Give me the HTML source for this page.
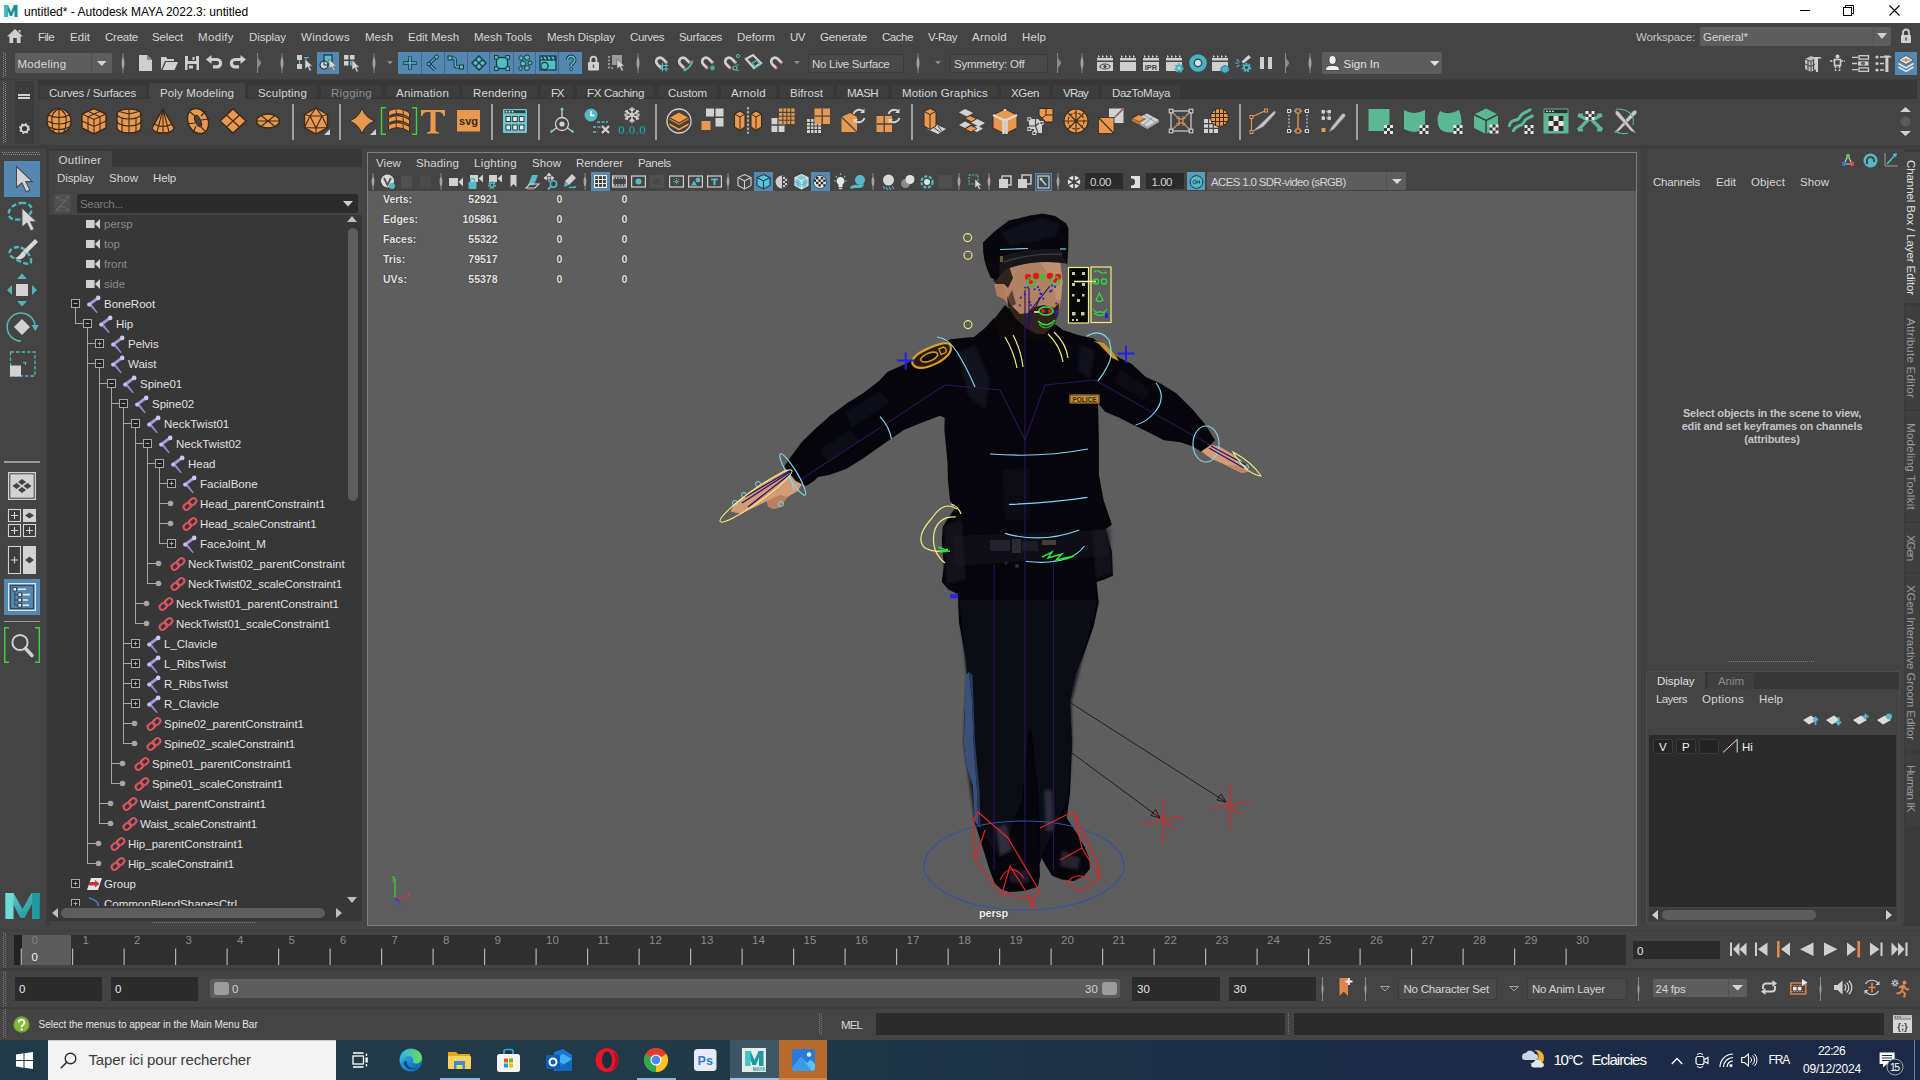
<!DOCTYPE html>
<html><head><meta charset="utf-8"><title>Maya</title>
<style>
html,body{margin:0;padding:0;}
body{width:1920px;height:1080px;overflow:hidden;background:#444444;font-family:"Liberation Sans",sans-serif;position:relative;}
div,svg{box-sizing:border-box;}
svg{overflow:visible;}
</style></head><body>
<!-- p_top -->
<div style="position:absolute;left:0px;top:0px;width:1920px;height:23px;background:#ffffff;"></div>
<svg style="position:absolute;left:3px;top:3px;" width="16" height="17" viewBox="0 0 16 17"><rect x="0" y="0" width="16" height="17" fill="#d9f0f0" opacity=".5"/><path d="M1.5 2 L5 2 L8 9 L11 2 L14.5 2 L14.5 14 L11.5 14 L11.5 7 L9 13 L7 13 L4.5 7 L4.5 14 L1.5 14 Z" fill="#1a8f96"/><path d="M1.5 2 L5 2 L5 14 L1.5 14Z" fill="#38b8b8"/></svg>
<div style="position:absolute;top:3.8px;line-height:16px;font-size:12px;color:#000;white-space:nowrap;letter-spacing:0.01px;left:24.0px;">untitled* - Autodesk MAYA 2022.3: untitled</div>
<div style="position:absolute;left:1800px;top:10px;width:10px;height:1px;background:#000;"></div>
<svg style="position:absolute;left:1843px;top:5px;" width="12" height="12" viewBox="0 0 12 12"><rect x="0.5" y="2.5" width="8" height="8" fill="none" stroke="#000"/><path d="M2.5 2.5 V0.5 H10.5 V8.5 H8.5" fill="none" stroke="#000"/></svg>
<svg style="position:absolute;left:1889px;top:5px;" width="12" height="12" viewBox="0 0 12 12"><path d="M0.5 0.5 L10.5 10.5 M10.5 0.5 L0.5 10.5" stroke="#000" stroke-width="1.1"/></svg>
<div style="position:absolute;left:0px;top:23px;width:1920px;height:27px;background:#444444;"></div>
<svg style="position:absolute;left:7px;top:29px;" width="16" height="14" viewBox="0 0 16 14"><path d="M8 0 L16 7.5 L13.6 7.5 L13.6 14 L9.8 14 L9.8 9 L6.2 9 L6.2 14 L2.4 14 L2.4 7.5 L0 7.5 Z M11.5 1 h2 v3 l-2 -1.8z" fill="#d0d0d0"/></svg>
<div style="position:absolute;top:30.0px;line-height:15px;font-size:11.5px;color:#d6d6d6;white-space:nowrap;letter-spacing:-0.63px;left:38.0px;">File</div>
<div style="position:absolute;top:30.0px;line-height:15px;font-size:11.5px;color:#d6d6d6;white-space:nowrap;letter-spacing:0.05px;left:70.0px;">Edit</div>
<div style="position:absolute;top:30.0px;line-height:15px;font-size:11.5px;color:#d6d6d6;white-space:nowrap;letter-spacing:-0.25px;left:105.0px;">Create</div>
<div style="position:absolute;top:30.0px;line-height:15px;font-size:11.5px;color:#d6d6d6;white-space:nowrap;letter-spacing:-0.16px;left:152.0px;">Select</div>
<div style="position:absolute;top:30.0px;line-height:15px;font-size:11.5px;color:#d6d6d6;white-space:nowrap;letter-spacing:0.35px;left:198.0px;">Modify</div>
<div style="position:absolute;top:30.0px;line-height:15px;font-size:11.5px;color:#d6d6d6;white-space:nowrap;letter-spacing:-0.10px;left:249.0px;">Display</div>
<div style="position:absolute;top:30.0px;line-height:15px;font-size:11.5px;color:#d6d6d6;white-space:nowrap;letter-spacing:0.34px;left:301.0px;">Windows</div>
<div style="position:absolute;top:30.0px;line-height:15px;font-size:11.5px;color:#d6d6d6;white-space:nowrap;letter-spacing:-0.03px;left:365.0px;">Mesh</div>
<div style="position:absolute;top:30.0px;line-height:15px;font-size:11.5px;color:#d6d6d6;white-space:nowrap;letter-spacing:-0.01px;left:408.0px;">Edit Mesh</div>
<div style="position:absolute;top:30.0px;line-height:15px;font-size:11.5px;color:#d6d6d6;white-space:nowrap;letter-spacing:0.00px;left:474.0px;">Mesh Tools</div>
<div style="position:absolute;top:30.0px;line-height:15px;font-size:11.5px;color:#d6d6d6;white-space:nowrap;letter-spacing:-0.09px;left:547.0px;">Mesh Display</div>
<div style="position:absolute;top:30.0px;line-height:15px;font-size:11.5px;color:#d6d6d6;white-space:nowrap;letter-spacing:-0.40px;left:630.0px;">Curves</div>
<div style="position:absolute;top:30.0px;line-height:15px;font-size:11.5px;color:#d6d6d6;white-space:nowrap;letter-spacing:-0.30px;left:679.0px;">Surfaces</div>
<div style="position:absolute;top:30.0px;line-height:15px;font-size:11.5px;color:#d6d6d6;white-space:nowrap;letter-spacing:0.05px;left:737.0px;">Deform</div>
<div style="position:absolute;top:30.0px;line-height:15px;font-size:11.5px;color:#d6d6d6;white-space:nowrap;letter-spacing:-0.49px;left:790.0px;">UV</div>
<div style="position:absolute;top:30.0px;line-height:15px;font-size:11.5px;color:#d6d6d6;white-space:nowrap;letter-spacing:-0.12px;left:820.0px;">Generate</div>
<div style="position:absolute;top:30.0px;line-height:15px;font-size:11.5px;color:#d6d6d6;white-space:nowrap;letter-spacing:-0.45px;left:882.0px;">Cache</div>
<div style="position:absolute;top:30.0px;line-height:15px;font-size:11.5px;color:#d6d6d6;white-space:nowrap;letter-spacing:-0.46px;left:928.0px;">V-Ray</div>
<div style="position:absolute;top:30.0px;line-height:15px;font-size:11.5px;color:#d6d6d6;white-space:nowrap;letter-spacing:0.29px;left:972.0px;">Arnold</div>
<div style="position:absolute;top:30.0px;line-height:15px;font-size:11.5px;color:#d6d6d6;white-space:nowrap;letter-spacing:0.09px;left:1022.0px;">Help</div>
<div style="position:absolute;top:30.0px;line-height:15px;font-size:11.5px;color:#c8c8c8;white-space:nowrap;letter-spacing:-0.15px;left:1636.0px;">Workspace:</div>
<div style="position:absolute;left:1700px;top:27px;width:191px;height:19px;background:#5d5d5d;border-radius:2px;"></div>
<div style="position:absolute;left:1873px;top:27px;width:1px;height:19px;background:#505050;"></div>
<div style="position:absolute;top:30.0px;line-height:15px;font-size:11.5px;color:#d6d6d6;white-space:nowrap;letter-spacing:-0.05px;left:1703.0px;">General*</div>
<svg style="position:absolute;left:1877px;top:33px;" width="10" height="6" viewBox="0 0 10 6"><path d="M0 0 H10 L5 6Z" fill="#d0d0d0"/></svg>
<svg style="position:absolute;left:1900px;top:28px;" width="12" height="16" viewBox="0 0 12 16"><path d="M3 7 V4.5 a3 3 0 0 1 6 0 V7" fill="none" stroke="#cfcfcf" stroke-width="1.8"/><rect x="1" y="7" width="10" height="8" rx="1" fill="#cfcfcf"/><rect x="5.3" y="9.5" width="1.4" height="3" fill="#444"/></svg>
<div style="position:absolute;left:0px;top:50px;width:1920px;height:30px;background:#444444;"></div>
<div style="position:absolute;left:0px;top:78.5px;width:1920px;height:1.5px;background:#3d3d3d;"></div>
<!-- p_status -->
<svg style="position:absolute;left:3px;top:52px;" width="4" height="25" viewBox="0 0 4 25"><path d="M0.5 0.0 V25" stroke="#8a8a8a" stroke-width="1" stroke-dasharray="1 1"/><path d="M2.5 1.0 V25" stroke="#8a8a8a" stroke-width="1" stroke-dasharray="1 1"/></svg>
<div style="position:absolute;left:15px;top:53px;width:97px;height:20px;background:#5d5d5d;border-radius:2px;"></div>
<div style="position:absolute;left:91px;top:53px;width:1px;height:20px;background:#525252;"></div>
<div style="position:absolute;top:57.0px;line-height:15px;font-size:11.5px;color:#d8d8d8;white-space:nowrap;letter-spacing:0.29px;left:17.5px;">Modeling</div>
<svg style="position:absolute;left:97.25px;top:61.0px;" width="9.5" height="5" viewBox="0 0 9.5 5"><path d="M0 0 H9.5 L4.75 5Z" fill="#d4d4d4"/></svg>
<svg style="position:absolute;left:121px;top:53px;" width="4" height="20" viewBox="0 0 4 20"><rect x="1.5" y="0" width="1" height="20" fill="#868686"/><path d="M2 3.500 C4 7 4 13 2 16.500 C0 13 0 7 2 3.500Z" fill="#a0a0a0"/></svg>
<svg style="position:absolute;left:139px;top:55px;" width="13" height="16" viewBox="0 0 13 16"><path d="M0 0 H8 L13 5 V16 H0Z" fill="#cfcfcf"/><path d="M8 0 V5 H13Z" fill="#8a8a8a"/></svg>
<svg style="position:absolute;left:161px;top:56px;" width="17" height="14" viewBox="0 0 17 14"><path d="M0 14 V1 H5 L6.5 3 H13 V5 H4 L0 14Z" fill="#cfcfcf"/><path d="M1.5 14 L5 6 H17 L13.5 14Z" fill="#cfcfcf"/></svg>
<svg style="position:absolute;left:185px;top:56px;" width="14" height="14" viewBox="0 0 14 14"><path d="M0 0 H14 V14 H0Z" fill="#cfcfcf"/><rect x="3" y="0" width="8" height="5" fill="#444"/><rect x="7.5" y="1" width="2" height="3" fill="#cfcfcf"/><rect x="2.5" y="8" width="9" height="6" fill="#444"/><rect x="4" y="9.5" width="4" height="3" fill="#cfcfcf"/></svg>
<svg style="position:absolute;left:206px;top:55px;" width="17" height="15" viewBox="0 0 17 15"><path d="M0 4.5 L5.5 0 V3 H11 a5.2 5.2 0 0 1 0 10.4 H7 V10.2 H11 a2.1 2.1 0 0 0 0 -4.2 H5.5 V9Z" fill="#cfcfcf"/></svg>
<svg style="position:absolute;left:229px;top:55px;" width="17" height="15" viewBox="0 0 17 15"><path transform="translate(17,0) scale(-1,1)" d="M0 4.5 L5.5 0 V3 H11 a5.2 5.2 0 0 1 0 10.4 H7 V10.2 H11 a2.1 2.1 0 0 0 0 -4.2 H5.5 V9Z" fill="#cfcfcf"/></svg>
<svg style="position:absolute;left:257px;top:53px;" width="5" height="20" viewBox="0 0 5 20"><path d="M0.5 0 V20 M0.5 5 L4 10 L0.5 15Z" fill="#8a8a8a" stroke="#8a8a8a" stroke-width="1"/></svg>
<svg style="position:absolute;left:280px;top:53px;" width="4" height="20" viewBox="0 0 4 20"><rect x="1.5" y="0" width="1" height="20" fill="#868686"/><path d="M2 3.500 C4 7 4 13 2 16.500 C0 13 0 7 2 3.500Z" fill="#a0a0a0"/></svg>
<svg style="position:absolute;left:296px;top:55px;" width="18" height="17" viewBox="0 0 18 17"><rect x="1" y="0" width="5" height="5" fill="#cfcfcf"/><rect x="1" y="9" width="5" height="5" fill="#cfcfcf"/><path d="M3.5 5 V9 M8 2.5 H13 M10 2.5 V6" stroke="#4fc1c1" stroke-width="1.2" fill="none"/><path transform="translate(9,4) scale(1.0)" d="M0 0 L0 10 L2.6 7.8 L4.6 12 L6.4 11.2 L4.4 7.2 L7.6 7.2Z" fill="#d4d4d4" stroke="#555" stroke-width="0.6"/></svg>
<div style="position:absolute;left:317px;top:52px;width:22px;height:22px;background:#5588b0;"></div>
<svg style="position:absolute;left:319px;top:54px;" width="18" height="18" viewBox="0 0 18 18"><rect x="5" y="1" width="8" height="9" fill="#4fc1c1" stroke="#1d3442" stroke-width="1.2"/><circle cx="5" cy="11" r="4" fill="#d4d4d4" stroke="#1d3442" stroke-width="1.2"/><path d="M5 11 V7 M5 11 H9" stroke="#1d3442" stroke-width="1"/><path transform="translate(10,5) scale(1.0)" d="M0 0 L0 10 L2.6 7.8 L4.6 12 L6.4 11.2 L4.4 7.2 L7.6 7.2Z" fill="#d4d4d4" stroke="#555" stroke-width="0.6"/></svg>
<svg style="position:absolute;left:343px;top:54px;" width="18" height="18" viewBox="0 0 18 18"><rect x="1" y="1" width="4.5" height="4.5" fill="#cfcfcf"/><rect x="7" y="1" width="4.5" height="4.5" fill="#cfcfcf"/><rect x="1" y="7" width="4.5" height="4.5" fill="#cfcfcf"/><rect x="7" y="7" width="4.5" height="4.5" fill="#4fc1c1"/><path transform="translate(9,6) scale(1.0)" d="M0 0 L0 10 L2.6 7.8 L4.6 12 L6.4 11.2 L4.4 7.2 L7.6 7.2Z" fill="#d4d4d4" stroke="#555" stroke-width="0.6"/></svg>
<svg style="position:absolute;left:372px;top:53px;" width="4" height="20" viewBox="0 0 4 20"><rect x="1.5" y="0" width="1" height="20" fill="#868686"/><path d="M2 3.500 C4 7 4 13 2 16.500 C0 13 0 7 2 3.500Z" fill="#a0a0a0"/></svg>
<svg style="position:absolute;left:387.0px;top:60.75px;" width="6" height="3.5" viewBox="0 0 6 3.5"><path d="M0 0 H6 L3.0 3.5Z" fill="#8a8a8a"/></svg>
<div style="position:absolute;left:398px;top:52px;width:184px;height:22px;background:#5588b0;"></div>
<div style="position:absolute;left:420.6px;top:52px;width:1px;height:22px;background:#3f6b88;"></div>
<div style="position:absolute;left:443.5px;top:52px;width:1px;height:22px;background:#3f6b88;"></div>
<div style="position:absolute;left:466.5px;top:52px;width:1px;height:22px;background:#3f6b88;"></div>
<div style="position:absolute;left:489.4px;top:52px;width:1px;height:22px;background:#3f6b88;"></div>
<div style="position:absolute;left:512.5px;top:52px;width:1px;height:22px;background:#3f6b88;"></div>
<div style="position:absolute;left:535.3px;top:52px;width:1px;height:22px;background:#3f6b88;"></div>
<div style="position:absolute;left:558.2px;top:52px;width:1px;height:22px;background:#3f6b88;"></div>
<svg style="position:absolute;left:400.5px;top:54px;" width="18" height="18" viewBox="0 0 18 18"><path d="M9 2 V16 M2 9 H16" stroke="#1d3442" stroke-width="3.4"/><path d="M9 2.6 V15.4 M2.6 9 H15.4" stroke="#4fc1c1" stroke-width="1.6"/></svg>
<svg style="position:absolute;left:423.5px;top:54px;" width="18" height="18" viewBox="0 0 18 18"><path d="M12 3 L5 10 L11 16" stroke="#1d3442" stroke-width="3.2" fill="none"/><path d="M12 3 L5 10 L11 16" stroke="#4fc1c1" stroke-width="1.4" fill="none"/><circle cx="12.5" cy="3" r="2" fill="#4fc1c1" stroke="#1d3442"/><circle cx="5" cy="10" r="1.8" fill="#4fc1c1" stroke="#1d3442"/></svg>
<svg style="position:absolute;left:446.5px;top:54px;" width="18" height="18" viewBox="0 0 18 18"><path d="M3 4 H7 C10 4 6 13 10 13 H15" stroke="#1d3442" stroke-width="3.2" fill="none"/><path d="M3 4 H7 C10 4 6 13 10 13 H15" stroke="#4fc1c1" stroke-width="1.4" fill="none"/><rect x="1" y="2" width="4" height="4" fill="#4fc1c1" stroke="#1d3442"/><rect x="12.5" y="11" width="4" height="4" fill="#4fc1c1" stroke="#1d3442"/></svg>
<svg style="position:absolute;left:469.5px;top:54px;" width="18" height="18" viewBox="0 0 18 18"><path d="M9 2 L16 9 L9 16 L2 9Z" fill="#4fc1c1" stroke="#1d3442" stroke-width="1.4"/><path d="M5.5 5.5 L12.5 12.5 M12.5 5.5 L5.5 12.5" stroke="#1d3442" stroke-width="1.2"/></svg>
<svg style="position:absolute;left:492.5px;top:54px;" width="18" height="18" viewBox="0 0 18 18"><rect x="3.5" y="3.5" width="11" height="11" fill="#4fc1c1" stroke="#1d3442" stroke-width="1.3"/><g fill="#4fc1c1" stroke="#1d3442" stroke-width="0.9"><rect x="1.5" y="1.5" width="3.6" height="3.6"/><rect x="12.9" y="1.5" width="3.6" height="3.6"/><rect x="1.5" y="12.9" width="3.6" height="3.6"/><rect x="12.9" y="12.9" width="3.6" height="3.6"/></g></svg>
<svg style="position:absolute;left:515.5px;top:54px;" width="18" height="18" viewBox="0 0 18 18"><g fill="#4fc1c1" stroke="#1d3442" stroke-width="1"><circle cx="5" cy="4" r="2.2"/><circle cx="11" cy="3.5" r="2.6"/><circle cx="14" cy="9" r="2"/><circle cx="7" cy="9.5" r="2.6"/><circle cx="11" cy="14" r="2.4"/><circle cx="4.5" cy="14.5" r="1.8"/></g></svg>
<svg style="position:absolute;left:538.5px;top:54px;" width="18" height="18" viewBox="0 0 18 18"><rect x="1" y="2" width="16" height="14" fill="#4fc1c1" stroke="#1d3442" stroke-width="1.2"/><path d="M1 6 H17" stroke="#1d3442" stroke-width="1.2"/><path d="M3 2 l2 4 M7 2 l2 4 M11 2 l2 4 M15 2 l2 4" stroke="#1d3442" stroke-width="1.6"/><circle cx="5.5" cy="12" r="3.6" fill="#4fc1c1" stroke="#1d3442" stroke-width="1.1"/></svg>
<svg style="position:absolute;left:561.5px;top:54px;" width="18" height="18" viewBox="0 0 18 18"><path d="M5.5 6 a3.6 3.6 0 1 1 5.5 3 c-1.6 1 -1.9 1.6 -1.9 3.3" fill="none" stroke="#1d3442" stroke-width="3.6"/><path d="M5.5 6 a3.6 3.6 0 1 1 5.5 3 c-1.6 1 -1.9 1.6 -1.9 3.3" fill="none" stroke="#4fc1c1" stroke-width="1.7"/><circle cx="9.1" cy="15.3" r="1.5" fill="#4fc1c1" stroke="#1d3442" stroke-width="0.9"/></svg>
<svg style="position:absolute;left:588px;top:55px;" width="11" height="16" viewBox="0 0 11 16"><path d="M2.6 7 V4.6 a2.9 2.9 0 0 1 5.8 0 V7" fill="none" stroke="#cfcfcf" stroke-width="1.8"/><rect x="0" y="7" width="11" height="8.5" rx="1" fill="#cfcfcf"/><rect x="4.8" y="9.5" width="1.4" height="3.4" fill="#555"/></svg>
<svg style="position:absolute;left:608px;top:54px;" width="18" height="18" viewBox="0 0 18 18"><path d="M1 2 V14 H6" fill="none" stroke="#cfcfcf" stroke-width="1.2" stroke-dasharray="2 1.5"/><rect x="4" y="1" width="10" height="10" fill="#9a9a9a"/><path transform="translate(9,5) scale(1.0)" d="M0 0 L0 10 L2.6 7.8 L4.6 12 L6.4 11.2 L4.4 7.2 L7.6 7.2Z" fill="#d4d4d4" stroke="#555" stroke-width="0.6"/></svg>
<svg style="position:absolute;left:636px;top:53px;" width="4" height="20" viewBox="0 0 4 20"><rect x="1.5" y="0" width="1" height="20" fill="#868686"/><path d="M2 3.500 C4 7 4 13 2 16.500 C0 13 0 7 2 3.500Z" fill="#a0a0a0"/></svg>
<svg style="position:absolute;left:652px;top:53px;" width="19" height="19" viewBox="0 0 19 19"><g transform="translate(8,8.5) rotate(-45)"><path d="M-3.800 6 V0 A3.800 3.800 0 0 1 3.800 0 V6" stroke="#cfcfcf" stroke-width="2.700" fill="none"/><path d="M-5.150 5 h2.700 v1.600 h-2.700z M2.450 5 h2.700 v1.600 h-2.700z" fill="#d86a7a"/></g><path d="M10.500 10 V18.500 M14 10 V18.500 M8 12.500 H16.500 M8 16 H16.500" stroke="#4fc1c1" stroke-width="1.1"/></svg>
<svg style="position:absolute;left:675px;top:53px;" width="19" height="19" viewBox="0 0 19 19"><g transform="translate(8,8.5) rotate(-45)"><path d="M-3.800 6 V0 A3.800 3.800 0 0 1 3.800 0 V6" stroke="#cfcfcf" stroke-width="2.700" fill="none"/><path d="M-5.150 5 h2.700 v1.600 h-2.700z M2.450 5 h2.700 v1.600 h-2.700z" fill="#d86a7a"/></g><path d="M10 17 C13 16 17 12 17.500 7.500" stroke="#4fc1c1" stroke-width="1.6" fill="none"/><circle cx="10" cy="17" r="1.3" fill="#4fc1c1"/></svg>
<svg style="position:absolute;left:698px;top:53px;" width="19" height="19" viewBox="0 0 19 19"><g transform="translate(8,8.5) rotate(-45)"><path d="M-3.800 6 V0 A3.800 3.800 0 0 1 3.800 0 V6" stroke="#cfcfcf" stroke-width="2.700" fill="none"/><path d="M-5.150 5 h2.700 v1.600 h-2.700z M2.450 5 h2.700 v1.600 h-2.700z" fill="#d86a7a"/></g><circle cx="14.500" cy="15" r="2.4" fill="#35b59a"/></svg>
<svg style="position:absolute;left:721px;top:53px;" width="19" height="19" viewBox="0 0 19 19"><g transform="translate(8,8.5) rotate(-45)"><path d="M-3.800 6 V0 A3.800 3.800 0 0 1 3.800 0 V6" stroke="#cfcfcf" stroke-width="2.700" fill="none"/><path d="M-5.150 5 h2.700 v1.600 h-2.700z M2.450 5 h2.700 v1.600 h-2.700z" fill="#d86a7a"/></g><circle cx="14" cy="15" r="2" fill="none" stroke="#4fc1c1" stroke-width="1.1"/><circle cx="17" cy="3" r="1.6" fill="none" stroke="#4fc1c1"/><path d="M15.500 12 H18 M15.500 17.500 H18" stroke="#4fc1c1" stroke-width="0.8"/></svg>
<svg style="position:absolute;left:744px;top:53px;" width="19" height="19" viewBox="0 0 19 19"><path d="M2 6 L9 2 L17 10 L10 15Z" fill="none" stroke="#cfcfcf" stroke-width="2.2"/><path d="M8 10 L13 7.5 L16.5 11.5 L11.5 14.5Z" fill="none" stroke="#4fc1c1" stroke-width="1.3"/></svg>
<svg style="position:absolute;left:767px;top:53px;" width="19" height="19" viewBox="0 0 19 19"><g transform="translate(8,8.5) rotate(-45)"><path d="M-3.800 6 V0 A3.800 3.800 0 0 1 3.800 0 V6" stroke="#cfcfcf" stroke-width="2.700" fill="none"/><path d="M-5.150 5 h2.700 v1.600 h-2.700z M2.450 5 h2.700 v1.600 h-2.700z" fill="#d86a7a"/></g></svg>
<svg style="position:absolute;left:793.5px;top:60.75px;" width="6" height="3.5" viewBox="0 0 6 3.5"><path d="M0 0 H6 L3.0 3.5Z" fill="#8a8a8a"/></svg>
<div style="position:absolute;left:808px;top:54px;width:96px;height:19px;background:#494949;border:1px solid #3b3b3b;border-radius:2px;"></div>
<div style="position:absolute;top:57.0px;line-height:15px;font-size:11.5px;color:#d6d6d6;white-space:nowrap;letter-spacing:-0.29px;left:812.0px;">No Live Surface</div>
<svg style="position:absolute;left:916px;top:53px;" width="4" height="20" viewBox="0 0 4 20"><rect x="1.5" y="0" width="1" height="20" fill="#868686"/><path d="M2 3.500 C4 7 4 13 2 16.500 C0 13 0 7 2 3.500Z" fill="#a0a0a0"/></svg>
<svg style="position:absolute;left:935.0px;top:60.75px;" width="6" height="3.5" viewBox="0 0 6 3.5"><path d="M0 0 H6 L3.0 3.5Z" fill="#8a8a8a"/></svg>
<div style="position:absolute;left:950px;top:54px;width:98px;height:19px;background:#494949;border:1px solid #3b3b3b;border-radius:2px;"></div>
<div style="position:absolute;top:57.0px;line-height:15px;font-size:11.5px;color:#d6d6d6;white-space:nowrap;letter-spacing:-0.21px;left:954.0px;">Symmetry: Off</div>
<svg style="position:absolute;left:1057px;top:53px;" width="5" height="20" viewBox="0 0 5 20"><path d="M0.5 0 V20 M0.5 5 L4 10 L0.5 15Z" fill="#8a8a8a" stroke="#8a8a8a" stroke-width="1"/></svg>
<svg style="position:absolute;left:1080px;top:53px;" width="4" height="20" viewBox="0 0 4 20"><rect x="1.5" y="0" width="1" height="20" fill="#868686"/><path d="M2 3.500 C4 7 4 13 2 16.500 C0 13 0 7 2 3.500Z" fill="#a0a0a0"/></svg>
<svg style="position:absolute;left:1097px;top:55px;" width="16" height="16" viewBox="0 0 16 16"><path d="M0 3 H16 V5.5 H0Z" fill="#cfcfcf"/><path d="M1 0 l2 1.5 l-2 1.5z M5 0 l2 1.5 l-2 1.5z M9 0 l2 1.5 l-2 1.5z M13 0 l2 1.5 l-2 1.5z" fill="#cfcfcf"/><rect x="0" y="7" width="16" height="9" fill="#cfcfcf"/><ellipse cx="8" cy="11.5" rx="5.5" ry="3" fill="#444"/><ellipse cx="8" cy="11.5" rx="4.2" ry="2" fill="#cfcfcf"/><circle cx="8" cy="11.5" r="1.6" fill="#444"/></svg>
<svg style="position:absolute;left:1120px;top:55px;" width="16" height="16" viewBox="0 0 16 16"><path d="M0 3 H16 V5.5 H0Z" fill="#cfcfcf"/><path d="M1 0 l2 1.5 l-2 1.5z M5 0 l2 1.5 l-2 1.5z M9 0 l2 1.5 l-2 1.5z M13 0 l2 1.5 l-2 1.5z" fill="#cfcfcf"/><rect x="0" y="7" width="16" height="9" fill="#cfcfcf"/></svg>
<svg style="position:absolute;left:1143px;top:55px;" width="16" height="16" viewBox="0 0 16 16"><path d="M0 3 H16 V5.5 H0Z" fill="#cfcfcf"/><path d="M1 0 l2 1.5 l-2 1.5z M5 0 l2 1.5 l-2 1.5z M9 0 l2 1.5 l-2 1.5z M13 0 l2 1.5 l-2 1.5z" fill="#cfcfcf"/><rect x="0" y="7" width="16" height="9" fill="#cfcfcf"/><text x="8" y="14.6" font-size="7.5" font-weight="bold" text-anchor="middle" fill="#3a3a3a" font-family="Liberation Sans">IPR</text></svg>
<svg style="position:absolute;left:1166px;top:55px;" width="18" height="18" viewBox="0 0 18 18"><path d="M0 3 H16 V5.5 H0Z" fill="#cfcfcf"/><path d="M1 0 l2 1.5 l-2 1.5z M5 0 l2 1.5 l-2 1.5z M9 0 l2 1.5 l-2 1.5z M13 0 l2 1.5 l-2 1.5z" fill="#cfcfcf"/><rect x="0" y="7" width="16" height="9" fill="#cfcfcf"/><circle cx="13" cy="13" r="3.6" fill="none" stroke="#45b5c4" stroke-width="2.2" stroke-dasharray="1.8 1.3"/><circle cx="13" cy="13" r="2.4000000000000004" fill="none" stroke="#45b5c4" stroke-width="1.6"/></svg>
<svg style="position:absolute;left:1188.5px;top:54px;" width="18" height="18" viewBox="0 0 18 18"><circle cx="9" cy="9" r="6.6" fill="none" stroke="#45b5c4" stroke-width="4.4"/><circle cx="9" cy="9" r="3" fill="#cfe8ec"/></svg>
<svg style="position:absolute;left:1212px;top:55px;" width="18" height="18" viewBox="0 0 18 18"><path d="M0 3 H16 V5.5 H0Z" fill="#cfcfcf"/><path d="M1 0 l2 1.5 l-2 1.5z M5 0 l2 1.5 l-2 1.5z M9 0 l2 1.5 l-2 1.5z M13 0 l2 1.5 l-2 1.5z" fill="#cfcfcf"/><rect x="0" y="7" width="16" height="9" fill="#cfcfcf"/><path d="M9 12.5 l4 -2.2 l4 2.2 v3.6 l-4 2.2 l-4 -2.2z" fill="#45b5c4" stroke="#2a6c78" stroke-width="0.8"/></svg>
<svg style="position:absolute;left:1234px;top:54px;" width="18" height="18" viewBox="0 0 18 18"><path d="M14.5 1 L17 3.5 L9.5 9.5 L7.5 7.5Z" fill="#cfcfcf"/><path d="M1 9 H5 M2.5 5.5 L5.5 7.5 M2.5 13 L5.5 11" stroke="#45b5c4" stroke-width="1.2"/><circle cx="12.5" cy="13.5" r="3.6" fill="none" stroke="#45b5c4" stroke-width="2.2" stroke-dasharray="1.8 1.3"/><circle cx="12.5" cy="13.5" r="2.4000000000000004" fill="none" stroke="#45b5c4" stroke-width="1.6"/></svg>
<div style="position:absolute;left:1260px;top:57px;width:4px;height:12px;background:#cfcfcf;"></div>
<div style="position:absolute;left:1267.5px;top:57px;width:4px;height:12px;background:#cfcfcf;"></div>
<svg style="position:absolute;left:1285px;top:53px;" width="5" height="20" viewBox="0 0 5 20"><path d="M0.5 0 V20 M0.5 5 L4 10 L0.5 15Z" fill="#8a8a8a" stroke="#8a8a8a" stroke-width="1"/></svg>
<svg style="position:absolute;left:1308px;top:53px;" width="4" height="20" viewBox="0 0 4 20"><rect x="1.5" y="0" width="1" height="20" fill="#868686"/><path d="M2 3.500 C4 7 4 13 2 16.500 C0 13 0 7 2 3.500Z" fill="#a0a0a0"/></svg>
<div style="position:absolute;left:1322px;top:52px;width:120px;height:22px;background:#5d5d5d;border-radius:2px;"></div>
<svg style="position:absolute;left:1325px;top:55px;" width="15" height="16" viewBox="0 0 15 16"><ellipse cx="7.5" cy="5" rx="3.6" ry="4.4" fill="#f0f0f0" stroke="#333" stroke-width="0.8"/><path d="M0.5 15.5 C0.5 10.5 4 10.5 7.5 10.5 S14.5 10.5 14.5 15.5Z" fill="#f0f0f0" stroke="#333" stroke-width="0.8"/></svg>
<div style="position:absolute;top:57.0px;line-height:15px;font-size:11.5px;color:#e0e0e0;white-space:nowrap;letter-spacing:0.03px;left:1343.5px;">Sign In</div>
<svg style="position:absolute;left:1429.75px;top:60.5px;" width="9.5" height="5" viewBox="0 0 9.5 5"><path d="M0 0 H9.5 L4.75 5Z" fill="#e0e0e0"/></svg>
<svg style="position:absolute;left:1805px;top:55px;" width="17" height="17" viewBox="0 0 17 17"><path d="M0 4 L6 1 L11 3 V14 L6 17 L0 14Z" fill="#bdbdbd"/><path d="M0 4 L6 6.5 V17 M6 6.5 L11 3 M0 9 L6 11.5 L11 8.5 M3 5 V15.5 M8.5 5 V15" stroke="#444" stroke-width="1" fill="none"/><path d="M9 2 H15 L17 3.5 H13 V17 H11" fill="#cfcfcf"/></svg>
<svg style="position:absolute;left:1829px;top:54px;" width="17" height="18" viewBox="0 0 17 18"><circle cx="8.5" cy="2.5" r="2" fill="#cfcfcf"/><rect x="5.5" y="5.5" width="6" height="6" fill="none" stroke="#cfcfcf" stroke-width="1.6"/><path d="M1 7 H5 M12 7 H16 M6.5 12 V17 M10.5 12 V17" stroke="#cfcfcf" stroke-width="1.6" stroke-dasharray="2.2 1"/></svg>
<svg style="position:absolute;left:1852px;top:55px;" width="17" height="17" viewBox="0 0 17 17"><g fill="none" stroke="#cfcfcf" stroke-width="1.3"><rect x="7" y="0.7" width="9.5" height="3.4"/><rect x="7" y="12.9" width="9.5" height="3.4"/><path d="M0 2.4 H6 M0 8.5 H5 M0 14.6 H6"/></g><rect x="6" y="6.4" width="10.5" height="4.2" fill="#cfcfcf"/><circle cx="11" cy="8.5" r="2.1" fill="#666"/></svg>
<svg style="position:absolute;left:1875px;top:55px;" width="17" height="17" viewBox="0 0 17 17"><circle cx="2" cy="2" r="1.6" fill="#cfcfcf"/><circle cx="2" cy="8.5" r="1.6" fill="#cfcfcf"/><circle cx="2" cy="15" r="1.6" fill="#cfcfcf"/><path d="M5 2 H9 M5 8.5 H9 M5 15 H9" stroke="#cfcfcf" stroke-width="1.4"/><path d="M9 0.5 H14.5 L17 2.6 H13.4 V17 H10.4 V2.6 H9Z" fill="#cfcfcf"/></svg>
<div style="position:absolute;left:1895px;top:52px;width:22px;height:23px;background:#5588b0;"></div>
<svg style="position:absolute;left:1898px;top:55px;" width="16" height="17" viewBox="0 0 16 17"><path d="M8 0.5 L15.5 5 L8 9.5 L0.5 5Z" fill="#e6e6e6" stroke="#2a3f4e" stroke-width="0.7"/><path d="M4 5 H12 M8 3 V7" stroke="#c0703a" stroke-width="1.2"/><path d="M0.5 8.5 L8 13 L15.5 8.5 M0.5 12 L8 16.5 L15.5 12" fill="none" stroke="#e6e6e6" stroke-width="1.5"/></svg>
<!-- p_shelf -->
<svg style="position:absolute;left:3px;top:82px;" width="4" height="61" viewBox="0 0 4 61"><path d="M0.5 0.0 V61" stroke="#8a8a8a" stroke-width="1" stroke-dasharray="1 1"/><path d="M2.5 1.0 V61" stroke="#8a8a8a" stroke-width="1" stroke-dasharray="1 1"/></svg>
<div style="position:absolute;left:15px;top:81px;width:19px;height:63px;background:#3b3b3b;"></div>
<div style="position:absolute;left:18px;top:94px;width:12px;height:1.6px;background:#d0d0d0;"></div>
<div style="position:absolute;left:18px;top:97px;width:12px;height:1.6px;background:#d0d0d0;"></div>
<svg style="position:absolute;left:18.5px;top:123px;" width="11" height="11" viewBox="0 0 11 11"><circle cx="5.5" cy="5.5" r="3.6" fill="none" stroke="#d0d0d0" stroke-width="2"/><circle cx="5.5" cy="5.5" r="4.6" fill="none" stroke="#d0d0d0" stroke-width="1.8" stroke-dasharray="1.9 1.7"/></svg>
<div style="position:absolute;left:38px;top:80px;width:1879px;height:19px;background:#373737;"></div>
<div style="position:absolute;left:38px;top:84px;width:109px;height:15px;background:#3d3d3d;border-radius:2px 2px 0 0;box-shadow:inset 0 0 0 1px #363636;"></div>
<div style="position:absolute;top:86.0px;line-height:15px;font-size:11.5px;color:#d6d6d6;white-space:nowrap;letter-spacing:-0.26px;left:49.0px;">Curves / Surfaces</div>
<div style="position:absolute;left:149px;top:83px;width:96px;height:17px;background:#444444;border-radius:2px 2px 0 0;"></div>
<div style="position:absolute;top:86.0px;line-height:15px;font-size:11.5px;color:#d6d6d6;white-space:nowrap;letter-spacing:0.14px;left:160.0px;">Poly Modeling</div>
<div style="position:absolute;left:247px;top:84px;width:71px;height:15px;background:#3d3d3d;border-radius:2px 2px 0 0;box-shadow:inset 0 0 0 1px #363636;"></div>
<div style="position:absolute;top:86.0px;line-height:15px;font-size:11.5px;color:#d6d6d6;white-space:nowrap;letter-spacing:0.19px;left:258.0px;">Sculpting</div>
<div style="position:absolute;left:320px;top:84px;width:63px;height:15px;background:#3d3d3d;border-radius:2px 2px 0 0;box-shadow:inset 0 0 0 1px #363636;"></div>
<div style="position:absolute;top:86.0px;line-height:15px;font-size:11.5px;color:#8f8f8f;white-space:nowrap;letter-spacing:0.29px;left:331.0px;">Rigging</div>
<div style="position:absolute;left:385px;top:84px;width:75px;height:15px;background:#3d3d3d;border-radius:2px 2px 0 0;box-shadow:inset 0 0 0 1px #363636;"></div>
<div style="position:absolute;top:86.0px;line-height:15px;font-size:11.5px;color:#d6d6d6;white-space:nowrap;letter-spacing:0.21px;left:396.0px;">Animation</div>
<div style="position:absolute;left:462px;top:84px;width:76px;height:15px;background:#3d3d3d;border-radius:2px 2px 0 0;box-shadow:inset 0 0 0 1px #363636;"></div>
<div style="position:absolute;top:86.0px;line-height:15px;font-size:11.5px;color:#d6d6d6;white-space:nowrap;letter-spacing:0.10px;left:473.0px;">Rendering</div>
<div style="position:absolute;left:540px;top:84px;width:34px;height:15px;background:#3d3d3d;border-radius:2px 2px 0 0;box-shadow:inset 0 0 0 1px #363636;"></div>
<div style="position:absolute;top:86.0px;line-height:15px;font-size:11.5px;color:#d6d6d6;white-space:nowrap;letter-spacing:-1.35px;left:551.0px;">FX</div>
<div style="position:absolute;left:576px;top:84px;width:79px;height:15px;background:#3d3d3d;border-radius:2px 2px 0 0;box-shadow:inset 0 0 0 1px #363636;"></div>
<div style="position:absolute;top:86.0px;line-height:15px;font-size:11.5px;color:#d6d6d6;white-space:nowrap;letter-spacing:-0.31px;left:587.0px;">FX Caching</div>
<div style="position:absolute;left:657px;top:84px;width:61px;height:15px;background:#3d3d3d;border-radius:2px 2px 0 0;box-shadow:inset 0 0 0 1px #363636;"></div>
<div style="position:absolute;top:86.0px;line-height:15px;font-size:11.5px;color:#d6d6d6;white-space:nowrap;letter-spacing:-0.10px;left:668.0px;">Custom</div>
<div style="position:absolute;left:720px;top:84px;width:57px;height:15px;background:#3d3d3d;border-radius:2px 2px 0 0;box-shadow:inset 0 0 0 1px #363636;"></div>
<div style="position:absolute;top:86.0px;line-height:15px;font-size:11.5px;color:#d6d6d6;white-space:nowrap;letter-spacing:0.29px;left:731.0px;">Arnold</div>
<div style="position:absolute;left:779px;top:84px;width:55px;height:15px;background:#3d3d3d;border-radius:2px 2px 0 0;box-shadow:inset 0 0 0 1px #363636;"></div>
<div style="position:absolute;top:86.0px;line-height:15px;font-size:11.5px;color:#d6d6d6;white-space:nowrap;letter-spacing:0.06px;left:790.0px;">Bifrost</div>
<div style="position:absolute;left:836px;top:84px;width:53px;height:15px;background:#3d3d3d;border-radius:2px 2px 0 0;box-shadow:inset 0 0 0 1px #363636;"></div>
<div style="position:absolute;top:86.0px;line-height:15px;font-size:11.5px;color:#d6d6d6;white-space:nowrap;letter-spacing:-0.56px;left:847.0px;">MASH</div>
<div style="position:absolute;left:891px;top:84px;width:108px;height:15px;background:#3d3d3d;border-radius:2px 2px 0 0;box-shadow:inset 0 0 0 1px #363636;"></div>
<div style="position:absolute;top:86.0px;line-height:15px;font-size:11.5px;color:#d6d6d6;white-space:nowrap;letter-spacing:0.15px;left:902.0px;">Motion Graphics</div>
<div style="position:absolute;left:1000px;top:84px;width:50px;height:15px;background:#3d3d3d;border-radius:2px 2px 0 0;box-shadow:inset 0 0 0 1px #363636;"></div>
<div style="position:absolute;top:86.0px;line-height:15px;font-size:11.5px;color:#d6d6d6;white-space:nowrap;letter-spacing:-0.35px;left:1011.0px;">XGen</div>
<div style="position:absolute;left:1052px;top:84px;width:47px;height:15px;background:#3d3d3d;border-radius:2px 2px 0 0;box-shadow:inset 0 0 0 1px #363636;"></div>
<div style="position:absolute;top:86.0px;line-height:15px;font-size:11.5px;color:#d6d6d6;white-space:nowrap;letter-spacing:-0.78px;left:1063.0px;">VRay</div>
<div style="position:absolute;left:1101px;top:84px;width:80px;height:15px;background:#3d3d3d;border-radius:2px 2px 0 0;box-shadow:inset 0 0 0 1px #363636;"></div>
<div style="position:absolute;top:86.0px;line-height:15px;font-size:11.5px;color:#d6d6d6;white-space:nowrap;letter-spacing:-0.30px;left:1112.0px;">DazToMaya</div>
<svg style="position:absolute;left:45px;top:107px;" width="28" height="28" viewBox="0 0 28 28"><ellipse cx="14" cy="14" rx="12" ry="12.5" fill="#e8994f" stroke="#3d2a1a" stroke-width="1.4"/><path d="M2 14 Q14 20 26 14 M3.5 8 Q14 13 24.5 8 M3.5 20 Q14 25 24.5 20 M14 1.5 V26.5 M14 1.5 Q5 6 7 16 Q7.5 22 9 25 M14 1.5 Q23 6 21 16 Q20.5 22 19 25" fill="none" stroke="#3d2a1a" stroke-width="1.1"/></svg>
<svg style="position:absolute;left:80px;top:107px;" width="28" height="28" viewBox="0 0 28 28"><path d="M14 1.5 L26 7 V21 L14 27 L2 21 V7Z" fill="#e8994f" stroke="#3d2a1a" stroke-width="1.4"/><path d="M2 7 L14 12.5 L26 7 M14 12.5 V27 M8 4.2 L20 9.8 V24 M20 4.2 L8 9.8 V24 M2 14 L14 19.5 L26 14" fill="none" stroke="#3d2a1a" stroke-width="1.1"/></svg>
<svg style="position:absolute;left:115px;top:107px;" width="28" height="28" viewBox="0 0 28 28"><path d="M2 7 V21 A12 5 0 0 0 26 21 V7 A12 5 0 0 0 2 7Z" fill="#e8994f" stroke="#3d2a1a" stroke-width="1.4"/><path d="M2 7 A12 5 0 0 0 26 7 M2 14 A12 5 0 0 0 26 14 M14 2 V12 M4 4.5 L14 7 L24 4.5 M14 12 V26 M7 11 V25 M21 11 V25" fill="none" stroke="#3d2a1a" stroke-width="1.1"/></svg>
<svg style="position:absolute;left:149px;top:107px;" width="28" height="28" viewBox="0 0 28 28"><path d="M14 2 L25 21 A11 5 0 0 1 3 21Z" fill="#e8994f" stroke="#3d2a1a" stroke-width="1.4"/><path d="M14 2 V26 M14 2 L8 25 M14 2 L20 25 M5 17 Q14 22 23 17" fill="none" stroke="#3d2a1a" stroke-width="1.1"/></svg>
<svg style="position:absolute;left:184px;top:107px;" width="28" height="28" viewBox="0 0 28 28"><ellipse cx="14" cy="14" rx="10" ry="13" transform="rotate(-25 14 14)" fill="#e8994f" stroke="#3d2a1a" stroke-width="1.4"/><ellipse cx="14" cy="14" rx="2.6" ry="6" transform="rotate(-25 14 14)" fill="#444" stroke="#3d2a1a" stroke-width="1.2"/><path d="M6 5 L11 9 M22 4 L17 9 M3 17 L11 16 M25 12 L17 13 M9 26 L12 19 M21 24 L16 19" stroke="#3d2a1a" stroke-width="1.1"/></svg>
<svg style="position:absolute;left:219px;top:107px;" width="28" height="28" viewBox="0 0 28 28"><path d="M14 2 L27 14 L14 26 L1 14Z" fill="#e8994f" stroke="#3d2a1a" stroke-width="1.4"/><path d="M7.5 8 L20.5 20 M20.5 8 L7.5 20" stroke="#3d2a1a" stroke-width="1.2"/></svg>
<svg style="position:absolute;left:254px;top:107px;" width="28" height="28" viewBox="0 0 28 28"><ellipse cx="14" cy="14" rx="11.5" ry="7" fill="#e8994f" stroke="#3d2a1a" stroke-width="1.4"/><path d="M2.5 14 H25.5 M7 8.5 L21 19.5 M21 8.5 L7 19.5" stroke="#3d2a1a" stroke-width="1.1"/></svg>
<div style="position:absolute;left:292.25px;top:104px;width:1.5px;height:36px;background:#a0a0a0;"></div>
<svg style="position:absolute;left:302px;top:107px;" width="28" height="28" viewBox="0 0 28 28"><path d="M14 1 L25.5 7.5 V20.5 L14 27 L2.5 20.5 V7.5Z" fill="#e8994f" stroke="#3d2a1a" stroke-width="1.4"/><path d="M14 1 L8 9 H20Z M8 9 L14 21 L20 9 M2.5 7.5 L8 9 L2.5 20.5 L14 21 L25.5 20.5 L20 9 L25.5 7.5 M14 21 V27" fill="none" stroke="#3d2a1a" stroke-width="1.1"/><path d="M28 22 V28 H22Z" fill="#d0d0d0"/></svg>
<div style="position:absolute;left:339.25px;top:104px;width:1.5px;height:36px;background:#a0a0a0;"></div>
<svg style="position:absolute;left:348px;top:107px;" width="28" height="28" viewBox="0 0 28 28"><path d="M14 1 C16.500 8 20 11.500 27 14 C20 16.500 16.500 20 14 27 C11.500 20 8 16.500 1 14 C8 11.500 11.500 8 14 1Z" stroke-linejoin="round" fill="#e8994f" stroke="#3d2a1a" stroke-width="1"/><path d="M28 22 V28 H22Z" fill="#d0d0d0"/></svg>
<svg style="position:absolute;left:384.5px;top:107px;" width="28" height="28" viewBox="0 0 28 28"><path d="M1 0.8 H-3.500 V27.2 H1 M27 0.8 H31.500 V27.2 H27" fill="none" stroke="#3ed13e" stroke-width="1.4"/><path d="M24.500 10 C22 8 8 11 3.500 11.5" fill="none" stroke="#a8642c" stroke-width="2.600"/><path d="M24.500 17 C22 15 8 18 3.500 18.5" fill="none" stroke="#a8642c" stroke-width="2.600"/><path d="M3.500 4.5 C9 0.0 19 1.5 24.500 6.0 L24.500 11.0 C19 6.5 9 5.0 3.500 9.5Z" fill="#e8994f" stroke="#3d2a1a" stroke-width="1"/><path d="M11 2.2 L11.500 7.1 M18 3.3 L18.500 8.3" stroke="#3d2a1a" stroke-width="0.9"/><path d="M3.500 11.5 C9 7.0 19 8.5 24.500 13.0 L24.500 18.0 C19 13.5 9 12.0 3.500 16.5Z" fill="#e8994f" stroke="#3d2a1a" stroke-width="1"/><path d="M11 9.2 L11.500 14.1 M18 10.3 L18.500 15.3" stroke="#3d2a1a" stroke-width="0.9"/><path d="M3.500 18.5 C9 14.0 19 15.5 24.500 20.0 L24.500 25.0 C19 20.5 9 19.0 3.500 23.5Z" fill="#e8994f" stroke="#3d2a1a" stroke-width="1"/><path d="M11 16.2 L11.500 21.1 M18 17.3 L18.500 22.3" stroke="#3d2a1a" stroke-width="0.9"/></svg>
<svg style="position:absolute;left:419px;top:107px;" width="28" height="28" viewBox="0 0 28 28"><path d="M2 3 H26 V9 H24.5 C24 6 22.5 5 19 5 H16.5 V22.5 C16.5 24.5 17.5 25 20 25.2 V26.5 H8 V25.2 C10.5 25 11.5 24.5 11.5 22.5 V5 H9 C5.5 5 4 6 3.5 9 H2Z" fill="#e8994f"/></svg>
<svg style="position:absolute;left:453px;top:107px;" width="28" height="28" viewBox="0 0 28 28"><rect x="4" y="3" width="23" height="21.500" fill="#e8994f"/><text x="15.500" y="17.500" font-family="Liberation Sans" font-weight="bold" font-size="11" text-anchor="middle" fill="#3d2a1a">svg</text></svg>
<div style="position:absolute;left:491.25px;top:104px;width:1.5px;height:36px;background:#a0a0a0;"></div>
<svg style="position:absolute;left:501px;top:107px;" width="28" height="28" viewBox="0 0 28 28"><rect x="2" y="2" width="24" height="24" rx="1" fill="#6ec6cf"/><rect x="3.5" y="3.2" width="21" height="3" fill="#2f3f44"/><circle cx="5.5" cy="4.7" r="0.9" fill="#e8e8e8"/><circle cx="8.5" cy="4.7" r="0.9" fill="#e8e8e8"/><circle cx="11.5" cy="4.7" r="0.9" fill="#e8e8e8"/><g fill="#e8e8e8" stroke="#2f3f44" stroke-width="1"><rect x="5" y="9.5" width="4.6" height="5"/><rect x="11.7" y="9.5" width="4.6" height="5"/><rect x="18.4" y="9.5" width="4.6" height="5"/><rect x="5" y="18" width="4.6" height="5"/><rect x="11.7" y="18" width="4.6" height="5"/><rect x="18.4" y="18" width="4.6" height="5"/></g></svg>
<div style="position:absolute;left:538.25px;top:104px;width:1.5px;height:36px;background:#a0a0a0;"></div>
<svg style="position:absolute;left:548px;top:107px;" width="28" height="28" viewBox="0 0 28 28"><circle cx="14" cy="17" r="6.5" fill="none" stroke="#d2d2d2" stroke-width="1.3"/><circle cx="14" cy="17" r="2.6" fill="#d2d2d2"/><path d="M14 10 V1.5 M9 20.5 L3 25 M19 20.5 L25 25" stroke="#d2d2d2" stroke-width="1.3"/><path d="M14 0 l2 3 h-4z M2 26 l1 -3.6 l2.4 2.6z M26 26 l-1 -3.6 l-2.4 2.6z" fill="#6ec6cf"/></svg>
<svg style="position:absolute;left:583px;top:107px;" width="28" height="28" viewBox="0 0 28 28"><circle cx="8" cy="8" r="6.5" fill="#55b9c6"/><path d="M8 4 V8.5 H11.5" stroke="#fff" stroke-width="1.4" fill="none"/><path d="M14 15 H25 M10 20 H18 M10 25 H15" stroke="#55b9c6" stroke-width="1.4" stroke-dasharray="3 1.5"/><path d="M19 19 L26 26 M26 19 L19 26" stroke="#d2d2d2" stroke-width="2.2"/></svg>
<svg style="position:absolute;left:618px;top:107px;" width="28" height="28" viewBox="0 0 28 28"><path d="M14 0 V16 M7 4 L21 12 M21 4 L7 12 M11.500 1.500 L14 4 L16.500 1.500 M11.500 14.500 L14 12 L16.500 14.500 M6.500 7.500 L10 6.500 L9 3 M21.500 7.500 L18 6.500 L19 3 M6.500 8.500 L10 9.500 L9 13 M21.500 8.500 L18 9.500 L19 13" stroke="#d2d2d2" stroke-width="1.500" fill="none"/><text x="14" y="26.5" font-family="Liberation Sans" font-weight="bold" font-size="11" text-anchor="middle" fill="#4ab4c2" stroke="#1f3c42" stroke-width="0.5" textLength="28" lengthAdjust="spacingAndGlyphs">0,0,0</text></svg>
<div style="position:absolute;left:655.25px;top:104px;width:1.5px;height:36px;background:#a0a0a0;"></div>
<svg style="position:absolute;left:665px;top:107px;" width="28" height="28" viewBox="0 0 28 28"><circle cx="14" cy="14" r="12" fill="none" stroke="#d2d2d2" stroke-width="1.3"/><path d="M14 5 L24 10.5 L14 16 L4 10.5Z" fill="#e8994f" stroke="#3d2a1a" stroke-width="0.9"/><path d="M4 10.5 V13 L14 18.5 L24 13 V10.5 L14 16Z" fill="#c07a3a" stroke="#3d2a1a" stroke-width="0.6"/><path d="M4 15.5 L14 21 L24 15.5 V18.5 L14 24 L4 18.5Z" fill="#e8994f" stroke="#3d2a1a" stroke-width="0.8"/></svg>
<svg style="position:absolute;left:699px;top:107px;" width="28" height="28" viewBox="0 0 28 28"><rect x="7" y="1.5" width="8" height="8" fill="#d2d2d2"/><rect x="16.5" y="1.5" width="8" height="8" fill="#d2d2d2"/><rect x="16.5" y="11" width="8" height="8.5" fill="#d2d2d2"/><rect x="2.5" y="14" width="9" height="9" fill="#e8994f"/></svg>
<svg style="position:absolute;left:734px;top:107px;" width="28" height="28" viewBox="0 0 28 28"><path d="M0.5 7 L6 4 L11 7 V20 L6 23.5 L0.5 20Z M17 7 L22 4 L27.5 7 V20 L22 23.5 L17 20Z" fill="#e8994f" stroke="#3d2a1a" stroke-width="1.1"/><path d="M6 10 V23.5 M0.5 7 L6 10 L11 7 M22 10 V23.5 M17 7 L22 10 L27.5 7" stroke="#3d2a1a" stroke-width="1" fill="none"/><path d="M14 0 V28" stroke="#e6e6e6" stroke-width="1.2" stroke-dasharray="2.5 1.6"/></svg>
<svg style="position:absolute;left:769px;top:107px;" width="28" height="28" viewBox="0 0 28 28"><rect x="2.5" y="11" width="13" height="14" fill="#d2d2d2"/><path d="M9 11 V25 M2.5 18 H15.5" stroke="#444" stroke-width="1.3"/><rect x="10" y="1.5" width="15.5" height="15.5" fill="#e8994f"/><path d="M13.9 1.5 V17 M17.8 1.5 V17 M21.7 1.5 V17 M10 5.4 H25.5 M10 9.3 H25.5 M10 13.2 H25.5" stroke="#444" stroke-width="1.1"/></svg>
<svg style="position:absolute;left:804px;top:107px;" width="28" height="28" viewBox="0 0 28 28"><rect x="3" y="12" width="14" height="14" fill="#d2d2d2"/><path d="M6.5 12 V26 M10 12 V26 M13.5 12 V26 M3 15.5 H17 M3 19 H17 M3 22.5 H17" stroke="#444" stroke-width="1.1"/><rect x="10.5" y="1.5" width="15.5" height="15.5" fill="#e8994f"/><path d="M18.2 1.5 V17 M10.5 9.2 H26" stroke="#444" stroke-width="1.3"/></svg>
<svg style="position:absolute;left:839px;top:107px;" width="28" height="28" viewBox="0 0 28 28"><path d="M2.5 10 L11 6 L18 10 V25 H2.5Z" fill="#e8994f"/><path d="M2.5 10 L18 25" stroke="#444" stroke-width="1.2"/><path d="M14.5 7 a6 6 0 0 1 9.5 -3 M25.5 11 a6 6 0 0 1 -9.5 3" fill="none" stroke="#d2d2d2" stroke-width="2"/><path d="M25.5 1.5 V6 H21Z M14.5 16.5 V12 H19Z" fill="#d2d2d2"/></svg>
<svg style="position:absolute;left:874px;top:107px;" width="28" height="28" viewBox="0 0 28 28"><rect x="2.5" y="9" width="15.5" height="16" fill="#e8994f"/><path d="M10.2 9 V25 M2.5 17 H18" stroke="#444" stroke-width="1.3"/><path d="M14.5 7 a6 6 0 0 1 9.5 -3 M25.5 11 a6 6 0 0 1 -9.5 3" fill="none" stroke="#d2d2d2" stroke-width="2"/><path d="M25.5 1.5 V6 H21Z M14.5 16.5 V12 H19Z" fill="#d2d2d2"/></svg>
<div style="position:absolute;left:911.25px;top:104px;width:1.5px;height:36px;background:#a0a0a0;"></div>
<svg style="position:absolute;left:921px;top:107px;" width="28" height="28" viewBox="0 0 28 28"><path d="M14 17 L25 22 L17 27 L6 22Z" fill="#d2d2d2"/><path d="M17 19 L21 24.4 M11 19.4 L19.5 25.4" stroke="#444" stroke-width="1"/><path d="M3 4.5 L9 1.5 L15 4.5 V19 L9 22.5 L3 19Z" fill="#e8994f" stroke="#3d2a1a" stroke-width="1"/><path d="M3 4.5 L9 7.5 L15 4.5 M9 7.5 V22.5" stroke="#3d2a1a" stroke-width="1" fill="none"/></svg>
<svg style="position:absolute;left:957px;top:107px;" width="28" height="28" viewBox="0 0 28 28"><path d="M8 2 L16 6 L10 9.5 L2 5.5Z M20 12 L28 16 L22 19.5 L14 15.5Z M8 14.5 L14 17.5 L8 21 L2 18Z M20 18.5 L26 21.5 L20 25 L14 22Z" fill="#d2d2d2"/><path d="M13 8.5 L19.5 11.8 L14.5 14.8 L8 11.5Z M14 18.5 L20 21.5 L14 25 L8 22Z" fill="#e8994f" stroke="#3d2a1a" stroke-width="0.8"/></svg>
<svg style="position:absolute;left:991px;top:107px;" width="28" height="28" viewBox="0 0 28 28"><path d="M14 2 L26 8 V21 L14 27 L2 21 V8Z" fill="#e8994f" stroke="#3d2a1a" stroke-width="1"/><path d="M2 8 L12.5 13 V27 M26 8 L15.5 13 V27 M12.5 13 H15.5 M14 2 V4" stroke="#d8d8d8" stroke-width="2.4" fill="none"/></svg>
<svg style="position:absolute;left:1027px;top:107px;" width="28" height="28" viewBox="0 0 28 28"><path d="M12 1.5 H26 V15 H19 L12 8Z" fill="#e8994f" stroke="#3d2a1a" stroke-width="1"/><path d="M19 1.5 V8 H26 M19 8 L15 11" stroke="#3d2a1a" stroke-width="1" fill="none"/><path d="M2 12 H11 L15 16 V26 H7 V22 H2Z" fill="#d2d2d2"/><path d="M8.5 12 V19 H2 M8.5 19 L12 16 M8.5 19 L11 26" stroke="#444" stroke-width="1.1" fill="none"/><g fill="#444" stroke="#d2d2d2" stroke-width="1"><rect x="0.8" y="10.8" width="3" height="3"/><rect x="0.8" y="20.5" width="3" height="3"/><rect x="5.8" y="24.5" width="3" height="3"/><rect x="13" y="14.5" width="3" height="3"/></g></svg>
<svg style="position:absolute;left:1062px;top:107px;" width="28" height="28" viewBox="0 0 28 28"><circle cx="14" cy="14" r="12" fill="#e8994f" stroke="#3d2a1a" stroke-width="1.2"/><circle cx="14" cy="14" r="8" fill="none" stroke="#3d2a1a" stroke-width="1.1" stroke-dasharray="3 1.4"/><path d="M14 2 V26 M2 14 H26 M5.5 5.5 L22.5 22.5 M22.5 5.5 L5.5 22.5" stroke="#3d2a1a" stroke-width="1.1"/></svg>
<svg style="position:absolute;left:1097px;top:107px;" width="28" height="28" viewBox="0 0 28 28"><rect x="12" y="1.5" width="14.5" height="14.5" fill="#d2d2d2"/><path d="M12 16 L26.5 1.5" stroke="#3f8fa0" stroke-width="1.2"/><path d="M19 9 L26.5 1.5" stroke="#b04a3a" stroke-width="1.2"/><rect x="1.5" y="10.5" width="15.5" height="16" fill="#e8994f" stroke="#3d2a1a" stroke-width="0.8"/><path d="M1.5 10.5 L17 26.5" stroke="#3d2a1a" stroke-width="1.1"/></svg>
<svg style="position:absolute;left:1131px;top:107px;" width="28" height="28" viewBox="0 0 28 28"><path d="M8 7.5 L15 11 L8 15 L1 11.5Z" fill="#e8994f" stroke="#3d2a1a" stroke-width="0.8"/><path d="M1 11.5 V14 L8 17.5 V15Z M8 15 V17.5 L15 13.5 V11Z" fill="#c07a3a"/><path d="M16 6.5 L28 13 L16.5 20 L9 16 L15.5 12 L10 9.5Z" fill="#d2d2d2"/><path d="M13 8 L24.5 15 M22 9.8 L12.5 17.8" stroke="#6ea0b8" stroke-width="1"/><path d="M9 16 V18 L16.5 22 L28 15 V13 L16.5 20Z" fill="#a8a8a8"/></svg>
<svg style="position:absolute;left:1167px;top:107px;" width="28" height="28" viewBox="0 0 28 28"><rect x="4" y="4" width="20" height="20" fill="none" stroke="#d2d2d2" stroke-width="1.2"/><path d="M5 5 L11.5 11.5 M23 5 L16.5 11.5 M5 23 L11.5 16.5 M23 23 L16.5 16.5" stroke="#b8926c" stroke-width="1.4"/><path d="M9.5 11.5 h2.5 v-2.5 M18.5 11.5 h-2.5 v-2.5 M9.5 16.5 h2.5 v2.5 M18.5 16.5 h-2.5 v2.5" stroke="#b8926c" stroke-width="1.1" fill="none"/><rect x="12" y="12" width="4" height="4" fill="#444" stroke="#e8994f" stroke-width="1.2"/><g fill="#444" stroke="#d2d2d2" stroke-width="1.1"><rect x="2.2" y="2.2" width="3.6" height="3.6"/><rect x="22.2" y="2.2" width="3.6" height="3.6"/><rect x="2.2" y="22.2" width="3.6" height="3.6"/><rect x="22.2" y="22.2" width="3.6" height="3.6"/></g></svg>
<svg style="position:absolute;left:1202px;top:107px;" width="28" height="28" viewBox="0 0 28 28"><rect x="2" y="12" width="14" height="14" fill="#d2d2d2"/><path d="M6.6 12 V26 M11.3 12 V26 M2 16.6 H16 M2 21.3 H16" stroke="#444" stroke-width="1.2"/><circle cx="17.5" cy="10.5" r="9" fill="#e8994f" stroke="#3d2a1a" stroke-width="1"/><path d="M17.5 1.5 V19.5 M8.5 10.5 H26.5 M13.5 2.5 V18.5 M21.5 2.5 V18.5 M9.5 6.5 H25.5 M9.5 14.5 H25.5" stroke="#3d2a1a" stroke-width="1"/></svg>
<div style="position:absolute;left:1239.25px;top:104px;width:1.5px;height:36px;background:#a0a0a0;"></div>
<svg style="position:absolute;left:1249px;top:107px;" width="28" height="28" viewBox="0 0 28 28"><path d="M2.5 10 L17 3.5 M2.5 10 V25" stroke="#e8994f" stroke-width="1.1"/><path d="M3 25 L10 18.5 L24.5 4.5 Q27.5 3 26 7 L14 20 Z" fill="#c4c4c4" stroke="#666" stroke-width="0.6"/><g fill="#444" stroke="#e8994f" stroke-width="1"><rect x="1" y="8.5" width="3" height="3"/><rect x="15.5" y="2" width="3" height="3"/><rect x="1" y="23.5" width="3" height="3"/></g></svg>
<svg style="position:absolute;left:1284px;top:107px;" width="28" height="28" viewBox="0 0 28 28"><g fill="none" stroke="#d2d2d2" stroke-width="1.1"><path d="M5 4 H23 M5 24 H23" stroke-dasharray="3 2"/><path d="M5 4 V24 M23 4 V24" stroke-dasharray="2 1.6"/></g><path d="M14 4 V24" stroke="#e8994f" stroke-width="1.3"/><g fill="#444" stroke="#d2d2d2" stroke-width="1"><rect x="3.5" y="2.5" width="3" height="3"/><rect x="21.5" y="2.5" width="3" height="3"/><rect x="3.5" y="22.5" width="3" height="3"/><rect x="21.5" y="22.5" width="3" height="3"/></g><g fill="#444" stroke="#e8994f" stroke-width="1.1"><rect x="12" y="2" width="4" height="4"/><rect x="12" y="22" width="4" height="4"/></g></svg>
<svg style="position:absolute;left:1319px;top:107px;" width="28" height="28" viewBox="0 0 28 28"><g fill="#d2d2d2"><rect x="2.5" y="3" width="3.4" height="3.4"/><rect x="8.5" y="3" width="3.4" height="3.4"/><rect x="2.5" y="9.5" width="3.4" height="3.4"/><rect x="8.5" y="9.5" width="3.4" height="3.4"/></g><path d="M4.2 4.7 H10 V11 H4.2Z" fill="none" stroke="#d2d2d2" stroke-width="0.9" stroke-dasharray="1.5 1.2"/><rect x="2.5" y="21" width="4" height="4" fill="#e8994f"/><path d="M10 25 L12.5 20 L23 7 Q26 5.5 26.5 9 L15 22 Z" fill="#c4c4c4" stroke="#666" stroke-width="0.6"/></svg>
<div style="position:absolute;left:1356.25px;top:104px;width:1.5px;height:36px;background:#a0a0a0;"></div>
<svg style="position:absolute;left:1367px;top:107px;" width="28" height="28" viewBox="0 0 28 28"><rect x="1.5" y="2" width="21" height="22" fill="#5bb894"/><rect x="17" y="18" width="9" height="9" fill="#e6e6e6"/><rect x="17" y="21" width="3" height="3" fill="#3a3a3a"/><rect x="20" y="18" width="3" height="3" fill="#3a3a3a"/><rect x="20" y="24" width="3" height="3" fill="#3a3a3a"/><rect x="23" y="21" width="3" height="3" fill="#3a3a3a"/></svg>
<svg style="position:absolute;left:1403px;top:107px;" width="28" height="28" viewBox="0 0 28 28"><path d="M1 3 Q11 9 22 3 V22 Q11 28 1 22Z" fill="#5bb894"/><rect x="16.5" y="18" width="9" height="9" fill="#e6e6e6"/><rect x="16.5" y="21" width="3" height="3" fill="#3a3a3a"/><rect x="19.5" y="18" width="3" height="3" fill="#3a3a3a"/><rect x="19.5" y="24" width="3" height="3" fill="#3a3a3a"/><rect x="22.5" y="21" width="3" height="3" fill="#3a3a3a"/></svg>
<svg style="position:absolute;left:1437px;top:107px;" width="28" height="28" viewBox="0 0 28 28"><path d="M3 4 Q12 9 22 3 Q27 14 22 24 Q10 28 3 22 Q-2 13 3 4Z" fill="#5bb894"/><rect x="16.5" y="18" width="9" height="9" fill="#e6e6e6"/><rect x="16.5" y="21" width="3" height="3" fill="#3a3a3a"/><rect x="19.5" y="18" width="3" height="3" fill="#3a3a3a"/><rect x="19.5" y="24" width="3" height="3" fill="#3a3a3a"/><rect x="22.5" y="21" width="3" height="3" fill="#3a3a3a"/></svg>
<svg style="position:absolute;left:1472px;top:107px;" width="28" height="28" viewBox="0 0 28 28"><path d="M14 1.5 L26 7.5 V21 L14 27 L2 21 V7.5Z" fill="#5bb894"/><path d="M2 7.5 L14 13.5 L26 7.5 M14 13.5 V27" stroke="#3a3a3a" stroke-width="1.4" fill="none"/><rect x="17.5" y="17.5" width="9" height="9" fill="#e6e6e6"/><rect x="17.5" y="20.5" width="3" height="3" fill="#3a3a3a"/><rect x="20.5" y="17.5" width="3" height="3" fill="#3a3a3a"/><rect x="20.5" y="23.5" width="3" height="3" fill="#3a3a3a"/><rect x="23.5" y="20.5" width="3" height="3" fill="#3a3a3a"/></svg>
<svg style="position:absolute;left:1507px;top:107px;" width="28" height="28" viewBox="0 0 28 28"><path d="M2 20 C4 10 10 16 13 10 C15 5 20 6 24 2" fill="none" stroke="#5bb894" stroke-width="3"/><path d="M6 25 C8 17 14 21 17 15 C19 10 23 12 26 8" fill="none" stroke="#5bb894" stroke-width="3"/><rect x="17.5" y="18" width="9" height="9" fill="#e6e6e6"/><rect x="17.5" y="21" width="3" height="3" fill="#3a3a3a"/><rect x="20.5" y="18" width="3" height="3" fill="#3a3a3a"/><rect x="20.5" y="24" width="3" height="3" fill="#3a3a3a"/><rect x="23.5" y="21" width="3" height="3" fill="#3a3a3a"/></svg>
<svg style="position:absolute;left:1542px;top:107px;" width="28" height="28" viewBox="0 0 28 28"><rect x="1.5" y="1.5" width="25" height="25" rx="1" fill="#5bb894"/><rect x="2.5" y="2.5" width="23" height="3.6" fill="#2d2d2d"/><circle cx="5" cy="4.3" r="0.9" fill="#e8e8e8"/><circle cx="8" cy="4.3" r="0.9" fill="#e8e8e8"/><circle cx="11" cy="4.3" r="0.9" fill="#e8e8e8"/><rect x="6.5" y="9" width="15" height="15" fill="#e6e6e6"/><g fill="#2d2d2d"><rect x="6.5" y="9" width="5" height="5"/><rect x="16.5" y="9" width="5" height="5"/><rect x="11.5" y="14" width="5" height="5"/><rect x="6.5" y="19" width="5" height="5"/><rect x="16.5" y="19" width="5" height="5"/></g></svg>
<svg style="position:absolute;left:1576px;top:107px;" width="28" height="28" viewBox="0 0 28 28"><path d="M2 8 L12 13 L2 23 M26 8 L16 13 L26 23" fill="none" stroke="#5bb894" stroke-width="3.4"/><path d="M2 8 H7 M26 8 H21 M2 23 H7 M26 23 H21" stroke="#5bb894" stroke-width="3"/><rect x="9.5" y="4" width="9" height="9" fill="#e6e6e6"/><rect x="9.5" y="7" width="3" height="3" fill="#3a3a3a"/><rect x="12.5" y="4" width="3" height="3" fill="#3a3a3a"/><rect x="12.5" y="10" width="3" height="3" fill="#3a3a3a"/><rect x="15.5" y="7" width="3" height="3" fill="#3a3a3a"/></svg>
<svg style="position:absolute;left:1611px;top:107px;" width="28" height="28" viewBox="0 0 28 28"><path d="M3 26 L22 4 Q26 1.5 25.5 6.5 L8 24Z" fill="#c8c8c8" stroke="#666" stroke-width="0.6"/><path d="M25 26 L8 5 Q4 1.5 4.5 7 L20 24Z" fill="#c8c8c8" stroke="#666" stroke-width="0.6"/><path d="M5 2 C18 2 24 8 22 18 M4 24 C8 27 14 27 17 26" fill="none" stroke="#5bb894" stroke-width="1.1"/></svg>
<svg style="position:absolute;left:1900px;top:107px;" width="11" height="29" viewBox="0 0 11 29"><path d="M0 5 L5.5 0 L11 5Z M0 24 L5.5 29 L11 24Z" fill="#cfcfcf"/><circle cx="5.5" cy="14.5" r="5" fill="#5a5a5a"/></svg>
<div style="position:absolute;left:0px;top:145px;width:1920px;height:3.5px;background:#3d3d3d;"></div>
<!-- p_toolbox -->
<div style="position:absolute;left:45.5px;top:148.5px;width:3px;height:778px;background:#3c3c3c;"></div>
<svg style="position:absolute;left:2px;top:152px;" width="38" height="4" viewBox="0 0 38 4"><path d="M0.0 0.5 H38" stroke="#8c8c8c" stroke-width="1" stroke-dasharray="1 1"/><path d="M1.0 2.5 H38" stroke="#8c8c8c" stroke-width="1" stroke-dasharray="1 1"/></svg>
<div style="position:absolute;left:4px;top:161px;width:36px;height:36px;background:#5588b0;"></div>
<svg style="position:absolute;left:4px;top:161px;" width="36" height="36" viewBox="0 0 36 36"><path transform="translate(12.5,5.5) scale(2.1)" d="M0 0 L0 10 L2.6 7.8 L4.6 12 L6.4 11.2 L4.4 7.2 L7.6 7.2Z" fill="#d4d4d4" stroke="#445" stroke-width="0.5"/></svg>
<svg style="position:absolute;left:4px;top:198px;" width="36" height="36" viewBox="0 0 36 36"><path d="M17 5 C26 4 30 10 26 16 C22 22 8 24 5 18 C3 12 9 6 17 5Z" fill="none" stroke="#4fb7b7" stroke-width="2.4" stroke-dasharray="5 2.5"/><path transform="translate(18,10) scale(1.9)" d="M0 0 L0 10 L2.6 7.8 L4.6 12 L6.4 11.2 L4.4 7.2 L7.6 7.2Z" fill="#d8d8d8" stroke="#555" stroke-width="0.5"/></svg>
<svg style="position:absolute;left:4px;top:235px;" width="36" height="36" viewBox="0 0 36 36"><path d="M15 12 C5 12 3 19 8 22 C14 26 26 32 27 27 C28 23 22 13 15 12Z" fill="none" stroke="#4fb7b7" stroke-width="2.4" stroke-dasharray="5 2.5"/><path d="M31 4 L34 7 L22 19 L19 16Z" fill="#d8d8d8"/><path d="M19 16 L22 19 C20 25 14 25 11 23 C15 22 16 19 19 16Z" fill="#d8d8d8"/></svg>
<svg style="position:absolute;left:4px;top:272px;" width="36" height="36" viewBox="0 0 36 36"><rect x="12" y="12" width="12" height="12" fill="#d2d2d2"/><path d="M18 1.5 L23 7 H13Z M18 34.5 L23 29 H13Z M3 18 L8 13 V23Z M33 18 L28 13 V23Z" fill="#4fb7b7"/></svg>
<svg style="position:absolute;left:4px;top:309px;" width="36" height="36" viewBox="0 0 36 36"><path d="M18 10 L26 18 L18 26 L10 18Z" fill="#d2d2d2"/><path d="M17 32 A14 14 0 1 1 31 16" fill="none" stroke="#4fb7b7" stroke-width="1.6"/><path d="M27.5 16 H35 L31.2 22Z" fill="#4fb7b7"/></svg>
<svg style="position:absolute;left:4px;top:346px;" width="36" height="36" viewBox="0 0 36 36"><rect x="6.5" y="6" width="24.5" height="24" fill="none" stroke="#4fb7b7" stroke-width="1.3" stroke-dasharray="3.5 2"/><rect x="6" y="19.5" width="11" height="11" fill="#d2d2d2"/><path d="M19 16.5 H21.5 V19" fill="none" stroke="#4fb7b7" stroke-width="1.2"/></svg>
<div style="position:absolute;left:4px;top:461px;width:36px;height:1.6px;background:#9a9a9a;"></div>
<svg style="position:absolute;left:8px;top:472px;" width="28" height="28" viewBox="0 0 28 28"><rect x="0" y="0" width="28" height="28" fill="#d2d2d2"/><rect x="1.8" y="1.8" width="24.4" height="24.4" fill="none" stroke="#444" stroke-width="1"/><g fill="#444"><path d="M14 7 L18 10 L14 13 L10 10Z M8.5 11 L12.5 14 L8.5 17 L4.5 14Z M19.5 11 L23.5 14 L19.5 17 L15.5 14Z M14 15 L18 18 L14 21 L10 18Z"/></g></svg>
<svg style="position:absolute;left:8px;top:509px;" width="28" height="28" viewBox="0 0 28 28"><rect x="0.5" y="0.5" width="12" height="12" fill="#3d3d3d" stroke="#d2d2d2" stroke-width="1.1"/><path d="M6.5 3.0 v7 M3.0 6.5 h7" stroke="#d2d2d2" stroke-width="1.1"/><rect x="15" y="0" width="13" height="13" fill="#d2d2d2"/><path d="M21.5 3.5 L26 6.5 L21.5 9.5 L17 6.5Z" fill="#444"/><rect x="0.5" y="15.5" width="12" height="12" fill="#3d3d3d" stroke="#d2d2d2" stroke-width="1.1"/><path d="M6.5 18.0 v7 M3.0 21.5 h7" stroke="#d2d2d2" stroke-width="1.1"/><rect x="15.5" y="15.5" width="12" height="12" fill="#3d3d3d" stroke="#d2d2d2" stroke-width="1.1"/><path d="M21.5 18.0 v7 M18.0 21.5 h7" stroke="#d2d2d2" stroke-width="1.1"/></svg>
<svg style="position:absolute;left:8px;top:546px;" width="28" height="28" viewBox="0 0 28 28"><rect x="0.5" y="0.5" width="12" height="27" fill="#3d3d3d" stroke="#d2d2d2" stroke-width="1.1"/><path d="M6.5 10.5 v7 M3.0 14.0 h7" stroke="#d2d2d2" stroke-width="1.1"/><rect x="15" y="0" width="13" height="28" fill="#d2d2d2"/><path d="M21.5 10.5 L26 14 L21.5 17.5 L17 14Z" fill="#444"/></svg>
<div style="position:absolute;left:4px;top:579px;width:36px;height:36px;background:#5588b0;"></div>
<svg style="position:absolute;left:8px;top:583px;" width="28" height="28" viewBox="0 0 28 28"><rect x="0.6" y="0.6" width="26.8" height="26.8" fill="none" stroke="#e2e2e2" stroke-width="1.2"/><rect x="2.6" y="2.6" width="22.8" height="22.8" fill="none" stroke="#2a4354" stroke-width="1"/><g fill="#efe6d8" stroke="#2a4354" stroke-width="0.9"><rect x="5" y="4.5" width="3.6" height="3.6"/><rect x="10" y="9.8" width="3.6" height="3.6"/><rect x="10" y="15.2" width="3.6" height="3.6"/><rect x="10" y="20.4" width="3.6" height="3.6"/></g><path d="M10 6.3 H18 M15 11.6 H22 M15 17 H20 M15 22.2 H21" stroke="#e8e8e8" stroke-width="1.6"/><path d="M6.8 8 V22.2 H10 M6.8 11.6 H10 M6.8 17 H10" fill="none" stroke="#2a4354" stroke-width="0.9"/></svg>
<div style="position:absolute;left:4px;top:620.5px;width:36px;height:1.6px;background:#9a9a9a;"></div>
<svg style="position:absolute;left:4px;top:627px;" width="36" height="36" viewBox="0 0 36 36"><path d="M5 0.7 H0.7 V35.3 H5 M31 0.7 H35.3 V35.3 H31" fill="none" stroke="#3ed13e" stroke-width="1.4"/><circle cx="16" cy="15.5" r="7.6" fill="none" stroke="#cfcfcf" stroke-width="2"/><path d="M21.5 21.5 L28 28.5" stroke="#cfcfcf" stroke-width="3.4" stroke-linecap="round"/></svg>
<svg style="position:absolute;left:5px;top:891px;" width="35" height="30" viewBox="0 0 35 30"><defs><linearGradient id="mg" x1="0" y1="0" x2="1" y2="1"><stop offset="0" stop-color="#5fd0cf"/><stop offset="1" stop-color="#178b94"/></linearGradient></defs><path d="M0.5 2 H8.5 L17.5 18 L26.5 2 H34.5 V28 H27 V13 L19.5 27 H15.5 L8 13 V28 H0.5Z" fill="url(#mg)"/><path d="M0.5 2 H8.5 V28 H0.5Z" fill="#6fdad8"/><path d="M27 2 H34.5 V28 H27Z" fill="#1f9aa2"/></svg>
<!-- p_outliner -->
<div style="position:absolute;left:48.5px;top:148.5px;width:313px;height:778px;background:#444444;"></div>
<div style="position:absolute;left:48.5px;top:148.5px;width:313px;height:18px;background:#373737;"></div>
<div style="position:absolute;left:48.5px;top:151px;width:63.5px;height:16px;background:#444444;border-radius:2px 2px 0 0;"></div>
<div style="position:absolute;top:153.0px;line-height:15px;font-size:11.5px;color:#d6d6d6;white-space:nowrap;letter-spacing:0.34px;left:58.5px;">Outliner</div>
<div style="position:absolute;top:171.0px;line-height:15px;font-size:11.5px;color:#d6d6d6;white-space:nowrap;letter-spacing:-0.10px;left:57.0px;">Display</div>
<div style="position:absolute;top:171.0px;line-height:15px;font-size:11.5px;color:#d6d6d6;white-space:nowrap;letter-spacing:0.06px;left:109.0px;">Show</div>
<div style="position:absolute;top:171.0px;line-height:15px;font-size:11.5px;color:#d6d6d6;white-space:nowrap;letter-spacing:-0.16px;left:153.0px;">Help</div>
<svg style="position:absolute;left:54px;top:194px;" width="17" height="19" viewBox="0 0 17 19"><rect x="0" y="0" width="17" height="19" fill="#4e4e4e"/><path d="M3 5 V3 H6 M11 3 H14 V5 M3 14 V16 H6 M11 16 H14 V14" fill="none" stroke="#6c6c6c" stroke-width="1.2"/><path d="M5 6 H12 L5 13 H12" fill="none" stroke="#666" stroke-width="1.2"/></svg>
<div style="position:absolute;left:77px;top:194px;width:281px;height:19px;background:#2b2b2b;border-radius:2px;"></div>
<div style="position:absolute;top:196.5px;line-height:15px;font-size:11.5px;color:#7d7d7d;white-space:nowrap;letter-spacing:-0.34px;left:80.0px;">Search...</div>
<svg style="position:absolute;left:343px;top:201px;" width="10" height="5.5" viewBox="0 0 10 5.5"><path d="M0 0 H10 L5 5.5Z" fill="#cfcfcf"/></svg>
<div style="position:absolute;left:52px;top:215px;width:294px;height:691px;background:#373737;overflow:hidden;box-shadow:-3.5px 0 0 #373737;">
<svg style="position:absolute;left:0;top:0" width="294" height="691"><path d="M23.5 108.5 H31.0" stroke="#a8a8a8" stroke-width="1"/><path d="M35.5 128.5 H43.0" stroke="#a8a8a8" stroke-width="1"/><path d="M35.5 148.5 H43.0" stroke="#a8a8a8" stroke-width="1"/><path d="M47.5 168.5 H55.0" stroke="#a8a8a8" stroke-width="1"/><path d="M59.5 188.5 H67.0" stroke="#a8a8a8" stroke-width="1"/><path d="M71.5 208.5 H79.0" stroke="#a8a8a8" stroke-width="1"/><path d="M83.5 228.5 H91.0" stroke="#a8a8a8" stroke-width="1"/><path d="M95.5 248.5 H103.0" stroke="#a8a8a8" stroke-width="1"/><path d="M107.5 268.5 H115.0" stroke="#a8a8a8" stroke-width="1"/><path d="M107.5 288.5 H119.5" stroke="#a8a8a8" stroke-width="1"/><path d="M107.5 308.5 H119.5" stroke="#a8a8a8" stroke-width="1"/><path d="M107.5 328.5 H115.0" stroke="#a8a8a8" stroke-width="1"/><path d="M95.5 348.5 H107.5" stroke="#a8a8a8" stroke-width="1"/><path d="M95.5 368.5 H107.5" stroke="#a8a8a8" stroke-width="1"/><path d="M83.5 388.5 H95.5" stroke="#a8a8a8" stroke-width="1"/><path d="M83.5 408.5 H95.5" stroke="#a8a8a8" stroke-width="1"/><path d="M71.5 428.5 H79.0" stroke="#a8a8a8" stroke-width="1"/><path d="M71.5 448.5 H79.0" stroke="#a8a8a8" stroke-width="1"/><path d="M71.5 468.5 H79.0" stroke="#a8a8a8" stroke-width="1"/><path d="M71.5 488.5 H79.0" stroke="#a8a8a8" stroke-width="1"/><path d="M71.5 508.5 H83.5" stroke="#a8a8a8" stroke-width="1"/><path d="M71.5 528.5 H83.5" stroke="#a8a8a8" stroke-width="1"/><path d="M59.5 548.5 H71.5" stroke="#a8a8a8" stroke-width="1"/><path d="M59.5 568.5 H71.5" stroke="#a8a8a8" stroke-width="1"/><path d="M47.5 588.5 H59.5" stroke="#a8a8a8" stroke-width="1"/><path d="M47.5 608.5 H59.5" stroke="#a8a8a8" stroke-width="1"/><path d="M35.5 628.5 H47.5" stroke="#a8a8a8" stroke-width="1"/><path d="M35.5 648.5 H47.5" stroke="#a8a8a8" stroke-width="1"/><path d="M23.5 93 V109" stroke="#a8a8a8" stroke-width="1"/><path d="M35.5 113 V649" stroke="#a8a8a8" stroke-width="1"/><path d="M47.5 153 V609" stroke="#a8a8a8" stroke-width="1"/><path d="M59.5 173 V569" stroke="#a8a8a8" stroke-width="1"/><path d="M71.5 193 V529" stroke="#a8a8a8" stroke-width="1"/><path d="M83.5 213 V409" stroke="#a8a8a8" stroke-width="1"/><path d="M95.5 233 V369" stroke="#a8a8a8" stroke-width="1"/><path d="M107.5 253 V329" stroke="#a8a8a8" stroke-width="1"/></svg>
</div>
<div style="position:absolute;left:0;top:215px;width:346px;height:691px;overflow:hidden;"><div style="position:absolute;left:0;top:-215px;width:346px;height:1080px;">
<svg style="position:absolute;left:86px;top:219px;" width="14" height="10" viewBox="0 0 14 10"><rect x="0" y="1" width="8.6" height="8" fill="#d0d0d0"/><path d="M9 5 L14 0 V10Z" fill="#d0d0d0"/></svg>
<div style="position:absolute;top:217.0px;line-height:15px;font-size:11.5px;color:#8a8a8a;white-space:nowrap;left:104.0px;">persp</div>
<svg style="position:absolute;left:86px;top:239px;" width="14" height="10" viewBox="0 0 14 10"><rect x="0" y="1" width="8.6" height="8" fill="#d0d0d0"/><path d="M9 5 L14 0 V10Z" fill="#d0d0d0"/></svg>
<div style="position:absolute;top:237.0px;line-height:15px;font-size:11.5px;color:#8a8a8a;white-space:nowrap;left:104.0px;">top</div>
<svg style="position:absolute;left:86px;top:259px;" width="14" height="10" viewBox="0 0 14 10"><rect x="0" y="1" width="8.6" height="8" fill="#d0d0d0"/><path d="M9 5 L14 0 V10Z" fill="#d0d0d0"/></svg>
<div style="position:absolute;top:257.0px;line-height:15px;font-size:11.5px;color:#8a8a8a;white-space:nowrap;left:104.0px;">front</div>
<svg style="position:absolute;left:86px;top:279px;" width="14" height="10" viewBox="0 0 14 10"><rect x="0" y="1" width="8.6" height="8" fill="#d0d0d0"/><path d="M9 5 L14 0 V10Z" fill="#d0d0d0"/></svg>
<div style="position:absolute;top:277.0px;line-height:15px;font-size:11.5px;color:#8a8a8a;white-space:nowrap;left:104.0px;">side</div>
<svg style="position:absolute;left:71.0px;top:299px;" width="9" height="9" viewBox="0 0 9 9"><rect x="0.5" y="0.5" width="8" height="8" fill="#242424" stroke="#a8a8a8" stroke-width="1"/><path d="M2.5 4.5 H6.5" stroke="#a8a8a8" stroke-width="1"/></svg>
<svg style="position:absolute;left:87px;top:295.5px;" width="14" height="18" viewBox="0 0 14 18"><path d="M10.500 0.500 L12.500 2.500 L3 9.800 L1 7.500Z" fill="#a99ae0"/><path d="M0.800 7.800 L3.800 7 L10.800 16.500 L9.500 17 Z" fill="#9687d2"/><circle cx="11.200" cy="1.900" r="2.300" fill="#d0c6f6"/><circle cx="2.200" cy="8.600" r="2.100" fill="#c9bdf4"/></svg>
<div style="position:absolute;top:297.0px;line-height:15px;font-size:11.5px;color:#e2e2e2;white-space:nowrap;left:104.0px;">BoneRoot</div>
<svg style="position:absolute;left:83.0px;top:319px;" width="9" height="9" viewBox="0 0 9 9"><rect x="0.5" y="0.5" width="8" height="8" fill="#242424" stroke="#a8a8a8" stroke-width="1"/><path d="M2.5 4.5 H6.5" stroke="#a8a8a8" stroke-width="1"/></svg>
<svg style="position:absolute;left:99px;top:315.5px;" width="14" height="18" viewBox="0 0 14 18"><path d="M10.500 0.500 L12.500 2.500 L3 9.800 L1 7.500Z" fill="#a99ae0"/><path d="M0.800 7.800 L3.800 7 L10.800 16.500 L9.500 17 Z" fill="#9687d2"/><circle cx="11.200" cy="1.900" r="2.300" fill="#d0c6f6"/><circle cx="2.200" cy="8.600" r="2.100" fill="#c9bdf4"/></svg>
<div style="position:absolute;top:317.0px;line-height:15px;font-size:11.5px;color:#e2e2e2;white-space:nowrap;left:116.0px;">Hip</div>
<svg style="position:absolute;left:95.0px;top:339px;" width="9" height="9" viewBox="0 0 9 9"><rect x="0.5" y="0.5" width="8" height="8" fill="#242424" stroke="#a8a8a8" stroke-width="1"/><path d="M2.5 4.5 H6.5" stroke="#a8a8a8" stroke-width="1"/><path d="M4.5 2.5 V6.5" stroke="#a8a8a8" stroke-width="1"/></svg>
<svg style="position:absolute;left:111px;top:335.5px;" width="14" height="18" viewBox="0 0 14 18"><path d="M10.500 0.500 L12.500 2.500 L3 9.800 L1 7.500Z" fill="#a99ae0"/><path d="M0.800 7.800 L3.800 7 L10.800 16.500 L9.500 17 Z" fill="#9687d2"/><circle cx="11.200" cy="1.900" r="2.300" fill="#d0c6f6"/><circle cx="2.200" cy="8.600" r="2.100" fill="#c9bdf4"/></svg>
<div style="position:absolute;top:337.0px;line-height:15px;font-size:11.5px;color:#e2e2e2;white-space:nowrap;left:128.0px;">Pelvis</div>
<svg style="position:absolute;left:95.0px;top:359px;" width="9" height="9" viewBox="0 0 9 9"><rect x="0.5" y="0.5" width="8" height="8" fill="#242424" stroke="#a8a8a8" stroke-width="1"/><path d="M2.5 4.5 H6.5" stroke="#a8a8a8" stroke-width="1"/></svg>
<svg style="position:absolute;left:111px;top:355.5px;" width="14" height="18" viewBox="0 0 14 18"><path d="M10.500 0.500 L12.500 2.500 L3 9.800 L1 7.500Z" fill="#a99ae0"/><path d="M0.800 7.800 L3.800 7 L10.800 16.500 L9.500 17 Z" fill="#9687d2"/><circle cx="11.200" cy="1.900" r="2.300" fill="#d0c6f6"/><circle cx="2.200" cy="8.600" r="2.100" fill="#c9bdf4"/></svg>
<div style="position:absolute;top:357.0px;line-height:15px;font-size:11.5px;color:#e2e2e2;white-space:nowrap;left:128.0px;">Waist</div>
<svg style="position:absolute;left:107.0px;top:379px;" width="9" height="9" viewBox="0 0 9 9"><rect x="0.5" y="0.5" width="8" height="8" fill="#242424" stroke="#a8a8a8" stroke-width="1"/><path d="M2.5 4.5 H6.5" stroke="#a8a8a8" stroke-width="1"/></svg>
<svg style="position:absolute;left:123px;top:375.5px;" width="14" height="18" viewBox="0 0 14 18"><path d="M10.500 0.500 L12.500 2.500 L3 9.800 L1 7.500Z" fill="#a99ae0"/><path d="M0.800 7.800 L3.800 7 L10.800 16.500 L9.500 17 Z" fill="#9687d2"/><circle cx="11.200" cy="1.900" r="2.300" fill="#d0c6f6"/><circle cx="2.200" cy="8.600" r="2.100" fill="#c9bdf4"/></svg>
<div style="position:absolute;top:377.0px;line-height:15px;font-size:11.5px;color:#e2e2e2;white-space:nowrap;left:140.0px;">Spine01</div>
<svg style="position:absolute;left:119.0px;top:399px;" width="9" height="9" viewBox="0 0 9 9"><rect x="0.5" y="0.5" width="8" height="8" fill="#242424" stroke="#a8a8a8" stroke-width="1"/><path d="M2.5 4.5 H6.5" stroke="#a8a8a8" stroke-width="1"/></svg>
<svg style="position:absolute;left:135px;top:395.5px;" width="14" height="18" viewBox="0 0 14 18"><path d="M10.500 0.500 L12.500 2.500 L3 9.800 L1 7.500Z" fill="#a99ae0"/><path d="M0.800 7.800 L3.800 7 L10.800 16.500 L9.500 17 Z" fill="#9687d2"/><circle cx="11.200" cy="1.900" r="2.300" fill="#d0c6f6"/><circle cx="2.200" cy="8.600" r="2.100" fill="#c9bdf4"/></svg>
<div style="position:absolute;top:397.0px;line-height:15px;font-size:11.5px;color:#e2e2e2;white-space:nowrap;left:152.0px;">Spine02</div>
<svg style="position:absolute;left:131.0px;top:419px;" width="9" height="9" viewBox="0 0 9 9"><rect x="0.5" y="0.5" width="8" height="8" fill="#242424" stroke="#a8a8a8" stroke-width="1"/><path d="M2.5 4.5 H6.5" stroke="#a8a8a8" stroke-width="1"/></svg>
<svg style="position:absolute;left:147px;top:415.5px;" width="14" height="18" viewBox="0 0 14 18"><path d="M10.500 0.500 L12.500 2.500 L3 9.800 L1 7.500Z" fill="#a99ae0"/><path d="M0.800 7.800 L3.800 7 L10.800 16.500 L9.500 17 Z" fill="#9687d2"/><circle cx="11.200" cy="1.900" r="2.300" fill="#d0c6f6"/><circle cx="2.200" cy="8.600" r="2.100" fill="#c9bdf4"/></svg>
<div style="position:absolute;top:417.0px;line-height:15px;font-size:11.5px;color:#e2e2e2;white-space:nowrap;left:164.0px;">NeckTwist01</div>
<svg style="position:absolute;left:143.0px;top:439px;" width="9" height="9" viewBox="0 0 9 9"><rect x="0.5" y="0.5" width="8" height="8" fill="#242424" stroke="#a8a8a8" stroke-width="1"/><path d="M2.5 4.5 H6.5" stroke="#a8a8a8" stroke-width="1"/></svg>
<svg style="position:absolute;left:159px;top:435.5px;" width="14" height="18" viewBox="0 0 14 18"><path d="M10.500 0.500 L12.500 2.500 L3 9.800 L1 7.500Z" fill="#a99ae0"/><path d="M0.800 7.800 L3.800 7 L10.800 16.500 L9.500 17 Z" fill="#9687d2"/><circle cx="11.200" cy="1.900" r="2.300" fill="#d0c6f6"/><circle cx="2.200" cy="8.600" r="2.100" fill="#c9bdf4"/></svg>
<div style="position:absolute;top:437.0px;line-height:15px;font-size:11.5px;color:#e2e2e2;white-space:nowrap;left:176.0px;">NeckTwist02</div>
<svg style="position:absolute;left:155.0px;top:459px;" width="9" height="9" viewBox="0 0 9 9"><rect x="0.5" y="0.5" width="8" height="8" fill="#242424" stroke="#a8a8a8" stroke-width="1"/><path d="M2.5 4.5 H6.5" stroke="#a8a8a8" stroke-width="1"/></svg>
<svg style="position:absolute;left:171px;top:455.5px;" width="14" height="18" viewBox="0 0 14 18"><path d="M10.500 0.500 L12.500 2.500 L3 9.800 L1 7.500Z" fill="#a99ae0"/><path d="M0.800 7.800 L3.800 7 L10.800 16.500 L9.500 17 Z" fill="#9687d2"/><circle cx="11.200" cy="1.900" r="2.300" fill="#d0c6f6"/><circle cx="2.200" cy="8.600" r="2.100" fill="#c9bdf4"/></svg>
<div style="position:absolute;top:457.0px;line-height:15px;font-size:11.5px;color:#e2e2e2;white-space:nowrap;left:188.0px;">Head</div>
<svg style="position:absolute;left:167.0px;top:479px;" width="9" height="9" viewBox="0 0 9 9"><rect x="0.5" y="0.5" width="8" height="8" fill="#242424" stroke="#a8a8a8" stroke-width="1"/><path d="M2.5 4.5 H6.5" stroke="#a8a8a8" stroke-width="1"/><path d="M4.5 2.5 V6.5" stroke="#a8a8a8" stroke-width="1"/></svg>
<svg style="position:absolute;left:183px;top:475.5px;" width="14" height="18" viewBox="0 0 14 18"><path d="M10.500 0.500 L12.500 2.500 L3 9.800 L1 7.500Z" fill="#a99ae0"/><path d="M0.800 7.800 L3.800 7 L10.800 16.500 L9.500 17 Z" fill="#9687d2"/><circle cx="11.200" cy="1.900" r="2.300" fill="#d0c6f6"/><circle cx="2.200" cy="8.600" r="2.100" fill="#c9bdf4"/></svg>
<div style="position:absolute;top:477.0px;line-height:15px;font-size:11.5px;color:#e2e2e2;white-space:nowrap;left:200.0px;">FacialBone</div>
<svg style="position:absolute;left:167.0px;top:499.5px;" width="7" height="7" viewBox="0 0 7 7"><circle cx="3.5" cy="3.5" r="2.8" fill="#a6a6a6"/></svg>
<svg style="position:absolute;left:183px;top:497px;" width="14" height="14" viewBox="0 0 14 14"><g transform="rotate(-40 7 7)" fill="none" stroke="#dd5560" stroke-width="2"><rect x="-0.5" y="4.2" width="8" height="5.6" rx="2.8"/><rect x="6.5" y="4.2" width="8" height="5.6" rx="2.8"/></g></svg>
<div style="position:absolute;top:497.0px;line-height:15px;font-size:11.5px;color:#e2e2e2;white-space:nowrap;left:200.0px;">Head_parentConstraint1</div>
<svg style="position:absolute;left:167.0px;top:519.5px;" width="7" height="7" viewBox="0 0 7 7"><circle cx="3.5" cy="3.5" r="2.8" fill="#a6a6a6"/></svg>
<svg style="position:absolute;left:183px;top:517px;" width="14" height="14" viewBox="0 0 14 14"><g transform="rotate(-40 7 7)" fill="none" stroke="#dd5560" stroke-width="2"><rect x="-0.5" y="4.2" width="8" height="5.6" rx="2.8"/><rect x="6.5" y="4.2" width="8" height="5.6" rx="2.8"/></g></svg>
<div style="position:absolute;top:517.0px;line-height:15px;font-size:11.5px;color:#e2e2e2;white-space:nowrap;letter-spacing:-0.15px;left:200.0px;">Head_scaleConstraint1</div>
<svg style="position:absolute;left:167.0px;top:539px;" width="9" height="9" viewBox="0 0 9 9"><rect x="0.5" y="0.5" width="8" height="8" fill="#242424" stroke="#a8a8a8" stroke-width="1"/><path d="M2.5 4.5 H6.5" stroke="#a8a8a8" stroke-width="1"/><path d="M4.5 2.5 V6.5" stroke="#a8a8a8" stroke-width="1"/></svg>
<svg style="position:absolute;left:183px;top:535.5px;" width="14" height="18" viewBox="0 0 14 18"><path d="M10.500 0.500 L12.500 2.500 L3 9.800 L1 7.500Z" fill="#a99ae0"/><path d="M0.800 7.800 L3.800 7 L10.800 16.500 L9.500 17 Z" fill="#9687d2"/><circle cx="11.200" cy="1.900" r="2.300" fill="#d0c6f6"/><circle cx="2.200" cy="8.600" r="2.100" fill="#c9bdf4"/></svg>
<div style="position:absolute;top:537.0px;line-height:15px;font-size:11.5px;color:#e2e2e2;white-space:nowrap;left:200.0px;">FaceJoint_M</div>
<svg style="position:absolute;left:155.0px;top:559.5px;" width="7" height="7" viewBox="0 0 7 7"><circle cx="3.5" cy="3.5" r="2.8" fill="#a6a6a6"/></svg>
<svg style="position:absolute;left:171px;top:557px;" width="14" height="14" viewBox="0 0 14 14"><g transform="rotate(-40 7 7)" fill="none" stroke="#dd5560" stroke-width="2"><rect x="-0.5" y="4.2" width="8" height="5.6" rx="2.8"/><rect x="6.5" y="4.2" width="8" height="5.6" rx="2.8"/></g></svg>
<div style="position:absolute;top:557.0px;line-height:15px;font-size:11.5px;color:#e2e2e2;white-space:nowrap;left:188.0px;">NeckTwist02_parentConstraint</div>
<svg style="position:absolute;left:155.0px;top:579.5px;" width="7" height="7" viewBox="0 0 7 7"><circle cx="3.5" cy="3.5" r="2.8" fill="#a6a6a6"/></svg>
<svg style="position:absolute;left:171px;top:577px;" width="14" height="14" viewBox="0 0 14 14"><g transform="rotate(-40 7 7)" fill="none" stroke="#dd5560" stroke-width="2"><rect x="-0.5" y="4.2" width="8" height="5.6" rx="2.8"/><rect x="6.5" y="4.2" width="8" height="5.6" rx="2.8"/></g></svg>
<div style="position:absolute;top:577.0px;line-height:15px;font-size:11.5px;color:#e2e2e2;white-space:nowrap;letter-spacing:-0.11px;left:188.0px;">NeckTwist02_scaleConstraint1</div>
<svg style="position:absolute;left:143.0px;top:599.5px;" width="7" height="7" viewBox="0 0 7 7"><circle cx="3.5" cy="3.5" r="2.8" fill="#a6a6a6"/></svg>
<svg style="position:absolute;left:159px;top:597px;" width="14" height="14" viewBox="0 0 14 14"><g transform="rotate(-40 7 7)" fill="none" stroke="#dd5560" stroke-width="2"><rect x="-0.5" y="4.2" width="8" height="5.6" rx="2.8"/><rect x="6.5" y="4.2" width="8" height="5.6" rx="2.8"/></g></svg>
<div style="position:absolute;top:597.0px;line-height:15px;font-size:11.5px;color:#e2e2e2;white-space:nowrap;left:176.0px;">NeckTwist01_parentConstraint1</div>
<svg style="position:absolute;left:143.0px;top:619.5px;" width="7" height="7" viewBox="0 0 7 7"><circle cx="3.5" cy="3.5" r="2.8" fill="#a6a6a6"/></svg>
<svg style="position:absolute;left:159px;top:617px;" width="14" height="14" viewBox="0 0 14 14"><g transform="rotate(-40 7 7)" fill="none" stroke="#dd5560" stroke-width="2"><rect x="-0.5" y="4.2" width="8" height="5.6" rx="2.8"/><rect x="6.5" y="4.2" width="8" height="5.6" rx="2.8"/></g></svg>
<div style="position:absolute;top:617.0px;line-height:15px;font-size:11.5px;color:#e2e2e2;white-space:nowrap;letter-spacing:-0.11px;left:176.0px;">NeckTwist01_scaleConstraint1</div>
<svg style="position:absolute;left:131.0px;top:639px;" width="9" height="9" viewBox="0 0 9 9"><rect x="0.5" y="0.5" width="8" height="8" fill="#242424" stroke="#a8a8a8" stroke-width="1"/><path d="M2.5 4.5 H6.5" stroke="#a8a8a8" stroke-width="1"/><path d="M4.5 2.5 V6.5" stroke="#a8a8a8" stroke-width="1"/></svg>
<svg style="position:absolute;left:147px;top:635.5px;" width="14" height="18" viewBox="0 0 14 18"><path d="M10.500 0.500 L12.500 2.500 L3 9.800 L1 7.500Z" fill="#a99ae0"/><path d="M0.800 7.800 L3.800 7 L10.800 16.500 L9.500 17 Z" fill="#9687d2"/><circle cx="11.200" cy="1.900" r="2.300" fill="#d0c6f6"/><circle cx="2.200" cy="8.600" r="2.100" fill="#c9bdf4"/></svg>
<div style="position:absolute;top:637.0px;line-height:15px;font-size:11.5px;color:#e2e2e2;white-space:nowrap;left:164.0px;">L_Clavicle</div>
<svg style="position:absolute;left:131.0px;top:659px;" width="9" height="9" viewBox="0 0 9 9"><rect x="0.5" y="0.5" width="8" height="8" fill="#242424" stroke="#a8a8a8" stroke-width="1"/><path d="M2.5 4.5 H6.5" stroke="#a8a8a8" stroke-width="1"/><path d="M4.5 2.5 V6.5" stroke="#a8a8a8" stroke-width="1"/></svg>
<svg style="position:absolute;left:147px;top:655.5px;" width="14" height="18" viewBox="0 0 14 18"><path d="M10.500 0.500 L12.500 2.500 L3 9.800 L1 7.500Z" fill="#a99ae0"/><path d="M0.800 7.800 L3.800 7 L10.800 16.500 L9.500 17 Z" fill="#9687d2"/><circle cx="11.200" cy="1.900" r="2.300" fill="#d0c6f6"/><circle cx="2.200" cy="8.600" r="2.100" fill="#c9bdf4"/></svg>
<div style="position:absolute;top:657.0px;line-height:15px;font-size:11.5px;color:#e2e2e2;white-space:nowrap;left:164.0px;">L_RibsTwist</div>
<svg style="position:absolute;left:131.0px;top:679px;" width="9" height="9" viewBox="0 0 9 9"><rect x="0.5" y="0.5" width="8" height="8" fill="#242424" stroke="#a8a8a8" stroke-width="1"/><path d="M2.5 4.5 H6.5" stroke="#a8a8a8" stroke-width="1"/><path d="M4.5 2.5 V6.5" stroke="#a8a8a8" stroke-width="1"/></svg>
<svg style="position:absolute;left:147px;top:675.5px;" width="14" height="18" viewBox="0 0 14 18"><path d="M10.500 0.500 L12.500 2.500 L3 9.800 L1 7.500Z" fill="#a99ae0"/><path d="M0.800 7.800 L3.800 7 L10.800 16.500 L9.500 17 Z" fill="#9687d2"/><circle cx="11.200" cy="1.900" r="2.300" fill="#d0c6f6"/><circle cx="2.200" cy="8.600" r="2.100" fill="#c9bdf4"/></svg>
<div style="position:absolute;top:677.0px;line-height:15px;font-size:11.5px;color:#e2e2e2;white-space:nowrap;left:164.0px;">R_RibsTwist</div>
<svg style="position:absolute;left:131.0px;top:699px;" width="9" height="9" viewBox="0 0 9 9"><rect x="0.5" y="0.5" width="8" height="8" fill="#242424" stroke="#a8a8a8" stroke-width="1"/><path d="M2.5 4.5 H6.5" stroke="#a8a8a8" stroke-width="1"/><path d="M4.5 2.5 V6.5" stroke="#a8a8a8" stroke-width="1"/></svg>
<svg style="position:absolute;left:147px;top:695.5px;" width="14" height="18" viewBox="0 0 14 18"><path d="M10.500 0.500 L12.500 2.500 L3 9.800 L1 7.500Z" fill="#a99ae0"/><path d="M0.800 7.800 L3.800 7 L10.800 16.500 L9.500 17 Z" fill="#9687d2"/><circle cx="11.200" cy="1.900" r="2.300" fill="#d0c6f6"/><circle cx="2.200" cy="8.600" r="2.100" fill="#c9bdf4"/></svg>
<div style="position:absolute;top:697.0px;line-height:15px;font-size:11.5px;color:#e2e2e2;white-space:nowrap;left:164.0px;">R_Clavicle</div>
<svg style="position:absolute;left:131.0px;top:719.5px;" width="7" height="7" viewBox="0 0 7 7"><circle cx="3.5" cy="3.5" r="2.8" fill="#a6a6a6"/></svg>
<svg style="position:absolute;left:147px;top:717px;" width="14" height="14" viewBox="0 0 14 14"><g transform="rotate(-40 7 7)" fill="none" stroke="#dd5560" stroke-width="2"><rect x="-0.5" y="4.2" width="8" height="5.6" rx="2.8"/><rect x="6.5" y="4.2" width="8" height="5.6" rx="2.8"/></g></svg>
<div style="position:absolute;top:717.0px;line-height:15px;font-size:11.5px;color:#e2e2e2;white-space:nowrap;left:164.0px;">Spine02_parentConstraint1</div>
<svg style="position:absolute;left:131.0px;top:739.5px;" width="7" height="7" viewBox="0 0 7 7"><circle cx="3.5" cy="3.5" r="2.8" fill="#a6a6a6"/></svg>
<svg style="position:absolute;left:147px;top:737px;" width="14" height="14" viewBox="0 0 14 14"><g transform="rotate(-40 7 7)" fill="none" stroke="#dd5560" stroke-width="2"><rect x="-0.5" y="4.2" width="8" height="5.6" rx="2.8"/><rect x="6.5" y="4.2" width="8" height="5.6" rx="2.8"/></g></svg>
<div style="position:absolute;top:737.0px;line-height:15px;font-size:11.5px;color:#e2e2e2;white-space:nowrap;letter-spacing:-0.13px;left:164.0px;">Spine02_scaleConstraint1</div>
<svg style="position:absolute;left:119.0px;top:759.5px;" width="7" height="7" viewBox="0 0 7 7"><circle cx="3.5" cy="3.5" r="2.8" fill="#a6a6a6"/></svg>
<svg style="position:absolute;left:135px;top:757px;" width="14" height="14" viewBox="0 0 14 14"><g transform="rotate(-40 7 7)" fill="none" stroke="#dd5560" stroke-width="2"><rect x="-0.5" y="4.2" width="8" height="5.6" rx="2.8"/><rect x="6.5" y="4.2" width="8" height="5.6" rx="2.8"/></g></svg>
<div style="position:absolute;top:757.0px;line-height:15px;font-size:11.5px;color:#e2e2e2;white-space:nowrap;left:152.0px;">Spine01_parentConstraint1</div>
<svg style="position:absolute;left:119.0px;top:779.5px;" width="7" height="7" viewBox="0 0 7 7"><circle cx="3.5" cy="3.5" r="2.8" fill="#a6a6a6"/></svg>
<svg style="position:absolute;left:135px;top:777px;" width="14" height="14" viewBox="0 0 14 14"><g transform="rotate(-40 7 7)" fill="none" stroke="#dd5560" stroke-width="2"><rect x="-0.5" y="4.2" width="8" height="5.6" rx="2.8"/><rect x="6.5" y="4.2" width="8" height="5.6" rx="2.8"/></g></svg>
<div style="position:absolute;top:777.0px;line-height:15px;font-size:11.5px;color:#e2e2e2;white-space:nowrap;letter-spacing:-0.13px;left:152.0px;">Spine01_scaleConstraint1</div>
<svg style="position:absolute;left:107.0px;top:799.5px;" width="7" height="7" viewBox="0 0 7 7"><circle cx="3.5" cy="3.5" r="2.8" fill="#a6a6a6"/></svg>
<svg style="position:absolute;left:123px;top:797px;" width="14" height="14" viewBox="0 0 14 14"><g transform="rotate(-40 7 7)" fill="none" stroke="#dd5560" stroke-width="2"><rect x="-0.5" y="4.2" width="8" height="5.6" rx="2.8"/><rect x="6.5" y="4.2" width="8" height="5.6" rx="2.8"/></g></svg>
<div style="position:absolute;top:797.0px;line-height:15px;font-size:11.5px;color:#e2e2e2;white-space:nowrap;left:140.0px;">Waist_parentConstraint1</div>
<svg style="position:absolute;left:107.0px;top:819.5px;" width="7" height="7" viewBox="0 0 7 7"><circle cx="3.5" cy="3.5" r="2.8" fill="#a6a6a6"/></svg>
<svg style="position:absolute;left:123px;top:817px;" width="14" height="14" viewBox="0 0 14 14"><g transform="rotate(-40 7 7)" fill="none" stroke="#dd5560" stroke-width="2"><rect x="-0.5" y="4.2" width="8" height="5.6" rx="2.8"/><rect x="6.5" y="4.2" width="8" height="5.6" rx="2.8"/></g></svg>
<div style="position:absolute;top:817.0px;line-height:15px;font-size:11.5px;color:#e2e2e2;white-space:nowrap;letter-spacing:-0.15px;left:140.0px;">Waist_scaleConstraint1</div>
<svg style="position:absolute;left:95.0px;top:839.5px;" width="7" height="7" viewBox="0 0 7 7"><circle cx="3.5" cy="3.5" r="2.8" fill="#a6a6a6"/></svg>
<svg style="position:absolute;left:111px;top:837px;" width="14" height="14" viewBox="0 0 14 14"><g transform="rotate(-40 7 7)" fill="none" stroke="#dd5560" stroke-width="2"><rect x="-0.5" y="4.2" width="8" height="5.6" rx="2.8"/><rect x="6.5" y="4.2" width="8" height="5.6" rx="2.8"/></g></svg>
<div style="position:absolute;top:837.0px;line-height:15px;font-size:11.5px;color:#e2e2e2;white-space:nowrap;left:128.0px;">Hip_parentConstraint1</div>
<svg style="position:absolute;left:95.0px;top:859.5px;" width="7" height="7" viewBox="0 0 7 7"><circle cx="3.5" cy="3.5" r="2.8" fill="#a6a6a6"/></svg>
<svg style="position:absolute;left:111px;top:857px;" width="14" height="14" viewBox="0 0 14 14"><g transform="rotate(-40 7 7)" fill="none" stroke="#dd5560" stroke-width="2"><rect x="-0.5" y="4.2" width="8" height="5.6" rx="2.8"/><rect x="6.5" y="4.2" width="8" height="5.6" rx="2.8"/></g></svg>
<div style="position:absolute;top:857.0px;line-height:15px;font-size:11.5px;color:#e2e2e2;white-space:nowrap;letter-spacing:-0.16px;left:128.0px;">Hip_scaleConstraint1</div>
<svg style="position:absolute;left:71.0px;top:879px;" width="9" height="9" viewBox="0 0 9 9"><rect x="0.5" y="0.5" width="8" height="8" fill="#242424" stroke="#a8a8a8" stroke-width="1"/><path d="M2.5 4.5 H6.5" stroke="#a8a8a8" stroke-width="1"/><path d="M4.5 2.5 V6.5" stroke="#a8a8a8" stroke-width="1"/></svg>
<svg style="position:absolute;left:87px;top:877px;" width="15" height="14" viewBox="0 0 15 14"><path d="M4 1 H15 L11 13 H0Z" fill="#e4e4e4"/><path d="M2 5 H8 V3 L12.5 6.8 L8 10.5 V8.5 H2Z" fill="#c8323c"/></svg>
<div style="position:absolute;top:877.0px;line-height:15px;font-size:11.5px;color:#e2e2e2;white-space:nowrap;left:104.0px;">Group</div>
<svg style="position:absolute;left:71.0px;top:899px;" width="9" height="9" viewBox="0 0 9 9"><rect x="0.5" y="0.5" width="8" height="8" fill="#242424" stroke="#a8a8a8" stroke-width="1"/><path d="M2.5 4.5 H6.5" stroke="#a8a8a8" stroke-width="1"/><path d="M4.5 2.5 V6.5" stroke="#a8a8a8" stroke-width="1"/></svg>
<svg style="position:absolute;left:87px;top:897px;" width="14" height="14" viewBox="0 0 14 14"><path d="M2 1 C10 3 12 6 11 10 C9 12 5 12 1 12" fill="none" stroke="#4d7fb8" stroke-width="1.6"/></svg>
<div style="position:absolute;top:897.0px;line-height:15px;font-size:11.5px;color:#e2e2e2;white-space:nowrap;left:104.0px;">CommonBlendShapesCtrl</div>
</div></div>
<div style="position:absolute;left:346px;top:215px;width:15.5px;height:706px;background:#373737;"></div>
<svg style="position:absolute;left:347px;top:216px;" width="10" height="6" viewBox="0 0 10 6"><path d="M0 6 L5 0 L10 6Z" fill="#bdbdbd"/></svg>
<div style="position:absolute;left:348px;top:228px;width:10px;height:273px;background:#5d5d5d;border-radius:5px;"></div>
<svg style="position:absolute;left:347px;top:897px;" width="10" height="6" viewBox="0 0 10 6"><path d="M0 0 L5 6 L10 0Z" fill="#bdbdbd"/></svg>
<div style="position:absolute;left:48.5px;top:906px;width:297.5px;height:15px;background:#373737;"></div>
<svg style="position:absolute;left:52px;top:908px;" width="6" height="10" viewBox="0 0 6 10"><path d="M6 0 L0 5 L6 10Z" fill="#bdbdbd"/></svg>
<div style="position:absolute;left:61px;top:908px;width:264px;height:10px;background:#5d5d5d;border-radius:5px;"></div>
<svg style="position:absolute;left:336px;top:908px;" width="6" height="10" viewBox="0 0 6 10"><path d="M0 0 L6 5 L0 10Z" fill="#bdbdbd"/></svg>
<svg style="position:absolute;left:152px;top:922px;" width="104" height="2" viewBox="0 0 104 2"><path d="M0.0 0.5 H104" stroke="#7a7a7a" stroke-width="1" stroke-dasharray="1 1"/></svg>
<!-- p_viewport -->
<div style="position:absolute;left:361.5px;top:148.5px;width:1286px;height:778px;background:#444444;"></div>
<div style="position:absolute;left:1641px;top:148.5px;width:6px;height:778px;background:#404040;"></div>
<div style="position:absolute;left:367px;top:152px;width:1269.5px;height:774px;background:#444444;border:1px solid #7e7e7e;"></div>
<div style="position:absolute;top:155.5px;line-height:15px;font-size:11.5px;color:#d6d6d6;white-space:nowrap;letter-spacing:0.07px;left:376.0px;">View</div>
<div style="position:absolute;top:155.5px;line-height:15px;font-size:11.5px;color:#d6d6d6;white-space:nowrap;letter-spacing:0.11px;left:416.0px;">Shading</div>
<div style="position:absolute;top:155.5px;line-height:15px;font-size:11.5px;color:#d6d6d6;white-space:nowrap;letter-spacing:0.34px;left:474.0px;">Lighting</div>
<div style="position:absolute;top:155.5px;line-height:15px;font-size:11.5px;color:#d6d6d6;white-space:nowrap;letter-spacing:0.06px;left:532.0px;">Show</div>
<div style="position:absolute;top:155.5px;line-height:15px;font-size:11.5px;color:#d6d6d6;white-space:nowrap;letter-spacing:-0.12px;left:576.0px;">Renderer</div>
<div style="position:absolute;top:155.5px;line-height:15px;font-size:11.5px;color:#d6d6d6;white-space:nowrap;letter-spacing:-0.36px;left:638.0px;">Panels</div>
<div style="position:absolute;left:368px;top:191px;width:1267.5px;height:734px;background:#5e5e5e;"></div>
<svg style="position:absolute;left:370.5px;top:172.5px;" width="4" height="17" viewBox="0 0 4 17"><path d="M2 0 V17" stroke="#8a8a8a" stroke-width="1"/><path d="M2 3.500 C3.900 6 3.900 11 2 13.500 C0.100 11 0.100 6 2 3.500Z" fill="#a4a4a4"/></svg>
<svg style="position:absolute;left:381px;top:172.5px;" width="14" height="18" viewBox="0 0 14 18"><circle cx="6.5" cy="8" r="6.5" fill="#d8d8d8"/><path d="M3 5 L6.5 12 L10 5" stroke="#555" stroke-width="1.8" fill="none"/><circle cx="11" cy="13" r="3" fill="#55b9c6"/></svg>
<svg style="position:absolute;left:400px;top:172.5px;" width="13" height="18" viewBox="0 0 13 18"><rect x="1" y="3" width="11" height="12" fill="#505050"/></svg>
<svg style="position:absolute;left:419px;top:172.5px;" width="13" height="18" viewBox="0 0 13 18"><rect x="1" y="3" width="11" height="12" fill="#4b4b4b"/></svg>
<svg style="position:absolute;left:438.5px;top:172.5px;" width="4" height="17" viewBox="0 0 4 17"><path d="M2 0 V17" stroke="#8a8a8a" stroke-width="1"/><path d="M2 3.500 C3.900 6 3.900 11 2 13.500 C0.100 11 0.100 6 2 3.500Z" fill="#a4a4a4"/></svg>
<svg style="position:absolute;left:449px;top:172.5px;" width="14" height="18" viewBox="0 0 14 18"><rect x="0" y="5" width="9" height="8" fill="#d0d0d0"/><path d="M9.5 9 L14 4.5 V13.5Z" fill="#d0d0d0"/></svg>
<svg style="position:absolute;left:468px;top:172.5px;" width="15" height="18" viewBox="0 0 15 18"><rect x="2" y="2" width="8" height="7" fill="#d0d0d0"/><path d="M10.5 5.5 L15 1.5 V9.5Z" fill="#d0d0d0"/><rect x="0.5" y="9" width="8" height="7" rx="1" fill="#55b9c6"/><path d="M2.5 9 V7.5 a2 2 0 0 1 4 0 V9" fill="none" stroke="#55b9c6" stroke-width="1.3"/></svg>
<svg style="position:absolute;left:487px;top:172.5px;" width="15" height="18" viewBox="0 0 15 18"><rect x="2" y="2" width="8" height="7" fill="#d0d0d0"/><path d="M10.5 5.5 L15 1.5 V9.5Z" fill="#d0d0d0"/><circle cx="5" cy="12" r="3" fill="none" stroke="#55b9c6" stroke-width="2" stroke-dasharray="1.6 1"/><circle cx="5" cy="12" r="1.8" fill="none" stroke="#55b9c6" stroke-width="1.2"/></svg>
<svg style="position:absolute;left:510px;top:172.5px;" width="7" height="18" viewBox="0 0 7 18"><path d="M0.5 2 H6.5 V14 L3.5 11 L0.5 14Z" fill="#d0d0d0"/></svg>
<svg style="position:absolute;left:525px;top:172.5px;" width="15" height="18" viewBox="0 0 15 18"><path d="M7 2 L13 2 L9 12 L3 12Z" fill="#55b9c6"/><path d="M1 15 L5 11 H14 L10 15Z" fill="none" stroke="#d0d0d0" stroke-width="1.1"/><path d="M2 16 H9" stroke="#c46a8a" stroke-width="1.2"/></svg>
<svg style="position:absolute;left:544px;top:172.5px;" width="15" height="18" viewBox="0 0 15 18"><path d="M5 1 V9 M1 5 H9 M5 0 l1.8 2.4 h-3.6z M0 5 l2.4 -1.8 v3.6z M10 5 l-2.4 -1.8 v3.6z" stroke="#d0d0d0" stroke-width="1" fill="#d0d0d0"/><circle cx="9.5" cy="11" r="3.2" fill="none" stroke="#55b9c6" stroke-width="1.5"/><path d="M7 13.5 L4 16.5" stroke="#55b9c6" stroke-width="1.8"/></svg>
<svg style="position:absolute;left:563px;top:172.5px;" width="14" height="18" viewBox="0 0 14 18"><path d="M9 1 L13 5 L6 12 L2 8Z" fill="#d0d0d0"/><path d="M2 8 L6 12 L1 14Z" fill="#55b9c6"/><path d="M6 15 C9 12 11 17 13 13" stroke="#55b9c6" stroke-width="1.3" fill="none"/></svg>
<svg style="position:absolute;left:583px;top:172.5px;" width="4" height="17" viewBox="0 0 4 17"><path d="M2 0 V17" stroke="#8a8a8a" stroke-width="1"/><path d="M2 3.500 C3.900 6 3.900 11 2 13.500 C0.100 11 0.100 6 2 3.500Z" fill="#a4a4a4"/></svg>
<div style="position:absolute;left:591px;top:172px;width:18.5px;height:19px;background:#5588b0;"></div>
<svg style="position:absolute;left:594px;top:172.5px;" width="13" height="18" viewBox="0 0 13 18"><rect x="0.6" y="2.6" width="11.8" height="11.8" fill="#2e3e48" stroke="#f0e8d8" stroke-width="1.2"/><path d="M4.5 3 V14 M8.5 3 V14 M1 6.5 H12 M1 10.5 H12" stroke="#f0e8d8" stroke-width="1.1"/></svg>
<svg style="position:absolute;left:612px;top:172.5px;" width="15" height="18" viewBox="0 0 15 18"><rect x="0.6" y="3" width="13.8" height="11" fill="none" stroke="#d0d0d0" stroke-width="1.2"/><path d="M1 5 H14 M1 12 H14" stroke="#d0d0d0" stroke-width="1.6" stroke-dasharray="1.6 1.2"/></svg>
<svg style="position:absolute;left:631px;top:172.5px;" width="15" height="18" viewBox="0 0 15 18"><rect x="0.6" y="3" width="13.8" height="11" fill="none" stroke="#d0d0d0" stroke-width="1.2"/><circle cx="7.5" cy="8.5" r="3" fill="#55b9c6"/></svg>
<svg style="position:absolute;left:649px;top:172.5px;" width="16" height="18" viewBox="0 0 16 18"><rect x="0.6" y="2" width="14.8" height="13" fill="#505050"/><circle cx="8" cy="8.5" r="3.4" fill="#474747"/></svg>
<svg style="position:absolute;left:669px;top:172.5px;" width="15" height="18" viewBox="0 0 15 18"><rect x="0.6" y="3" width="13.8" height="11" fill="none" stroke="#d0d0d0" stroke-width="1.2"/><path d="M7.5 5 V12 M4 8.5 H11 M5 6 L10 11 M10 6 L5 11" stroke="#55b9c6" stroke-width="1" stroke-dasharray="1.2 1"/></svg>
<svg style="position:absolute;left:688px;top:172.5px;" width="15" height="18" viewBox="0 0 15 18"><rect x="0.6" y="3" width="13.8" height="11" fill="none" stroke="#d0d0d0" stroke-width="1.2"/><path d="M3 12.5 L6 7.5 L9 12.5Z" fill="#55b9c6"/><circle cx="10" cy="7" r="2.4" fill="#55b9c6"/></svg>
<svg style="position:absolute;left:707px;top:172.5px;" width="15" height="18" viewBox="0 0 15 18"><rect x="0.6" y="3" width="13.8" height="11" fill="none" stroke="#d0d0d0" stroke-width="1.2"/><path d="M4 5.5 H11 V7.3 H8.6 V12 H6.4 V7.3 H4Z" fill="#55b9c6"/></svg>
<svg style="position:absolute;left:726px;top:172.5px;" width="4" height="17" viewBox="0 0 4 17"><path d="M2 0 V17" stroke="#8a8a8a" stroke-width="1"/><path d="M2 3.500 C3.900 6 3.900 11 2 13.500 C0.100 11 0.100 6 2 3.500Z" fill="#a4a4a4"/></svg>
<svg style="position:absolute;left:736.5px;top:172.5px;" width="15" height="18" viewBox="0 0 15 18"><path d="M7.5 1.5 L14 4.5 V12.5 L7.5 16 L1 12.5 V4.5Z" fill="none" stroke="#d0d0d0" stroke-width="1.1"/><path d="M1 4.5 L7.5 8 L14 4.5 M7.5 8 V16" fill="none" stroke="#d0d0d0" stroke-width="1.1"/></svg>
<div style="position:absolute;left:754px;top:172px;width:19px;height:19px;background:#5588b0;"></div>
<svg style="position:absolute;left:756px;top:172.5px;" width="15" height="18" viewBox="0 0 15 18"><path d="M7.5 1.5 L14 4.5 V12.5 L7.5 16 L1 12.5 V4.5Z" fill="#58c4d6" stroke="#1f3a48" stroke-width="1.1"/><path d="M1 4.5 L7.5 8 L14 4.5 M7.5 8 V16" fill="none" stroke="#1f3a48" stroke-width="1.1"/></svg>
<svg style="position:absolute;left:775px;top:172.5px;" width="14" height="18" viewBox="0 0 14 18"><circle cx="7" cy="9" r="6.4" fill="#d0d0d0"/><path d="M7 2.6 A6.4 6.4 0 0 1 7 15.4Z" fill="#444"/><g fill="#d0d0d0"><rect x="8" y="4" width="2" height="2"/><rect x="10" y="6" width="2" height="2"/><rect x="8" y="8" width="2" height="2"/><rect x="10" y="10" width="2" height="2"/><rect x="8" y="12" width="2" height="2"/></g></svg>
<svg style="position:absolute;left:794px;top:172.5px;" width="15" height="18" viewBox="0 0 15 18"><path d="M7.5 1.5 L14 4.5 V12.5 L7.5 16 L1 12.5 V4.5Z" fill="#7ccbd8" stroke="#e8e8e8" stroke-width="1.1"/><path d="M1 4.5 L7.5 8 L14 4.5 M7.5 8 V16" fill="none" stroke="#e8e8e8" stroke-width="1.1"/><path d="M4 6 V14 M10.8 6 V14.2 M1 8.5 L7.5 12 L14 8.5" stroke="#55b9c6" stroke-width="0.9" fill="none"/></svg>
<div style="position:absolute;left:810.5px;top:172px;width:19px;height:19px;background:#5588b0;"></div>
<svg style="position:absolute;left:813px;top:172.5px;" width="14" height="18" viewBox="0 0 14 18"><circle cx="7" cy="9" r="6.5" fill="#e6e6e6" stroke="#1f3a48" stroke-width="0.8"/><g fill="#2b2b2b"><rect x="3" y="4" width="2.4" height="2.4"/><rect x="7.8" y="4" width="2.4" height="2.4"/><rect x="5.4" y="6.4" width="2.4" height="2.4"/><rect x="10.2" y="6.4" width="2.4" height="2.4"/><rect x="3" y="8.8" width="2.4" height="2.4"/><rect x="7.8" y="8.8" width="2.4" height="2.4"/><rect x="5.4" y="11.2" width="2.4" height="2.4"/><rect x="1" y="6.4" width="2" height="2.4"/><rect x="10.2" y="11.2" width="2" height="2"/></g></svg>
<svg style="position:absolute;left:832.5px;top:172.5px;" width="15" height="18" viewBox="0 0 15 18"><path d="M7.5 4 a4 4 0 0 1 2 7.4 V14 H5.5 V11.4 a4 4 0 0 1 2 -7.4Z" fill="#e8e8e8"/><path d="M7.5 0 V2 M1 8 H3 M12 8 H14 M2.6 3 L4 4.4 M12.4 3 L11 4.4" stroke="#55b9c6" stroke-width="1.2"/><rect x="5.8" y="14.6" width="3.4" height="1.6" fill="#d0d0d0"/></svg>
<svg style="position:absolute;left:850px;top:172.5px;" width="16" height="18" viewBox="0 0 16 18"><circle cx="10" cy="7" r="5" fill="#55b9c6"/><path d="M0 14 C4 10 8 13 14 11 L13 14 C8 16 4 14 1 16Z" fill="#55b9c6"/></svg>
<svg style="position:absolute;left:870.5px;top:172.5px;" width="4" height="17" viewBox="0 0 4 17"><path d="M2 0 V17" stroke="#8a8a8a" stroke-width="1"/><path d="M2 3.500 C3.900 6 3.900 11 2 13.500 C0.100 11 0.100 6 2 3.500Z" fill="#a4a4a4"/></svg>
<svg style="position:absolute;left:881px;top:172.5px;" width="15" height="18" viewBox="0 0 15 18"><circle cx="7.5" cy="7" r="5.5" fill="#d8d8d8"/><path d="M2 13 L4 16 M5 14 L7 17 M8 14 L10 17 M11 13 L13 16" stroke="#55b9c6" stroke-width="1.1"/></svg>
<svg style="position:absolute;left:900px;top:172.5px;" width="15" height="18" viewBox="0 0 15 18"><circle cx="5.5" cy="10.5" r="4.5" fill="#8a8a8a"/><circle cx="10" cy="6.5" r="4.5" fill="#e0e0e0"/></svg>
<svg style="position:absolute;left:919.5px;top:172.5px;" width="14" height="18" viewBox="0 0 14 18"><circle cx="7" cy="9" r="5.6" fill="none" stroke="#55b9c6" stroke-width="2.2" stroke-dasharray="3 1.6"/><circle cx="7" cy="9" r="3" fill="#e0e0e0"/></svg>
<svg style="position:absolute;left:938px;top:172.5px;" width="15" height="18" viewBox="0 0 15 18"><rect x="0.5" y="2" width="14" height="13" fill="#4e4e4e"/><rect x="5" y="8" width="7" height="6" fill="#475358"/></svg>
<svg style="position:absolute;left:957px;top:172.5px;" width="4" height="17" viewBox="0 0 4 17"><path d="M2 0 V17" stroke="#8a8a8a" stroke-width="1"/><path d="M2 3.500 C3.900 6 3.900 11 2 13.500 C0.100 11 0.100 6 2 3.500Z" fill="#a4a4a4"/></svg>
<svg style="position:absolute;left:968px;top:172.5px;" width="15" height="18" viewBox="0 0 15 18"><rect x="1" y="2" width="9" height="9" fill="none" stroke="#55b9c6" stroke-width="1.2" stroke-dasharray="2 1.2"/><path d="M7 6 L7 15 L9.3 13 L11 16.6 L12.6 15.8 L10.9 12.4 L13.8 12.4Z" fill="#d8d8d8" stroke="#444" stroke-width="0.5"/></svg>
<svg style="position:absolute;left:987px;top:172.5px;" width="4" height="17" viewBox="0 0 4 17"><path d="M2 0 V17" stroke="#8a8a8a" stroke-width="1"/><path d="M2 3.500 C3.900 6 3.900 11 2 13.500 C0.100 11 0.100 6 2 3.500Z" fill="#a4a4a4"/></svg>
<svg style="position:absolute;left:998px;top:172.5px;" width="14" height="18" viewBox="0 0 14 18"><rect x="4" y="3" width="9" height="9" fill="none" stroke="#d0d0d0" stroke-width="1.4"/><rect x="1" y="6" width="9" height="9" fill="#d0d0d0"/></svg>
<svg style="position:absolute;left:1016.5px;top:172.5px;" width="15" height="18" viewBox="0 0 15 18"><rect x="5" y="2" width="9" height="9" fill="none" stroke="#d0d0d0" stroke-width="1.4"/><rect x="1" y="6" width="9" height="9" fill="#d0d0d0"/></svg>
<svg style="position:absolute;left:1035px;top:172.5px;" width="17" height="18" viewBox="0 0 17 18"><rect x="0.6" y="0.6" width="15.8" height="16.8" fill="#3d4a52" stroke="#5588b0" stroke-width="1.2"/><rect x="3" y="3" width="11" height="12" fill="none" stroke="#d0d0d0" stroke-width="1.2"/><path d="M5 5 L11 12" stroke="#d0d0d0" stroke-width="1.4"/><path d="M5 5 h3 l-3 3z" fill="#d0d0d0"/></svg>
<svg style="position:absolute;left:1055.5px;top:172.5px;" width="4" height="17" viewBox="0 0 4 17"><path d="M2 0 V17" stroke="#8a8a8a" stroke-width="1"/><path d="M2 3.500 C3.900 6 3.900 11 2 13.500 C0.100 11 0.100 6 2 3.500Z" fill="#a4a4a4"/></svg>
<svg style="position:absolute;left:1066.5px;top:172.5px;" width="14" height="18" viewBox="0 0 14 18"><circle cx="7" cy="9" r="6.2" fill="#e0e0e0"/><g stroke="#444" stroke-width="1.6"><path d="M7 9 L7 2.8 M7 9 L12.4 6 M7 9 L12.4 12 M7 9 L7 15.2 M7 9 L1.6 12 M7 9 L1.6 6"/></g><circle cx="7" cy="9" r="1.8" fill="#444"/></svg>
<div style="position:absolute;left:1085px;top:173px;width:38px;height:16px;background:#2b2b2b;"></div>
<div style="position:absolute;top:174.5px;line-height:15px;font-size:11.5px;color:#d6d6d6;white-space:nowrap;letter-spacing:-0.35px;left:1090.0px;">0.00</div>
<svg style="position:absolute;left:1128px;top:172.5px;" width="14" height="18" viewBox="0 0 14 18"><path d="M3 3 H12 V15 H3Z" fill="#e0e0e0"/><path d="M3 9 a3 3.4 0 0 1 6 0 a3 3.4 0 0 1 -6 0z" fill="#444" transform="translate(-2,0)"/></svg>
<div style="position:absolute;left:1146px;top:173px;width:38px;height:16px;background:#2b2b2b;"></div>
<div style="position:absolute;top:174.5px;line-height:15px;font-size:11.5px;color:#d6d6d6;white-space:nowrap;letter-spacing:-0.47px;left:1151.5px;">1.00</div>
<div style="position:absolute;left:1187px;top:172px;width:18px;height:18px;background:#5d9cb8;"></div>
<svg style="position:absolute;left:1188.5px;top:172.5px;" width="15" height="18" viewBox="0 0 15 18"><circle cx="7.5" cy="9" r="6.4" fill="#4fb9cc" stroke="#1f3a48" stroke-width="1"/><path d="M4 9 a1.6 1.8 0 1 1 0 0.1 M8 7.5 V10.5 M8 9 H10.5 M10.5 7.5 V10.5" stroke="#1f3a48" stroke-width="0.9" fill="none"/></svg>
<div style="position:absolute;left:1207px;top:172px;width:199px;height:18px;background:#5d5d5d;border-radius:2px;"></div>
<div style="position:absolute;left:1386px;top:172px;width:1px;height:18px;background:#525252;"></div>
<div style="position:absolute;top:174.5px;line-height:15px;font-size:11.5px;color:#d6d6d6;white-space:nowrap;letter-spacing:-0.65px;left:1211.0px;">ACES 1.0 SDR-video (sRGB)</div>
<svg style="position:absolute;left:1392px;top:179px;" width="10" height="5" viewBox="0 0 10 5"><path d="M0 0 H10 L5 5Z" fill="#d6d6d6"/></svg>
<div style="position:absolute;top:191.8px;line-height:14px;font-size:10.5px;color:#e4e4e4;white-space:nowrap;text-shadow:0 0 1px #333,0 0 1px #333;font-weight:bold;left:383.0px;">Verts:</div>
<div style="position:absolute;top:191.8px;line-height:14px;font-size:10.5px;color:#e4e4e4;white-space:nowrap;text-shadow:0 0 1px #333,0 0 1px #333;font-weight:bold;right:1422.5px;">52921</div>
<div style="position:absolute;top:191.8px;line-height:14px;font-size:10.5px;color:#e4e4e4;white-space:nowrap;text-shadow:0 0 1px #333,0 0 1px #333;font-weight:bold;left:556.5px;">0</div>
<div style="position:absolute;top:191.8px;line-height:14px;font-size:10.5px;color:#e4e4e4;white-space:nowrap;text-shadow:0 0 1px #333,0 0 1px #333;font-weight:bold;left:621.5px;">0</div>
<div style="position:absolute;top:211.8px;line-height:14px;font-size:10.5px;color:#e4e4e4;white-space:nowrap;text-shadow:0 0 1px #333,0 0 1px #333;font-weight:bold;left:383.0px;">Edges:</div>
<div style="position:absolute;top:211.8px;line-height:14px;font-size:10.5px;color:#e4e4e4;white-space:nowrap;text-shadow:0 0 1px #333,0 0 1px #333;font-weight:bold;right:1422.5px;">105861</div>
<div style="position:absolute;top:211.8px;line-height:14px;font-size:10.5px;color:#e4e4e4;white-space:nowrap;text-shadow:0 0 1px #333,0 0 1px #333;font-weight:bold;left:556.5px;">0</div>
<div style="position:absolute;top:211.8px;line-height:14px;font-size:10.5px;color:#e4e4e4;white-space:nowrap;text-shadow:0 0 1px #333,0 0 1px #333;font-weight:bold;left:621.5px;">0</div>
<div style="position:absolute;top:231.8px;line-height:14px;font-size:10.5px;color:#e4e4e4;white-space:nowrap;text-shadow:0 0 1px #333,0 0 1px #333;font-weight:bold;left:383.0px;">Faces:</div>
<div style="position:absolute;top:231.8px;line-height:14px;font-size:10.5px;color:#e4e4e4;white-space:nowrap;text-shadow:0 0 1px #333,0 0 1px #333;font-weight:bold;right:1422.5px;">55322</div>
<div style="position:absolute;top:231.8px;line-height:14px;font-size:10.5px;color:#e4e4e4;white-space:nowrap;text-shadow:0 0 1px #333,0 0 1px #333;font-weight:bold;left:556.5px;">0</div>
<div style="position:absolute;top:231.8px;line-height:14px;font-size:10.5px;color:#e4e4e4;white-space:nowrap;text-shadow:0 0 1px #333,0 0 1px #333;font-weight:bold;left:621.5px;">0</div>
<div style="position:absolute;top:251.8px;line-height:14px;font-size:10.5px;color:#e4e4e4;white-space:nowrap;text-shadow:0 0 1px #333,0 0 1px #333;font-weight:bold;left:383.0px;">Tris:</div>
<div style="position:absolute;top:251.8px;line-height:14px;font-size:10.5px;color:#e4e4e4;white-space:nowrap;text-shadow:0 0 1px #333,0 0 1px #333;font-weight:bold;right:1422.5px;">79517</div>
<div style="position:absolute;top:251.8px;line-height:14px;font-size:10.5px;color:#e4e4e4;white-space:nowrap;text-shadow:0 0 1px #333,0 0 1px #333;font-weight:bold;left:556.5px;">0</div>
<div style="position:absolute;top:251.8px;line-height:14px;font-size:10.5px;color:#e4e4e4;white-space:nowrap;text-shadow:0 0 1px #333,0 0 1px #333;font-weight:bold;left:621.5px;">0</div>
<div style="position:absolute;top:271.8px;line-height:14px;font-size:10.5px;color:#e4e4e4;white-space:nowrap;text-shadow:0 0 1px #333,0 0 1px #333;font-weight:bold;left:383.0px;">UVs:</div>
<div style="position:absolute;top:271.8px;line-height:14px;font-size:10.5px;color:#e4e4e4;white-space:nowrap;text-shadow:0 0 1px #333,0 0 1px #333;font-weight:bold;right:1422.5px;">55378</div>
<div style="position:absolute;top:271.8px;line-height:14px;font-size:10.5px;color:#e4e4e4;white-space:nowrap;text-shadow:0 0 1px #333,0 0 1px #333;font-weight:bold;left:556.5px;">0</div>
<div style="position:absolute;top:271.8px;line-height:14px;font-size:10.5px;color:#e4e4e4;white-space:nowrap;text-shadow:0 0 1px #333,0 0 1px #333;font-weight:bold;left:621.5px;">0</div>
<div style="position:absolute;top:905.8px;line-height:15px;font-size:11px;color:#f0f0f0;white-space:nowrap;letter-spacing:-0.19px;text-shadow:0 0 1px #333,0 0 1px #333;font-weight:bold;left:979.0px;">persp</div>
<svg style="position:absolute;left:388px;top:874px;" width="24" height="30" viewBox="0 0 24 30"><path d="M7 24 V5" stroke="#38d838" stroke-width="1.2"/><path d="M7 24 H18" stroke="#e03030" stroke-width="1.2"/><path d="M7 24 L11 27" stroke="#3030e0" stroke-width="1.4"/><text x="4" y="6" font-size="7" fill="#38d838" font-family="Liberation Sans">y</text><text x="18" y="23" font-size="7" fill="#e03030" font-family="Liberation Sans">x</text><text x="9" y="31" font-size="7" fill="#3a3af0" font-family="Liberation Sans">z</text></svg>
<!-- p_char -->
<svg style="position:absolute;left:368px;top:191px;overflow:hidden" width="1267" height="733" viewBox="368 191 1267 733"><defs><linearGradient id="legg" x1="0" x2="1"><stop offset="0" stop-color="#0c0c18"/><stop offset=".5" stop-color="#06060c"/><stop offset="1" stop-color="#0a0a14"/></linearGradient><filter id="bl"><feGaussianBlur stdDeviation="0.6"/></filter><filter id="bl2"><feGaussianBlur stdDeviation="1.5"/></filter></defs>
<path d="M786.0 469.0 L767.0 481.0 L751.0 491.0 L734.6 503.3 L730.5 511.5 L740.7 513.8 L755.0 507.0 L767.0 501.0 L768.0 506.5 L773.0 509.0 L779.4 507.4 L787.6 497.0 L797.8 491.0 L802.0 484.0 L795.0 478.0Z" fill="#d49b78"/>
<path d="M767.0 501.0 L768.0 506.5 L773.0 509.0 L779.4 507.4 L787.6 497.0 L780.0 495.0Z" fill="#b87f62"/>
<path d="M1204.0 444.0 L1219.0 446.3 L1233.4 454.5 L1245.6 464.7 L1249.0 471.8 L1241.5 472.8 L1233.0 469.0 L1225.0 464.7 L1211.0 458.5 L1202.0 452.0Z" fill="#d49b78"/>
<path d="M1225.0 464.7 L1233.0 469.0 L1241.5 472.8 L1249.0 471.8 L1240.0 466.0Z" fill="#c0866a"/>
<path d="M950.5 339.3 L936.0 346.5 L921.0 355.0 L905.7 363.8 L887.4 372.0 L879.0 381.0 L863.0 393.3 L846.6 403.5 L830.0 415.7 L814.0 430.0 L801.8 442.0 L789.6 458.5 L784.5 466.6 L790.0 474.0 L795.7 481.0 L806.0 486.0 L814.0 481.0 L818.0 477.0 L830.0 474.8 L846.6 468.7 L863.0 458.5 L875.0 450.0 L889.4 440.0 L903.7 430.0 L924.0 421.8 L940.0 415.7 L950.0 420.0 L960.0 380.0Z" fill="#05050b"/>
<path d="M1072.4 338.3 L1092.8 338.3 L1105.0 347.0 L1117.2 356.7 L1131.5 363.8 L1145.8 377.0 L1160.0 383.2 L1176.3 393.3 L1192.6 409.6 L1204.9 423.9 L1215.0 440.2 L1208.9 446.3 L1200.8 451.4 L1192.6 446.3 L1180.4 442.2 L1164.0 440.2 L1151.9 434.0 L1135.6 426.0 L1119.3 417.8 L1105.0 411.7 L1098.0 403.0 L1080.0 380.0Z" fill="#05050b"/>
<path d="M994.0 318.0 L985.0 328.0 L974.0 337.0 L962.0 338.0 L950.5 339.3 L946.0 360.0 L944.4 430.0 L947.5 462.6 L947.9 480.0 L950.0 500.4 L955.0 508.5 L948.0 518.0 L942.8 526.9 L941.8 541.0 L943.8 565.6 L941.8 581.9 L948.9 590.0 L958.0 594.0 L959.0 622.6 L965.2 655.2 L967.2 675.6 L965.2 700.0 L963.8 742.0 L966.0 765.0 L972.8 785.6 L974.6 821.7 L983.6 850.6 L989.0 868.0 L994.5 883.0 L1001.0 889.0 L1009.0 892.0 L1024.0 891.0 L1037.8 886.7 L1040.0 876.0 L1039.6 865.0 L1041.4 857.8 L1046.0 866.0 L1052.0 875.8 L1062.0 879.5 L1074.0 881.0 L1084.0 876.0 L1090.0 868.6 L1089.0 858.0 L1084.7 847.0 L1076.0 832.0 L1066.7 818.0 L1070.0 792.8 L1072.0 742.0 L1070.0 702.5 L1075.2 675.6 L1083.4 655.2 L1093.6 626.7 L1098.7 602.2 L1096.6 581.9 L1103.7 579.8 L1112.9 575.8 L1111.9 551.3 L1105.8 528.9 L1111.9 524.8 L1103.7 500.4 L1098.9 474.8 L1098.9 442.2 L1098.0 403.0 L1097.0 380.0 L1092.8 338.3 L1078.0 335.0 L1063.0 330.0 L1052.0 322.0 L1040.0 330.0 L1015.0 330.0Z" fill="#05050b"/>
<g filter="url(#bl2)" opacity=".4"><path d="M958 352 L975 345 L990 380 L985 410 L968 395Z" fill="#2a2a3a"/><path d="M1080 345 L1095 350 L1090 380 L1078 370Z" fill="#26263a"/><path d="M845 412 L880 392 L890 402 L852 428Z" fill="#1c1c2e"/><path d="M820 450 L850 430 L860 440 L828 462Z" fill="#1a1a2a"/><path d="M1120 370 L1150 390 L1145 400 L1115 382Z" fill="#151526"/><path d="M1003 470 L1030 468 L1030 520 L1005 520Z" fill="#12121f"/></g>
<path d="M959.0 600.0 L1098.0 600.0 L1083.0 655.0 L1071.0 702.0 L1072.0 742.0 L1068.0 800.0 L1040.0 860.0 L1039.0 800.0 L1030.0 720.0 L1022.0 800.0 L1000.0 860.0 L975.0 822.0 L964.0 742.0 L967.0 676.0Z" fill="#090a16" opacity=".9" filter="url(#bl2)"/>
<path d="M965.5 676.0 L969.0 672.0 L972.0 700.0 L973.5 742.0 L977.0 790.0 L978.5 826.0 L974.8 822.0 L972.8 785.6 L966.0 765.0 L963.8 742.0 L965.2 700.0Z" fill="#3b5078"/>
<path d="M969.0 672.0 L972.5 675.0 L975.0 742.0 L979.5 790.0 L980.5 828.0 L978.5 826.0 L977.0 790.0 L973.5 742.0 L972.0 700.0Z" fill="#2a3a5c"/>
<path d="M953 536 L1105 530 L1108 556 L955 566Z" fill="#0e0e14"/>
<g filter="url(#bl)"><rect x="990" y="540" width="20" height="11" fill="#24242e"/><rect x="1012" y="539" width="9" height="14" fill="#2a2a34"/><rect x="1022" y="541" width="16" height="10" fill="#1d1d26"/><rect x="1042" y="540" width="14" height="5" fill="#4a3a34"/><circle cx="1017" cy="566" r="2" fill="#30303a"/><circle cx="1006" cy="563" r="1.6" fill="#2c2c36"/></g>
<g filter="url(#bl2)" opacity=".6"><path d="M944 525 L962 520 L966 580 L946 584Z" fill="#1a1a22"/><path d="M1092 530 L1110 528 L1112 574 L1096 578Z" fill="#1c1c24"/></g>
<g filter="url(#bl2)"><path d="M996 828 L1006 824 L1012 850 L1000 856Z" fill="#3a3a48" opacity=".8"/><path d="M1044 790 L1052 790 L1054 830 L1046 832Z" fill="#34344a" opacity=".8"/><path d="M1062 850 L1080 858 L1078 870 L1060 866Z" fill="#2a2a3a" opacity=".8"/><path d="M1010 868 L1030 872 L1028 884 L1010 882Z" fill="#222236" opacity=".8"/></g>
<path d="M1009.0 266.0 L1030.0 262.0 L1060.0 261.0 L1062.5 281.5 L1061.0 300.0 L1058.5 312.0 L1054.0 324.0 L1045.0 333.0 L1036.0 333.0 L1026.0 327.0 L1016.0 318.0 L1009.0 306.0 L1004.0 299.0 L997.0 296.0 L994.5 285.0 L999.0 274.0Z" fill="#b28262"/>
<path d="M1040 262 L1060 261 L1062.500 281.500 L1061 300 L1056 300 L1052 280Z" fill="#c49474" opacity=".8"/>
<path d="M996 283 Q1001 281 1004 287 L1006 298 Q1000 299 997 294Z" fill="#b07c5e"/>
<path d="M1005 305 L1040 335 L1050 330 L1052 340 L1000 340 L995 318Z" fill="#0a0808"/>
<path d="M993 280 L1009 266 L1013 278 L1008 288 L1004 284 L996 284Z" fill="#2e221c"/>
<g filter="url(#bl)"><path d="M1007 296 L1012 306 L1020 314 L1028 313 L1034 307 L1044 305 L1054 308 L1059 303 L1058.500 314 L1054 325 L1045 334 L1036 334 L1026 328 L1015 318 L1008 306Z" fill="#33241b"/><path d="M1012 290 L1016 304 L1012 306 L1008 298Z" fill="#5a4232"/></g>
<path d="M1042.6 213.4 L1030.0 215.5 L1008.9 220.6 L995.0 231.0 L983.0 242.6 L983.2 252.0 L984.3 259.5 L987.0 269.0 L990.7 277.6 L996.0 280.2 L1002.0 273.0 L1008.9 266.0 L1030.0 259.5 L1053.7 256.5 L1060.8 258.0 L1067.2 264.6 L1068.2 250.0 L1068.5 228.3 L1066.0 223.2 L1055.0 216.0Z" fill="#07070d"/>
<path d="M999.800 256.500 Q1030 247 1060.800 249.500 L1066.500 263.500 Q1036 258.500 1006 269 L999 276 Z" fill="#17171b"/>
<path d="M1004 262 Q1032 252.500 1062 254.500" fill="none" stroke="#3a3a40" stroke-width="1.400" filter="url(#bl)"/>
<g filter="url(#bl2)" opacity=".5"><path d="M1000 232 L1040 218 L1060 224 L1056 236 L1010 246Z" fill="#1a1a2a"/></g>
<rect x="1000" y="256" width="3" height="6" fill="#6a5a30"/>
<g transform="rotate(-22 932 356)"><path d="M911 356 Q912 348 932 347.500 Q951 347 953 352 Q954 362 934 364.500 Q913 366 911 356Z" fill="#2a1c08" stroke="#d6a030" stroke-width="2.200"/><ellipse cx="929" cy="356" rx="9" ry="4" fill="#120c04" stroke="#c89428" stroke-width="1.600"/><path d="M941 352 h5 q3 3 0 6 h-5z" fill="none" stroke="#d6a030" stroke-width="1.300"/></g>
<path d="M1093 341 L1099 344 L1112 358 L1119 361 L1116 356 L1104 343Z" fill="#c89428"/>
<rect x="1069.5" y="394.5" width="30" height="9" fill="#c4903c"/><rect x="1070.5" y="395.5" width="28" height="7" fill="none" stroke="#6a4a18" stroke-width="0.6"/><text x="1084.5" y="402" font-family="Liberation Sans" font-weight="bold" font-size="6.5" text-anchor="middle" fill="#3a2808" textLength="24">POLICE</text>
<g fill="none" stroke="#f2ee7a" stroke-width="1.2"><path d="M1005 337 Q1014 352 1017 368"/><path d="M1013 335 Q1021 350 1023 367"/><path d="M1048 334 Q1060 345 1063 362"/><path d="M1054 332 Q1066 343 1068 358"/></g>
<g fill="none" stroke="#2c1458" stroke-width="1.1"><path d="M1025 290 V880"/><path d="M1053.5 560 V870"/><path d="M994 565 V870"/><path d="M1025 440 L1000 390 L945 385 L800 480"/><path d="M1025 440 L1045 385 L1095 380 L1210 445"/><path d="M1025 330 L1040 298"/></g>
<g fill="none" stroke="#7fd6f2" stroke-width="1.2">
<path d="M1000 249.500 L1014 249 L1028 248.500"/><path d="M1060 249 H1066"/>
<path d="M990 454 Q1040 458 1088 449"/>
<path d="M1009 504.4 Q1050 503 1087.4 497.3"/>
<path d="M1005 533.4 Q1042 544 1079.3 530"/>
<path d="M1026 561.5 Q1070 566 1084.4 546"/>
<path d="M937 337 Q948 338 957 352 Q967 368 975 387"/>
<path d="M1086.7 336.3 Q1100 328 1109 340 Q1114 356 1107 367 Q1103 375 1097.9 381"/>
<path d="M880 416.7 Q889 426 891.4 439"/>
<path d="M1156 383 Q1167 397 1155 412 Q1147 422 1135.6 425"/>
<ellipse cx="792.7" cy="474.5" rx="24" ry="4.5" transform="rotate(59 792.7 474.5)"/>
<ellipse cx="1206" cy="444" rx="13" ry="18"/>
</g>
<g fill="none" stroke="#7fd6f2" stroke-width="1"><circle cx="744" cy="495" r="2.5"/><circle cx="758" cy="484" r="2.5"/><circle cx="735" cy="503" r="2.5"/><circle cx="781" cy="504" r="2.5"/><circle cx="1239" cy="462" r="2.5"/><circle cx="1246" cy="467" r="2.5"/><path d="M788 470 L794 490"/></g>
<g fill="none" stroke="#2a1066" stroke-width="1.3"><path d="M790 472 L742 503 M790 474 L748 507 M791 470 L745 497"/><path d="M1209 448 L1244 468 M1211 446 L1246 465"/></g>
<g fill="none" stroke="#f2ee7a" stroke-width="1.1"><ellipse cx="756" cy="496" rx="44" ry="6.5" transform="rotate(-35.5 756 496)"/><path d="M1233 452 Q1252 462 1261 476 Q1246 474 1233 452Z"/><circle cx="967.6" cy="237.6" r="4"/><circle cx="968" cy="255.3" r="4"/><circle cx="968" cy="324.6" r="4"/></g>
<g fill="none" stroke="#f2ee7a" stroke-width="1.2"><path d="M957 509 Q944 500 932 518 Q914 538 925 548 Q936 554 948 549"/><path d="M956 517 Q938 516 934 533 Q931 552 945 563"/><path d="M951 504 Q958 506 961 514"/></g>
<g fill="none" stroke="#2ee23a" stroke-width="1.4"><path d="M938 547 L946 550 L940 552 L950 551"/><path d="M1042 557 L1052 552 L1048 558 L1062 554 L1056 560 L1074 556 L1066 559"/></g>
<rect x="950" y="594" width="8" height="4.5" fill="#2a2ae0"/>
<path d="M905.7 352.5 v17 M897.2 360.5 h17" stroke="#2020e8" stroke-width="2"/>
<path d="M1126 345.5 v17 M1117.5 353.5 h17" stroke="#2020e8" stroke-width="2"/>
<rect x="1068.5" y="267.5" width="20" height="55.5" fill="#060606" stroke="#f2ee7a" stroke-width="1.2"/>
<rect x="1091" y="267" width="20" height="55.5" fill="none" stroke="#f2ee7a" stroke-width="1.2"/>
<g fill="#c8c8a0"><rect x="1072" y="272" width="3" height="3"/><rect x="1082" y="272" width="3" height="3"/><rect x="1072" y="283" width="3" height="3"/><rect x="1082" y="283" width="3" height="3"/><rect x="1072" y="294" width="2.5" height="2.5"/><rect x="1082" y="294" width="2.5" height="2.5"/><rect x="1077" y="299" width="3" height="3"/><rect x="1072" y="312" width="3.5" height="3.5"/><rect x="1081" y="312" width="3.5" height="3.5"/><rect x="1072" y="319" width="2" height="2"/><rect x="1076" y="319" width="2" height="2"/></g>
<path d="M1074 281.5 H1096" stroke="#f6f2a0" stroke-width="1.6"/>
<g fill="none" stroke="#2ee23a" stroke-width="1.2"><path d="M1094 272 q3 -2.5 6 0 q3 2.5 7 0"/><circle cx="1096" cy="281.5" r="2.6"/><circle cx="1104" cy="281.5" r="2.6"/><path d="M1099.5 293 l-3.5 7 q3.5 3 7 0z"/><path d="M1093 309 q3 5 7 2.5 q4 2.500 7 -2.500 M1094 313 q6 5 12 0"/></g><rect x="1105" y="313" width="3" height="5" fill="#2020e8"/>
<circle cx="1028" cy="277" r="3.2" fill="#e01818"/><circle cx="1036" cy="276" r="3.2" fill="#e01818"/><circle cx="1050" cy="276" r="3.2" fill="#e01818"/><circle cx="1058" cy="277" r="3.2" fill="#e01818"/><circle cx="1031" cy="282" r="4.2" fill="none" stroke="#1ec83a" stroke-width="1.6"/><circle cx="1031" cy="282" r="2" fill="#e01818"/><circle cx="1055" cy="281" r="4.2" fill="none" stroke="#1ec83a" stroke-width="1.6"/><circle cx="1055" cy="281" r="2" fill="#e01818"/><circle cx="1042" cy="276.500" r="2.6" fill="#2ac83a"/><circle cx="1027.9" cy="287.5" r="1.1" fill="#2222d8"/><circle cx="1034.6" cy="289.3" r="1.1" fill="#2222d8"/><circle cx="1020.8" cy="297.7" r="1.1" fill="#2222d8"/><circle cx="1056.6" cy="311.2" r="1.1" fill="#2222d8"/><circle cx="1050.1" cy="291.5" r="1.1" fill="#2222d8"/><circle cx="1040.5" cy="293.4" r="1.1" fill="#2222d8"/><circle cx="1025.3" cy="287.6" r="1.1" fill="#2222d8"/><circle cx="1027.0" cy="315.5" r="1.1" fill="#2222d8"/><circle cx="1052.8" cy="311.4" r="1.1" fill="#2222d8"/><circle cx="1051.6" cy="290.6" r="1.1" fill="#2222d8"/><circle cx="1031.0" cy="305.3" r="1.1" fill="#2222d8"/><circle cx="1048.7" cy="313.1" r="1.1" fill="#2222d8"/><circle cx="1055.0" cy="286.9" r="1.1" fill="#2222d8"/><circle cx="1043.4" cy="306.8" r="1.1" fill="#2222d8"/><circle cx="1039.3" cy="290.0" r="1.1" fill="#2222d8"/><circle cx="1037.9" cy="287.0" r="1.1" fill="#2222d8"/><circle cx="1057.3" cy="313.4" r="1.1" fill="#2222d8"/><circle cx="1041.0" cy="294.2" r="1.1" fill="#2222d8"/><circle cx="1056.2" cy="303.5" r="1.1" fill="#2222d8"/><circle cx="1055.1" cy="312.8" r="1.1" fill="#2222d8"/><circle cx="1039.4" cy="298.1" r="1.1" fill="#2222d8"/><circle cx="1043.2" cy="298.7" r="1.1" fill="#2222d8"/><circle cx="1024.8" cy="294.4" r="1.1" fill="#2222d8"/><circle cx="1052.1" cy="285.5" r="1.1" fill="#2222d8"/><circle cx="1019.9" cy="305.3" r="1.1" fill="#2222d8"/><circle cx="1029.8" cy="302.2" r="1.1" fill="#2222d8"/><ellipse cx="1046" cy="311" rx="7" ry="4" fill="none" stroke="#2ee23a" stroke-width="1.6"/><path d="M1038 321 Q1046 329 1055 320" fill="none" stroke="#2ee23a" stroke-width="1.6"/><path d="M1039 324 Q1046 332 1054 323" fill="none" stroke="#22b030" stroke-width="1.2"/><circle cx="1043" cy="311" r="2" fill="#e01818"/><circle cx="1050" cy="311" r="2" fill="#e01818"/><path d="M1034 312 h5" stroke="#f2ee7a" stroke-width="1.6"/><path d="M1029 288 V330 M1029 312 L1050 286" stroke="#1a1070" stroke-width="1.1" fill="none"/>
<ellipse cx="1024" cy="865.500" rx="100" ry="44.5" fill="none" stroke="#2a56a8" stroke-width="1.1"/>
<g fill="none" stroke="#e02626" stroke-width="1.2"><path d="M973 822 L978 812 L1008 838 L1040 892 L1030 898 L1002 894 L975 860Z"/><path d="M975 860 L985 830 M1002 894 L1010 866 L1030 898"/><path d="M1000 880 Q1010 860 1024 878"/><path d="M1066 815 L1074 813 L1098 864 L1100 878 L1080 892 L1070 884"/><path d="M1040 828 L1066 815 M1074 813 L1082 848 L1100 878 M1060 860 L1082 848"/><path d="M1066 884 Q1076 870 1090 880"/><path d="M1029 897 l3 12 l3 -12"/></g>
<g stroke="#e02626" stroke-width="1.1"><path d="M1163.5 798 V844 M1142.5 824 L1183.5 816 M1155.5 813 L1173.5 829"/></g>
<g stroke="#e02626" stroke-width="1.1"><path d="M1230 783.5 V829.5 M1209 809.5 L1250 801.5 M1222 798.5 L1240 814.5"/></g>
<g stroke="#151515" stroke-width="0.9" fill="none"><path d="M1070 702.5 L1226 802"/><path d="M1072 753 L1160 818"/><path d="M1226 802 l-9 -2 l4 -6z M1160 818 l-9 -2.500 l4.500 -6z"/></g></svg>
<!-- p_channel -->
<div style="position:absolute;left:1647px;top:148.5px;width:257px;height:778px;background:#444444;"></div>
<svg style="position:absolute;left:1841px;top:153px;" width="14" height="14" viewBox="0 0 14 14"><path d="M7 3 L3 11 H11Z" fill="none" stroke="#d0d0d0" stroke-width="1.2"/><circle cx="7" cy="3" r="2.2" fill="#5cc04a"/><circle cx="3" cy="11" r="2.2" fill="#4a6ad8"/><circle cx="11" cy="11" r="2.2" fill="#e04a5a"/></svg>
<svg style="position:absolute;left:1863px;top:153px;" width="15" height="15" viewBox="0 0 15 15"><circle cx="7.5" cy="7.5" r="7" fill="#55b9c6"/><path d="M4 11 V7.5 a3.5 3.5 0 0 1 7 0 V9" fill="none" stroke="#444" stroke-width="2"/></svg>
<svg style="position:absolute;left:1884px;top:152px;" width="14" height="15" viewBox="0 0 14 15"><path d="M1 1 V14 H14" fill="none" stroke="#9a9a9a" stroke-width="1"/><path d="M3 12 L11 3" stroke="#55b9c6" stroke-width="1.6"/><path d="M13 1 L8.500 2 L12 5.500Z" fill="#55b9c6"/></svg>
<div style="position:absolute;top:175.0px;line-height:15px;font-size:11.5px;color:#d6d6d6;white-space:nowrap;letter-spacing:-0.20px;left:1653.0px;">Channels</div>
<div style="position:absolute;top:175.0px;line-height:15px;font-size:11.5px;color:#d6d6d6;white-space:nowrap;letter-spacing:0.05px;left:1716.0px;">Edit</div>
<div style="position:absolute;top:175.0px;line-height:15px;font-size:11.5px;color:#d6d6d6;white-space:nowrap;letter-spacing:0.13px;left:1751.0px;">Object</div>
<div style="position:absolute;top:175.0px;line-height:15px;font-size:11.5px;color:#d6d6d6;white-space:nowrap;letter-spacing:0.06px;left:1800.0px;">Show</div>
<div style="position:absolute;left:1672px;width:200px;top:406px;text-align:center;font-size:11px;line-height:14px;color:#c4c4c4;font-weight:bold;letter-spacing:-0.15px;white-space:nowrap;">Select objects in the scene to view,</div>
<div style="position:absolute;left:1672px;width:200px;top:419px;text-align:center;font-size:11px;line-height:14px;color:#c4c4c4;font-weight:bold;letter-spacing:-0.15px;white-space:nowrap;">edit and set keyframes on channels</div>
<div style="position:absolute;left:1672px;width:200px;top:432px;text-align:center;font-size:11px;line-height:14px;color:#c4c4c4;font-weight:bold;letter-spacing:-0.15px;white-space:nowrap;">(attributes)</div>
<svg style="position:absolute;left:1729px;top:661px;" width="86" height="2" viewBox="0 0 86 2"><path d="M0.0 0.5 H86" stroke="#7a7a7a" stroke-width="1" stroke-dasharray="1 1"/></svg>
<div style="position:absolute;left:1646px;top:671px;width:254px;height:253px;background:#444444;border:1px solid #4e4e4e;"></div>
<div style="position:absolute;left:1647px;top:672px;width:252px;height:17px;background:#373737;"></div>
<div style="position:absolute;left:1647px;top:672px;width:58px;height:17px;background:#444444;border-radius:2px 2px 0 0;"></div>
<div style="position:absolute;left:1708px;top:673px;width:46px;height:16px;background:#3f3f3f;border-radius:2px 2px 0 0;"></div>
<div style="position:absolute;top:674.0px;line-height:15px;font-size:11.5px;color:#e0e0e0;white-space:nowrap;letter-spacing:-0.03px;left:1657.0px;">Display</div>
<div style="position:absolute;top:674.0px;line-height:15px;font-size:11.5px;color:#8a8a8a;white-space:nowrap;letter-spacing:-0.05px;left:1718.0px;">Anim</div>
<div style="position:absolute;top:692.0px;line-height:15px;font-size:11.5px;color:#d6d6d6;white-space:nowrap;letter-spacing:-0.59px;left:1656.0px;">Layers</div>
<div style="position:absolute;top:692.0px;line-height:15px;font-size:11.5px;color:#d6d6d6;white-space:nowrap;letter-spacing:0.34px;left:1702.0px;">Options</div>
<div style="position:absolute;top:692.0px;line-height:15px;font-size:11.5px;color:#d6d6d6;white-space:nowrap;letter-spacing:0.09px;left:1759.0px;">Help</div>
<svg style="position:absolute;left:1803px;top:714px;" width="16" height="12" viewBox="0 0 16 12"><path d="M0 6 L8 1.500 L14 6 L6 10.500Z" fill="#dcdcdc"/><path d="M12.500 11 V4 M10 6.500 L12.500 3.500 L15 6.500" stroke="#55b9c6" stroke-width="1.8" fill="none"/></svg>
<svg style="position:absolute;left:1826px;top:714px;" width="16" height="12" viewBox="0 0 16 12"><path d="M0 6 L8 1.500 L14 6 L6 10.500Z" fill="#dcdcdc"/><path d="M12.500 3 V10 M10 7.500 L12.500 10.500 L15 7.500" stroke="#55b9c6" stroke-width="1.8" fill="none"/></svg>
<svg style="position:absolute;left:1853px;top:713px;" width="16" height="12" viewBox="0 0 16 12"><path d="M0 7 L8 2.500 L14 7 L6 11.500Z" fill="#dcdcdc"/><path d="M12.500 0.500 V6.500 M9.500 3.500 H15.500" stroke="#55b9c6" stroke-width="1.8"/></svg>
<svg style="position:absolute;left:1877px;top:713px;" width="16" height="12" viewBox="0 0 16 12"><path d="M0 7 L8 2.500 L14 7 L6 11.500Z" fill="#dcdcdc"/><circle cx="12" cy="3.500" r="3" fill="#55b9c6"/></svg>
<div style="position:absolute;left:1649px;top:735px;width:247px;height:172px;background:#2b2b2b;"></div>
<div style="position:absolute;left:1653px;top:738.5px;width:19.5px;height:15px;background:#242424;border:1px solid #3a3a3a;border-radius:2px;"></div>
<div style="position:absolute;top:739.5px;line-height:15px;font-size:11.5px;color:#f0f0f0;white-space:nowrap;left:1662.8px;transform:translateX(-50%);">V</div>
<div style="position:absolute;left:1676px;top:738.5px;width:19.5px;height:15px;background:#242424;border:1px solid #3a3a3a;border-radius:2px;"></div>
<div style="position:absolute;top:739.5px;line-height:15px;font-size:11.5px;color:#f0f0f0;white-space:nowrap;left:1685.8px;transform:translateX(-50%);">P</div>
<div style="position:absolute;left:1699px;top:738.5px;width:19.5px;height:15px;background:#242424;border:1px solid #3a3a3a;border-radius:2px;"></div>
<svg style="position:absolute;left:1722px;top:738px;" width="17" height="16" viewBox="0 0 17 16"><path d="M1 14.500 L15.200 1.400 V14.500" fill="none" stroke="#e0e0e0" stroke-width="1"/></svg>
<div style="position:absolute;top:739.5px;line-height:15px;font-size:11.5px;color:#f0f0f0;white-space:nowrap;left:1742.0px;">Hi</div>
<div style="position:absolute;left:1649px;top:908px;width:247px;height:13px;background:#3d3d3d;"></div>
<svg style="position:absolute;left:1652px;top:909.5px;" width="6" height="10" viewBox="0 0 6 10"><path d="M6 0 L0 5 L6 10Z" fill="#cfcfcf"/></svg>
<div style="position:absolute;left:1662px;top:909.5px;width:154px;height:10px;background:#5d5d5d;border-radius:5px;"></div>
<svg style="position:absolute;left:1886px;top:909.5px;" width="6" height="10" viewBox="0 0 6 10"><path d="M0 0 L6 5 L0 10Z" fill="#cfcfcf"/></svg>
<div style="position:absolute;left:1903.5px;top:148.5px;width:16.5px;height:778px;background:#3a3a3a;"></div>
<div style="position:absolute;left:1903.5px;top:152px;width:17px;height:151px;background:#444444;border-radius:0 2px 2px 0;"></div>
<div style="position:absolute;left:1917.5px;top:160px;transform-origin:0 0;transform:rotate(90deg);font-size:11.5px;line-height:14px;height:14px;white-space:nowrap;color:#e0e0e0;letter-spacing:-0.09px;">Channel Box / Layer Editor</div>
<div style="position:absolute;left:1904.5px;top:306px;width:17px;height:103px;background:#3f3f3f;border-radius:0 2px 2px 0;"></div>
<div style="position:absolute;left:1917.5px;top:318px;transform-origin:0 0;transform:rotate(90deg);font-size:11.5px;line-height:14px;height:14px;white-space:nowrap;color:#9a9a9a;letter-spacing:0.25px;">Attribute Editor</div>
<div style="position:absolute;left:1904.5px;top:411px;width:17px;height:110px;background:#3f3f3f;border-radius:0 2px 2px 0;"></div>
<div style="position:absolute;left:1917.5px;top:423px;transform-origin:0 0;transform:rotate(90deg);font-size:11.5px;line-height:14px;height:14px;white-space:nowrap;color:#9a9a9a;letter-spacing:0.30px;">Modeling Toolkit</div>
<div style="position:absolute;left:1904.5px;top:523px;width:17px;height:49px;background:#3f3f3f;border-radius:0 2px 2px 0;"></div>
<div style="position:absolute;left:1917.5px;top:535px;transform-origin:0 0;transform:rotate(90deg);font-size:11.5px;line-height:14px;height:14px;white-space:nowrap;color:#9a9a9a;letter-spacing:-1.10px;">XGen</div>
<div style="position:absolute;left:1904.5px;top:574px;width:17px;height:177px;background:#3f3f3f;border-radius:0 2px 2px 0;"></div>
<div style="position:absolute;left:1917.5px;top:585px;transform-origin:0 0;transform:rotate(90deg);font-size:11.5px;line-height:14px;height:14px;white-space:nowrap;color:#9a9a9a;letter-spacing:-0.08px;">XGen Interactive Groom Editor</div>
<div style="position:absolute;left:1904.5px;top:753px;width:17px;height:72px;background:#3f3f3f;border-radius:0 2px 2px 0;"></div>
<div style="position:absolute;left:1917.5px;top:765px;transform-origin:0 0;transform:rotate(90deg);font-size:11.5px;line-height:14px;height:14px;white-space:nowrap;color:#9a9a9a;letter-spacing:-0.52px;">Human IK</div>
<!-- p_time -->
<div style="position:absolute;left:0px;top:926px;width:1920px;height:114px;background:#444444;"></div>
<div style="position:absolute;left:0px;top:929.5px;width:1920px;height:1.5px;background:#3e3e3e;"></div>
<svg style="position:absolute;left:3px;top:932px;" width="4" height="106" viewBox="0 0 4 106"><path d="M0.5 0.0 V106" stroke="#7a7a7a" stroke-width="1" stroke-dasharray="1 1"/><path d="M2.5 1.0 V106" stroke="#7a7a7a" stroke-width="1" stroke-dasharray="1 1"/></svg>
<div style="position:absolute;left:13.5px;top:935px;width:1612px;height:30px;background:#2f2f2f;"></div>
<div style="position:absolute;left:13.5px;top:935px;width:8px;height:30px;background:#222222;"></div>
<div style="position:absolute;left:21.5px;top:935px;width:49.5px;height:30px;background:#5b5b5b;"></div>
<svg style="position:absolute;left:13.5px;top:935px;" width="1612" height="30" viewBox="0 0 1612 30"><rect x="6.7" y="13.500" width="1.200" height="16.500" fill="#b4b4b4"/><rect x="58.0" y="13.500" width="1.200" height="16.500" fill="#b4b4b4"/><rect x="109.5" y="13.500" width="1.200" height="16.500" fill="#b4b4b4"/><rect x="161.0" y="13.500" width="1.200" height="16.500" fill="#b4b4b4"/><rect x="212.5" y="13.500" width="1.200" height="16.500" fill="#b4b4b4"/><rect x="264.0" y="13.500" width="1.200" height="16.500" fill="#b4b4b4"/><rect x="315.5" y="13.500" width="1.200" height="16.500" fill="#b4b4b4"/><rect x="367.0" y="13.500" width="1.200" height="16.500" fill="#b4b4b4"/><rect x="418.5" y="13.500" width="1.200" height="16.500" fill="#b4b4b4"/><rect x="470.0" y="13.500" width="1.200" height="16.500" fill="#b4b4b4"/><rect x="521.5" y="13.500" width="1.200" height="16.500" fill="#b4b4b4"/><rect x="573.0" y="13.500" width="1.200" height="16.500" fill="#b4b4b4"/><rect x="624.5" y="13.500" width="1.200" height="16.500" fill="#b4b4b4"/><rect x="676.0" y="13.500" width="1.200" height="16.500" fill="#b4b4b4"/><rect x="727.5" y="13.500" width="1.200" height="16.500" fill="#b4b4b4"/><rect x="779.0" y="13.500" width="1.200" height="16.500" fill="#b4b4b4"/><rect x="830.5" y="13.500" width="1.200" height="16.500" fill="#b4b4b4"/><rect x="882.0" y="13.500" width="1.200" height="16.500" fill="#b4b4b4"/><rect x="933.5" y="13.500" width="1.200" height="16.500" fill="#b4b4b4"/><rect x="985.0" y="13.500" width="1.200" height="16.500" fill="#b4b4b4"/><rect x="1036.5" y="13.500" width="1.200" height="16.500" fill="#b4b4b4"/><rect x="1088.0" y="13.500" width="1.200" height="16.500" fill="#b4b4b4"/><rect x="1139.5" y="13.500" width="1.200" height="16.500" fill="#b4b4b4"/><rect x="1191.0" y="13.500" width="1.200" height="16.500" fill="#b4b4b4"/><rect x="1242.5" y="13.500" width="1.200" height="16.500" fill="#b4b4b4"/><rect x="1294.0" y="13.500" width="1.200" height="16.500" fill="#b4b4b4"/><rect x="1345.5" y="13.500" width="1.200" height="16.500" fill="#b4b4b4"/><rect x="1397.0" y="13.500" width="1.200" height="16.500" fill="#b4b4b4"/><rect x="1448.5" y="13.500" width="1.200" height="16.500" fill="#b4b4b4"/><rect x="1500.0" y="13.500" width="1.200" height="16.500" fill="#b4b4b4"/><rect x="1551.5" y="13.500" width="1.200" height="16.500" fill="#b4b4b4"/></svg>
<div style="position:absolute;top:932.5px;line-height:15px;font-size:11.5px;color:#8c8c8c;white-space:nowrap;left:82.6px;">1</div>
<div style="position:absolute;top:932.5px;line-height:15px;font-size:11.5px;color:#8c8c8c;white-space:nowrap;left:134.1px;">2</div>
<div style="position:absolute;top:932.5px;line-height:15px;font-size:11.5px;color:#8c8c8c;white-space:nowrap;left:185.6px;">3</div>
<div style="position:absolute;top:932.5px;line-height:15px;font-size:11.5px;color:#8c8c8c;white-space:nowrap;left:237.1px;">4</div>
<div style="position:absolute;top:932.5px;line-height:15px;font-size:11.5px;color:#8c8c8c;white-space:nowrap;left:288.6px;">5</div>
<div style="position:absolute;top:932.5px;line-height:15px;font-size:11.5px;color:#8c8c8c;white-space:nowrap;left:340.1px;">6</div>
<div style="position:absolute;top:932.5px;line-height:15px;font-size:11.5px;color:#8c8c8c;white-space:nowrap;left:391.6px;">7</div>
<div style="position:absolute;top:932.5px;line-height:15px;font-size:11.5px;color:#8c8c8c;white-space:nowrap;left:443.1px;">8</div>
<div style="position:absolute;top:932.5px;line-height:15px;font-size:11.5px;color:#8c8c8c;white-space:nowrap;left:494.6px;">9</div>
<div style="position:absolute;top:932.5px;line-height:15px;font-size:11.5px;color:#8c8c8c;white-space:nowrap;left:546.1px;">10</div>
<div style="position:absolute;top:932.5px;line-height:15px;font-size:11.5px;color:#8c8c8c;white-space:nowrap;left:597.6px;">11</div>
<div style="position:absolute;top:932.5px;line-height:15px;font-size:11.5px;color:#8c8c8c;white-space:nowrap;left:649.1px;">12</div>
<div style="position:absolute;top:932.5px;line-height:15px;font-size:11.5px;color:#8c8c8c;white-space:nowrap;left:700.6px;">13</div>
<div style="position:absolute;top:932.5px;line-height:15px;font-size:11.5px;color:#8c8c8c;white-space:nowrap;left:752.1px;">14</div>
<div style="position:absolute;top:932.5px;line-height:15px;font-size:11.5px;color:#8c8c8c;white-space:nowrap;left:803.6px;">15</div>
<div style="position:absolute;top:932.5px;line-height:15px;font-size:11.5px;color:#8c8c8c;white-space:nowrap;left:855.1px;">16</div>
<div style="position:absolute;top:932.5px;line-height:15px;font-size:11.5px;color:#8c8c8c;white-space:nowrap;left:906.6px;">17</div>
<div style="position:absolute;top:932.5px;line-height:15px;font-size:11.5px;color:#8c8c8c;white-space:nowrap;left:958.1px;">18</div>
<div style="position:absolute;top:932.5px;line-height:15px;font-size:11.5px;color:#8c8c8c;white-space:nowrap;left:1009.6px;">19</div>
<div style="position:absolute;top:932.5px;line-height:15px;font-size:11.5px;color:#8c8c8c;white-space:nowrap;left:1061.1px;">20</div>
<div style="position:absolute;top:932.5px;line-height:15px;font-size:11.5px;color:#8c8c8c;white-space:nowrap;left:1112.6px;">21</div>
<div style="position:absolute;top:932.5px;line-height:15px;font-size:11.5px;color:#8c8c8c;white-space:nowrap;left:1164.1px;">22</div>
<div style="position:absolute;top:932.5px;line-height:15px;font-size:11.5px;color:#8c8c8c;white-space:nowrap;left:1215.6px;">23</div>
<div style="position:absolute;top:932.5px;line-height:15px;font-size:11.5px;color:#8c8c8c;white-space:nowrap;left:1267.1px;">24</div>
<div style="position:absolute;top:932.5px;line-height:15px;font-size:11.5px;color:#8c8c8c;white-space:nowrap;left:1318.6px;">25</div>
<div style="position:absolute;top:932.5px;line-height:15px;font-size:11.5px;color:#8c8c8c;white-space:nowrap;left:1370.1px;">26</div>
<div style="position:absolute;top:932.5px;line-height:15px;font-size:11.5px;color:#8c8c8c;white-space:nowrap;left:1421.6px;">27</div>
<div style="position:absolute;top:932.5px;line-height:15px;font-size:11.5px;color:#8c8c8c;white-space:nowrap;left:1473.1px;">28</div>
<div style="position:absolute;top:932.5px;line-height:15px;font-size:11.5px;color:#8c8c8c;white-space:nowrap;left:1524.6px;">29</div>
<div style="position:absolute;top:932.5px;line-height:15px;font-size:11.5px;color:#8c8c8c;white-space:nowrap;left:1576.1px;">30</div>
<div style="position:absolute;top:932.5px;line-height:15px;font-size:11.5px;color:#808080;white-space:nowrap;left:31.5px;">0</div>
<div style="position:absolute;top:950.0px;line-height:15px;font-size:11.5px;color:#f0f0f0;white-space:nowrap;left:31.5px;">0</div>
<div style="position:absolute;left:1632.5px;top:941px;width:87px;height:17.5px;background:#2b2b2b;"></div>
<div style="position:absolute;top:944.0px;line-height:15px;font-size:11.5px;color:#e6e6e6;white-space:nowrap;left:1637.0px;">0</div>
<svg style="position:absolute;left:1730px;top:941.5px;" width="17" height="14.5" viewBox="0 0 17 14.5"><rect x="0" y="0.500" width="2" height="13.500" fill="#cfcfcf"/><path d="M3 7.250 L9.5 0.500 V14Z" fill="#cfcfcf"/><path d="M9.5 7.250 L16.5 0.500 V14Z" fill="#cfcfcf"/></svg>
<svg style="position:absolute;left:1755px;top:941.5px;" width="13" height="14.5" viewBox="0 0 13 14.5"><rect x="0" y="0.500" width="2" height="13.500" fill="#cfcfcf"/><path d="M3 7.250 L12.5 0.500 V14Z" fill="#cfcfcf"/></svg>
<svg style="position:absolute;left:1777px;top:941.5px;" width="14" height="14.5" viewBox="0 0 14 14.5"><rect x="0" y="-1" width="2.600" height="16.500" fill="#e0864a"/><path d="M4 7.250 L13 0.500 V14Z" fill="#cfcfcf"/></svg>
<svg style="position:absolute;left:1800px;top:941.5px;" width="14" height="14.5" viewBox="0 0 14 14.5"><path d="M0 7.250 L13.5 0.500 V14Z" fill="#cfcfcf"/></svg>
<svg style="position:absolute;left:1823.5px;top:941.5px;" width="14" height="14.5" viewBox="0 0 14 14.5"><path d="M13.5 7.250 L0 0.500 V14Z" fill="#cfcfcf"/></svg>
<svg style="position:absolute;left:1847px;top:941.5px;" width="14" height="14.5" viewBox="0 0 14 14.5"><path d="M9 7.250 L0 0.500 V14Z" fill="#cfcfcf"/><rect x="10.400" y="-1" width="2.600" height="16.500" fill="#e0864a"/></svg>
<svg style="position:absolute;left:1870px;top:941.5px;" width="13" height="14.5" viewBox="0 0 13 14.5"><path d="M9.5 7.250 L0 0.500 V14Z" fill="#cfcfcf"/><rect x="10.500" y="0.500" width="2" height="13.500" fill="#cfcfcf"/></svg>
<svg style="position:absolute;left:1891px;top:941.5px;" width="17" height="14.5" viewBox="0 0 17 14.5"><path d="M7 7.250 L0.5 0.500 V14Z" fill="#cfcfcf"/><path d="M13.5 7.250 L7 0.500 V14Z" fill="#cfcfcf"/><rect x="14.500" y="0.500" width="2" height="13.500" fill="#cfcfcf"/></svg>
<div style="position:absolute;left:0px;top:968px;width:1920px;height:2.5px;background:#3d3d3d;"></div>
<div style="position:absolute;left:14.5px;top:976.5px;width:87.5px;height:24px;background:#2b2b2b;"></div>
<div style="position:absolute;top:982.0px;line-height:15px;font-size:11.5px;color:#e6e6e6;white-space:nowrap;left:19.0px;">0</div>
<div style="position:absolute;left:110.5px;top:976.5px;width:87.5px;height:24px;background:#2b2b2b;"></div>
<div style="position:absolute;top:982.0px;line-height:15px;font-size:11.5px;color:#e6e6e6;white-space:nowrap;left:115.0px;">0</div>
<div style="position:absolute;left:210px;top:978.5px;width:910px;height:19.5px;background:#5d5d5d;border-radius:3px;"></div>
<div style="position:absolute;left:214px;top:981.5px;width:14.5px;height:13.5px;background:#9c9c9c;border-radius:3px;"></div>
<div style="position:absolute;left:1102px;top:981.5px;width:14.5px;height:13.5px;background:#9c9c9c;border-radius:3px;"></div>
<div style="position:absolute;top:982.0px;line-height:15px;font-size:11.5px;color:#d0d0d0;white-space:nowrap;left:232.0px;">0</div>
<div style="position:absolute;top:982.0px;line-height:15px;font-size:11.5px;color:#d0d0d0;white-space:nowrap;left:1085.0px;">30</div>
<div style="position:absolute;left:1132px;top:976.5px;width:87.5px;height:24px;background:#2b2b2b;"></div>
<div style="position:absolute;top:982.0px;line-height:15px;font-size:11.5px;color:#e6e6e6;white-space:nowrap;left:1137.0px;">30</div>
<div style="position:absolute;left:1228.5px;top:976.5px;width:87.5px;height:24px;background:#2b2b2b;"></div>
<div style="position:absolute;top:982.0px;line-height:15px;font-size:11.5px;color:#e6e6e6;white-space:nowrap;left:1233.5px;">30</div>
<svg style="position:absolute;left:1320.5px;top:977px;" width="3" height="24" viewBox="0 0 3 24"><path d="M1.5 0 V24" stroke="#8a8a8a" stroke-width="1"/><path d="M1.5 6.0 C2.900 9.600000000000001 2.900 14.399999999999999 1.500 18.0 C0.100 14.399999999999999 0.100 9.600000000000001 1.500 6.0Z" fill="#9a9a9a"/></svg>
<svg style="position:absolute;left:1338.5px;top:977px;" width="14" height="20" viewBox="0 0 14 20"><path d="M0.500 1 H9 V19 L4.750 14.500 L0.500 19Z" fill="#e0864a"/><path d="M6.500 4.500 H13.500 M10 1 V8" stroke="#f0f0f0" stroke-width="1.800"/></svg>
<svg style="position:absolute;left:1364.0px;top:977px;" width="3" height="24" viewBox="0 0 3 24"><path d="M1.5 0 V24" stroke="#8a8a8a" stroke-width="1"/><path d="M1.5 6.0 C2.900 9.600000000000001 2.900 14.399999999999999 1.500 18.0 C0.100 14.399999999999999 0.100 9.600000000000001 1.500 6.0Z" fill="#9a9a9a"/></svg>
<svg style="position:absolute;left:1380px;top:985.5px;" width="10" height="5.5" viewBox="0 0 10 5.5"><path d="M0.600 0.500 H9.400 L5 5Z" fill="none" stroke="#a0a0a0" stroke-width="1"/></svg>
<div style="position:absolute;left:1398px;top:977.5px;width:99px;height:22px;background:#494949;border:1px solid #3b3b3b;border-radius:2px;"></div>
<div style="position:absolute;top:982.0px;line-height:15px;font-size:11.5px;color:#d6d6d6;white-space:nowrap;letter-spacing:-0.21px;left:1403.5px;">No Character Set</div>
<svg style="position:absolute;left:1508.5px;top:985.5px;" width="10" height="5.5" viewBox="0 0 10 5.5"><path d="M0.600 0.500 H9.400 L5 5Z" fill="none" stroke="#a0a0a0" stroke-width="1"/></svg>
<div style="position:absolute;left:1526.5px;top:977.5px;width:100px;height:22px;background:#494949;border:1px solid #3b3b3b;border-radius:2px;"></div>
<div style="position:absolute;top:982.0px;line-height:15px;font-size:11.5px;color:#d6d6d6;white-space:nowrap;letter-spacing:-0.19px;left:1532.0px;">No Anim Layer</div>
<svg style="position:absolute;left:1637.0px;top:977px;" width="3" height="24" viewBox="0 0 3 24"><path d="M1.5 0 V24" stroke="#8a8a8a" stroke-width="1"/><path d="M1.5 6.0 C2.900 9.600000000000001 2.900 14.399999999999999 1.500 18.0 C0.100 14.399999999999999 0.100 9.600000000000001 1.500 6.0Z" fill="#9a9a9a"/></svg>
<div style="position:absolute;left:1652.5px;top:978.5px;width:94px;height:18.5px;background:#5d5d5d;border-radius:2px;"></div>
<div style="position:absolute;left:1727.5px;top:978.5px;width:1px;height:18.5px;background:#525252;"></div>
<div style="position:absolute;top:981.5px;line-height:15px;font-size:11.5px;color:#d6d6d6;white-space:nowrap;letter-spacing:-0.22px;left:1655.5px;">24 fps</div>
<svg style="position:absolute;left:1731.5px;top:985px;" width="11" height="5.5" viewBox="0 0 11 5.5"><path d="M0 0 H11 L5.500 5.500Z" fill="#d6d6d6"/></svg>
<svg style="position:absolute;left:1760px;top:979.5px;" width="18" height="15" viewBox="0 0 18 15"><path d="M3 9 V6.500 a3 3 0 0 1 3 -3 H13.500 M15 6 V8.500 a3 3 0 0 1 -3 3 H4.500" fill="none" stroke="#cfcfcf" stroke-width="2"/><path d="M12.500 0 L17 3.500 L12.500 7Z M5.500 8 L1 11.500 L5.500 15Z" fill="#cfcfcf"/></svg>
<svg style="position:absolute;left:1790px;top:979px;" width="18" height="16" viewBox="0 0 18 16"><rect x="0.800" y="4" width="15" height="11" fill="none" stroke="#e0864a" stroke-width="1.400"/><path d="M1 6.500 H16 M1 12.500 H16" stroke="#e0864a" stroke-width="1.200" stroke-dasharray="1.500 1.200"/><rect x="3" y="7.800" width="3.600" height="3.600" fill="#e8e8e8"/><rect x="7.800" y="7.800" width="3.600" height="3.600" fill="#e8e8e8"/><path d="M12 0 L17.500 3.500 L12 7Z" fill="#e8e8e8"/></svg>
<svg style="position:absolute;left:1819.0px;top:977px;" width="3" height="24" viewBox="0 0 3 24"><path d="M1.5 0 V24" stroke="#8a8a8a" stroke-width="1"/><path d="M1.5 6.0 C2.900 9.600000000000001 2.900 14.399999999999999 1.500 18.0 C0.100 14.399999999999999 0.100 9.600000000000001 1.500 6.0Z" fill="#9a9a9a"/></svg>
<svg style="position:absolute;left:1833.5px;top:980px;" width="18" height="15" viewBox="0 0 18 15"><path d="M0 5 H3.500 L8.500 0.500 V14.500 L3.500 10 H0Z" fill="#cfcfcf"/><path d="M10.500 4.500 a4 4 0 0 1 0 6 M12.500 2.500 a6.500 6.500 0 0 1 0 10 M14.800 0.800 a9 9 0 0 1 0 13.400" fill="none" stroke="#cfcfcf" stroke-width="1.200"/></svg>
<svg style="position:absolute;left:1862.5px;top:979px;" width="18" height="17" viewBox="0 0 18 17"><path d="M2.500 5 A7.500 7.500 0 0 1 15.500 5 M15.500 12 A7.500 7.500 0 0 1 2.500 12" fill="none" stroke="#cfcfcf" stroke-width="1.200"/><path d="M16.500 2 V6 H12.500Z M1.500 15 V11 H5.500Z" fill="#cfcfcf"/><path d="M9 3.500 V13.500 M5.500 8.500 H12.500" stroke="#e0864a" stroke-width="1.600"/></svg>
<svg style="position:absolute;left:1890px;top:977.5px;" width="20" height="20" viewBox="0 0 20 20"><circle cx="5" cy="5" r="2.800" fill="none" stroke="#cfcfcf" stroke-width="1.600" stroke-dasharray="1.400 1"/><circle cx="5" cy="5" r="1.500" fill="none" stroke="#cfcfcf" stroke-width="1"/><circle cx="14.500" cy="4.500" r="2" fill="#e0864a"/><path d="M9 9.500 L13.500 7.500 L16 11 L19 11.500 M13.500 7.500 L12 13 L15 15.500 L14 19.500 M12 13 L9 15.500 L6.500 15" fill="none" stroke="#e0864a" stroke-width="2"/></svg>
<div style="position:absolute;left:0px;top:1006.5px;width:1920px;height:2.5px;background:#3d3d3d;"></div>
<svg style="position:absolute;left:13px;top:1016px;" width="17" height="17" viewBox="0 0 17 17"><circle cx="8.500" cy="8.500" r="8.200" fill="#6fa032"/><circle cx="8.500" cy="8.500" r="6.800" fill="#86b93e"/><path d="M5.800 6.500 a2.800 2.800 0 1 1 4.300 2.300 c-1.200 0.800 -1.500 1.300 -1.500 2.500" fill="none" stroke="#fff" stroke-width="1.800"/><circle cx="8.600" cy="13.500" r="1.100" fill="#fff"/></svg>
<div style="position:absolute;top:1018.2px;line-height:14px;font-size:10px;color:#e4e4e4;white-space:nowrap;letter-spacing:-0.02px;left:38.5px;">Select the menus to appear in the Main Menu Bar</div>
<svg style="position:absolute;left:819px;top:1013px;" width="4" height="22" viewBox="0 0 4 22"><path d="M0.5 0.0 V22" stroke="#7a7a7a" stroke-width="1" stroke-dasharray="1 1"/><path d="M2.5 1.0 V22" stroke="#7a7a7a" stroke-width="1" stroke-dasharray="1 1"/></svg>
<div style="position:absolute;top:1017.5px;line-height:15px;font-size:11.5px;color:#d6d6d6;white-space:nowrap;letter-spacing:-0.88px;left:841.0px;">MEL</div>
<div style="position:absolute;left:876px;top:1013px;width:408.5px;height:21.5px;background:#2b2b2b;"></div>
<svg style="position:absolute;left:1288px;top:1013px;" width="3" height="22" viewBox="0 0 3 22"><path d="M0.5 0.0 V22" stroke="#7a7a7a" stroke-width="1" stroke-dasharray="1 1"/></svg>
<div style="position:absolute;left:1293.5px;top:1013px;width:590px;height:21.5px;background:#2b2b2b;"></div>
<svg style="position:absolute;left:1892.5px;top:1015px;" width="19" height="18" viewBox="0 0 19 18"><rect x="0" y="0" width="19" height="18" fill="#d8d8d8"/><rect x="0" y="0" width="19" height="3.600" fill="#bdbdbd"/><path d="M1 4 H18" stroke="#555" stroke-width="0.800"/><circle cx="2.500" cy="2" r="0.700" fill="#444"/><circle cx="4.800" cy="2" r="0.700" fill="#444"/><circle cx="7.100" cy="2" r="0.700" fill="#444"/><text x="9.500" y="14.500" font-family="Liberation Sans" font-weight="bold" font-size="9.500" text-anchor="middle" fill="#444">{;}</text></svg>
<!-- p_taskbar -->
<div style="position:absolute;left:0px;top:1040px;width:1920px;height:40px;background:#1c3040;background:linear-gradient(90deg,#203a47 0%,#203a47 35%,#1c2c46 70%,#1b2947 100%);"></div>
<svg style="position:absolute;left:15.5px;top:1051.5px;" width="17" height="17" viewBox="0 0 17 17"><path d="M0 2.400 L7.500 1.300 V8 H0Z M8.500 1.150 L17 0 V8 H8.500Z M0 9 H7.500 V15.700 L0 14.600Z M8.500 9 H17 V17 L8.500 15.850Z" fill="#ffffff"/></svg>
<div style="position:absolute;left:48px;top:1040px;width:288px;height:40px;background:#f3f3f3;border-top:1px solid #cfcfcf;"></div>
<svg style="position:absolute;left:60px;top:1052px;" width="17" height="17" viewBox="0 0 17 17"><circle cx="10.500" cy="6.500" r="5.300" fill="none" stroke="#2a2a2a" stroke-width="1.400"/><path d="M6.800 10.300 L0.800 16.200" stroke="#2a2a2a" stroke-width="1.500"/></svg>
<div style="position:absolute;top:1050.2px;line-height:19px;font-size:15px;color:#3c3c3c;white-space:nowrap;letter-spacing:-0.14px;left:88.5px;">Taper ici pour rechercher</div>
<svg style="position:absolute;left:352px;top:1052px;" width="17" height="16" viewBox="0 0 17 16"><rect x="1" y="4" width="10.500" height="8" fill="none" stroke="#fff" stroke-width="1.300"/><path d="M1 1 H11.500 M1 15 H11.500 M14.500 1.500 V4 M14.500 12 V14.500" stroke="#fff" stroke-width="1.300"/><rect x="13.500" y="5.500" width="2.300" height="5" fill="#fff"/></svg>
<svg style="position:absolute;left:399px;top:1048px;" width="24" height="24" viewBox="0 0 24 24"><defs><linearGradient id="eg1" x1="0" y1="0" x2="1" y2="1"><stop offset="0" stop-color="#35c1f1"/><stop offset="1" stop-color="#0c59a4"/></linearGradient><linearGradient id="eg2" x1="0" y1="0" x2="1" y2="0"><stop offset="0" stop-color="#2db4e8"/><stop offset="1" stop-color="#6fdc5a"/></linearGradient></defs><circle cx="12" cy="12" r="11.500" fill="url(#eg1)"/><path d="M1 10 C3 2 12 -1 19 3 C24 6 24 13 20 15 C16 16.500 13 15 14 12 C14.500 10 13 8 10 8 C6 8 2 11 1 15Z" fill="url(#eg2)"/><path d="M8 14 C8 19 13 22 19 19 C15 22.500 6 22 4.500 15 C5 13 7 12 8 14Z" fill="#0a4a8c"/></svg>
<svg style="position:absolute;left:448px;top:1049.5px;" width="23" height="20" viewBox="0 0 23 20"><path d="M0 2 H8 L10 4 H22 V18 H0Z" fill="#e8a317"/><rect x="0" y="6" width="23" height="13" rx="1" fill="#ffd25a"/><rect x="6" y="11" width="11" height="8" fill="#3a8ad6"/><rect x="8.500" y="15" width="6" height="4" fill="#ffd25a"/></svg>
<div style="position:absolute;left:440px;top:1078px;width:40px;height:2px;background:#8fb4de;"></div>
<svg style="position:absolute;left:496.5px;top:1047.5px;" width="23" height="24" viewBox="0 0 23 24"><path d="M7 6 V3.500 a2 2 0 0 1 2 -2 H14 a2 2 0 0 1 2 2 V6" fill="none" stroke="#35a7e0" stroke-width="1.600"/><rect x="0" y="6" width="23" height="18" rx="2.500" fill="#f4f4f4"/><rect x="7" y="10.500" width="4" height="4" fill="#f25022"/><rect x="12" y="10.500" width="4" height="4" fill="#7fba00"/><rect x="7" y="15.500" width="4" height="4" fill="#00a4ef"/><rect x="12" y="15.500" width="4" height="4" fill="#ffb900"/></svg>
<svg style="position:absolute;left:545.5px;top:1048.5px;" width="26" height="23" viewBox="0 0 26 23"><path d="M8 3 L17 0 L26 6 V20 a2 2 0 0 1 -2 2 H8Z" fill="#1a78d2"/><path d="M8 10 L17 5 L26 10 V20 L17 15Z" fill="#3db2f0"/><path d="M8 22 L26 10 V20 a2 2 0 0 1 -2 2Z" fill="#1566c0"/><rect x="0" y="6" width="14" height="14" rx="1.500" fill="#0f5cb5"/><circle cx="7" cy="13" r="3.500" fill="none" stroke="#fff" stroke-width="2"/></svg>
<svg style="position:absolute;left:594.5px;top:1048px;" width="24" height="24" viewBox="0 0 24 24"><ellipse cx="12" cy="12" rx="11.500" ry="12" fill="#e8162a"/><ellipse cx="12" cy="12" rx="5" ry="8.500" fill="#1c2f40"/><path d="M16 2 C21 5 23 9 23 12 C23 16 21 20 16 22 C19.500 19 20.500 15 20.500 12 C20.500 8 19.500 5 16 2Z" fill="#a80e1e"/></svg>
<svg style="position:absolute;left:643.5px;top:1048px;" width="24" height="24" viewBox="0 0 24 24"><circle cx="12" cy="12" r="12" fill="#e33b2e"/><path d="M12 12 L1.600 6 A12 12 0 0 0 12 24Z" fill="#2da94f"/><path d="M12 12 L12 24 A12 12 0 0 0 22.400 6 Z" fill="#fcc31e"/><path d="M1.600 6 A12 12 0 0 1 22.400 6 L12 6Z" fill="#e33b2e"/><circle cx="12" cy="12" r="5.600" fill="#fff"/><circle cx="12" cy="12" r="4.400" fill="#4a8af4"/></svg>
<div style="position:absolute;left:636.5px;top:1078px;width:39px;height:2px;background:#8fb4de;"></div>
<svg style="position:absolute;left:693.5px;top:1048.5px;" width="22.5" height="22" viewBox="0 0 22.5 22"><rect x="0" y="0" width="22.500" height="22" rx="3.500" fill="#e8ebf5"/><text x="11.250" y="16" font-family="Liberation Sans" font-weight="bold" font-size="12.500" text-anchor="middle" fill="#2f7fd8">Ps</text></svg>
<div style="position:absolute;left:730px;top:1040px;width:48.5px;height:40px;background:#3d5564;"></div>
<div style="position:absolute;left:730px;top:1078px;width:48.5px;height:2px;background:#9ec1e8;"></div>
<svg style="position:absolute;left:742px;top:1048px;" width="24" height="24" viewBox="0 0 24 24"><rect x="0" y="0" width="24" height="24" fill="#e4ecec"/><path d="M3 3 H8.500 L12.500 12 L16.500 3 H21.500 V18 H17 V9.500 L14 17 H10.500 L7.500 9.500 V18 H3Z" fill="#1f9aa2"/><path d="M3 3 H8.500 V18 H3Z" fill="#47c4c0"/><text x="17" y="22.500" font-family="Liberation Sans" font-weight="bold" font-size="4.500" text-anchor="middle" fill="#1f9aa2">MAYA</text></svg>
<div style="position:absolute;left:779px;top:1040px;width:48px;height:40px;background:#b8692e;"></div>
<div style="position:absolute;left:779px;top:1078px;width:48px;height:2px;background:#d88a48;"></div>
<svg style="position:absolute;left:791.5px;top:1049px;" width="23" height="22" viewBox="0 0 23 22"><rect x="0" y="0" width="23" height="22" rx="3" fill="#2a7ad8"/><path d="M0 19 L9 8 L15 14 L18.500 10.500 L23 15 V19 a3 3 0 0 1 -3 3 H3 a3 3 0 0 1 -3 -3Z" fill="#5cc0f4"/><path d="M0 19 L9 8 L20 22 H3 a3 3 0 0 1 -3 -3Z" fill="#3a9ae8"/><circle cx="17" cy="5.500" r="2.200" fill="#e8f4ff"/></svg>
<svg style="position:absolute;left:1520.5px;top:1047px;" width="25" height="23" viewBox="0 0 25 23"><circle cx="15" cy="11" r="8" fill="#f5b32a"/><circle cx="10.500" cy="9.500" r="7" fill="#1c2b48"/><path d="M1 10 a4 4 0 0 1 4 -4 a5 5 0 0 1 9 1 a3 3 0 0 1 0 6 H4 a3 3 0 0 1 -3 -3Z" fill="#c9d6e8"/><path d="M11 20 a3 3 0 0 1 2 -5 a4 4 0 0 1 7.500 0.500 a2.500 2.500 0 0 1 0 5 H13Z" fill="#dfe7f2"/></svg>
<div style="position:absolute;top:1050.2px;line-height:19px;font-size:15px;color:#ffffff;white-space:nowrap;letter-spacing:-1.25px;left:1553.5px;">10°C</div>
<div style="position:absolute;top:1050.2px;line-height:19px;font-size:15px;color:#ffffff;white-space:nowrap;letter-spacing:-0.97px;left:1591.5px;">Eclaircies</div>
<svg style="position:absolute;left:1671px;top:1056.5px;" width="12" height="8" viewBox="0 0 12 8"><path d="M0.800 7 L6 1.500 L11.200 7" fill="none" stroke="#fff" stroke-width="1.400"/></svg>
<svg style="position:absolute;left:1695px;top:1052px;" width="14" height="17" viewBox="0 0 14 17"><rect x="1" y="4.500" width="8" height="8" rx="2" fill="none" stroke="#fff" stroke-width="1.200"/><path d="M9.500 7.500 L13 5.500 V11.500 L9.500 9.500" fill="none" stroke="#fff" stroke-width="1.100"/><path d="M2 2.500 Q5 0 8 2.500 M2 14.500 Q5 17 8 14.500" fill="none" stroke="#fff" stroke-width="1"/></svg>
<svg style="position:absolute;left:1719px;top:1053px;" width="15" height="15" viewBox="0 0 15 15"><path d="M1 14 A13 13 0 0 1 14 1" fill="none" stroke="#fff" stroke-width="1.200"/><path d="M4.500 14 A9.500 9.500 0 0 1 14 4.500" fill="none" stroke="#fff" stroke-width="1.200"/><path d="M8 14 A6 6 0 0 1 14 8" fill="none" stroke="#fff" stroke-width="1.200"/><circle cx="12" cy="12.500" r="1.600" fill="#fff"/></svg>
<svg style="position:absolute;left:1741px;top:1053px;" width="16" height="14" viewBox="0 0 16 14"><path d="M0.700 4.500 H3.500 L7.500 1 V13 L3.500 9.500 H0.700Z" fill="none" stroke="#fff" stroke-width="1.100"/><path d="M9.500 4.500 a3.500 3.500 0 0 1 0 5 M11.500 2.500 a6 6 0 0 1 0 9 M13.500 1 a8.500 8.500 0 0 1 0 12" fill="none" stroke="#fff" stroke-width="1"/></svg>
<div style="position:absolute;top:1052.2px;line-height:16px;font-size:12px;color:#ffffff;white-space:nowrap;letter-spacing:-1.17px;left:1768.5px;">FRA</div>
<div style="position:absolute;top:1043.2px;line-height:16px;font-size:12px;color:#ffffff;white-space:nowrap;letter-spacing:-0.61px;left:1818.0px;">22:26</div>
<div style="position:absolute;top:1061.2px;line-height:16px;font-size:12px;color:#ffffff;white-space:nowrap;letter-spacing:-0.21px;left:1803.0px;">09/12/2024</div>
<svg style="position:absolute;left:1879px;top:1051.5px;" width="26" height="24" viewBox="0 0 26 24"><path d="M0.600 0.600 H15.600 V12 H8 L4 15.500 V12 H0.600Z" fill="#fff"/><path d="M3 3.500 H13 M3 6 H13 M3 8.500 H13" stroke="#1c2b48" stroke-width="1"/><circle cx="16" cy="15" r="8" fill="#1c2b48" stroke="#9aa4b4" stroke-width="1"/><text x="16" y="19" font-family="Liberation Sans" font-size="10.500" text-anchor="middle" fill="#fff" textLength="10">15</text></svg>
<div style="position:absolute;left:1914px;top:1040px;width:1px;height:40px;background:#7a8496;"></div>
</body></html>
